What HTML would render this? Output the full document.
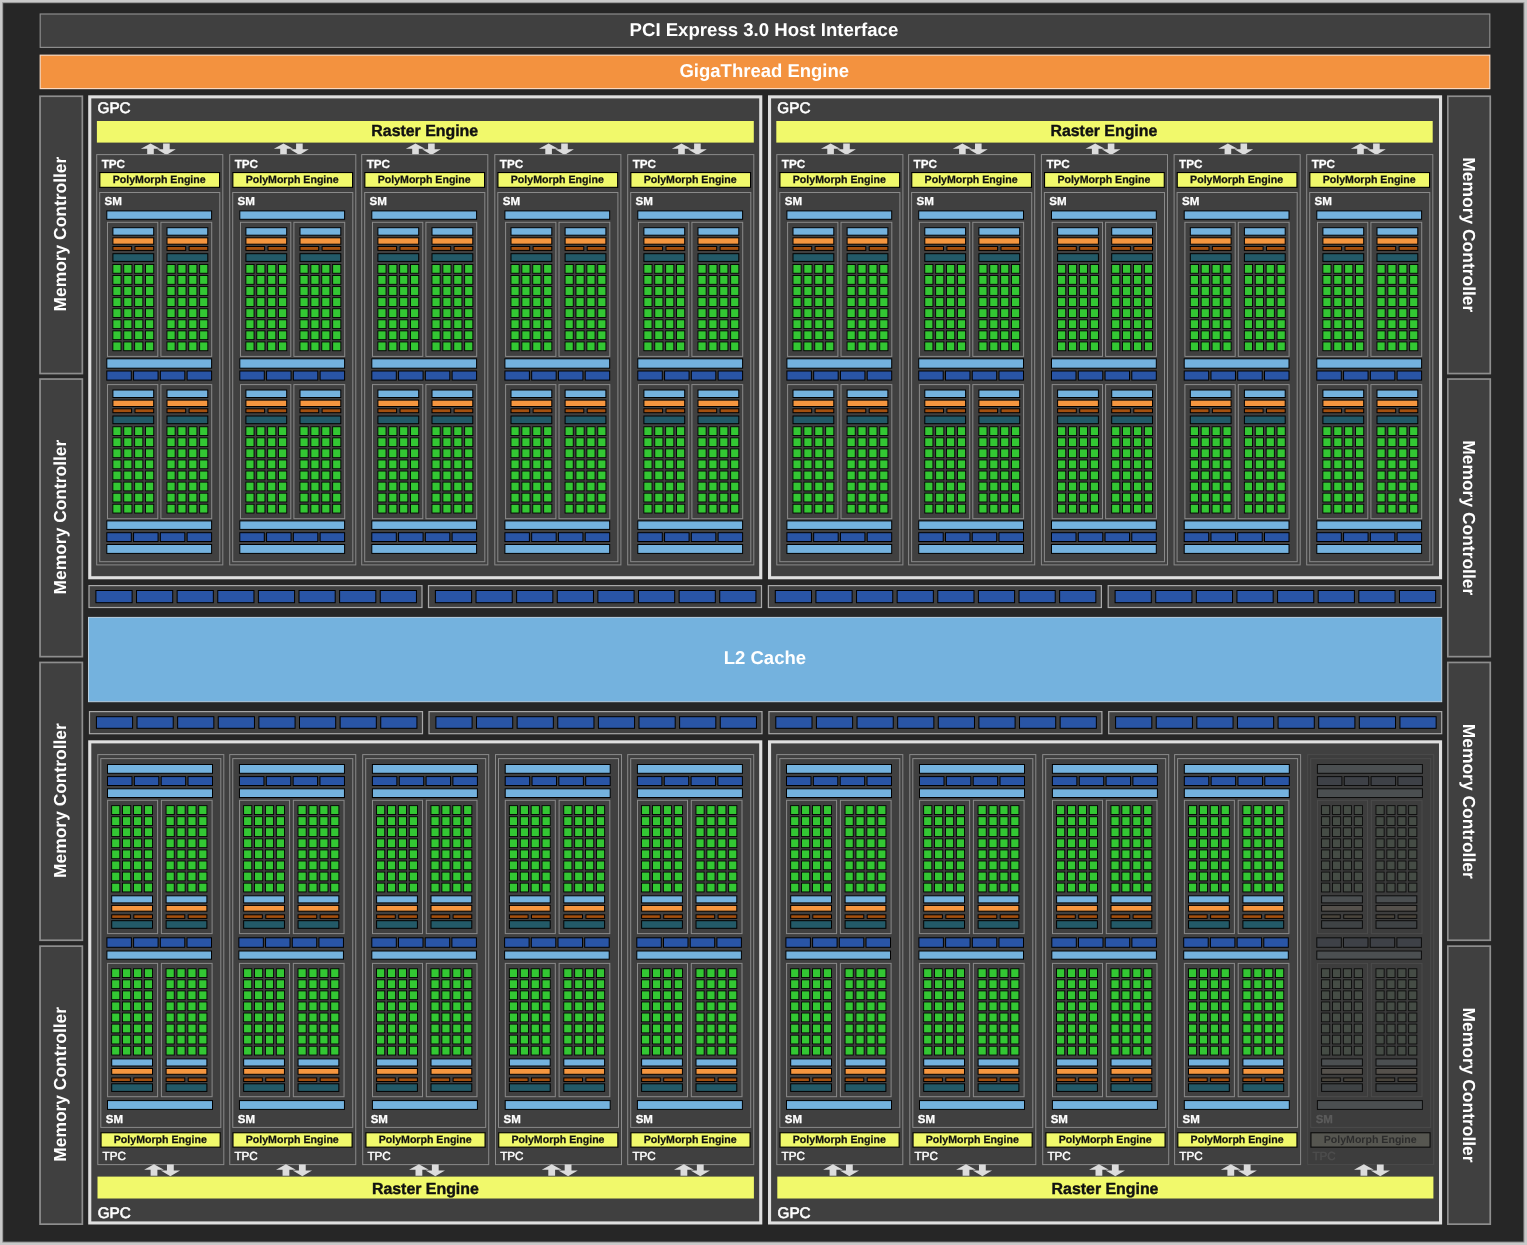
<!DOCTYPE html>
<html lang="en"><head><meta charset="utf-8"><title>GPU Block Diagram</title>
<style>
html,body{margin:0;padding:0;background:#262626;}
body{width:1527px;height:1245px;overflow:hidden;font-family:"Liberation Sans",Arial,sans-serif;}
svg{display:block;will-change:transform;text-rendering:geometricPrecision;}
</style></head><body>
<svg width="1527" height="1245" viewBox="0 0 1527 1245" font-family="'Liberation Sans', Arial, sans-serif" font-weight="bold">
<rect x="0" y="0" width="1527" height="1245" fill="#c9c9c9"/>
<rect x="2.2" y="2.2" width="1522.2" height="1240.4" fill="#8f8f8f"/>
<rect x="3.2" y="3.2" width="1520.2" height="1238.4" fill="#262626"/>
<rect x="40.2" y="14" width="1449.6" height="33.4" fill="#404040" stroke="#8c8c8c" stroke-width="1.2"/>
<text x="763.9" y="35.7" font-size="18.6" fill="#fff" text-anchor="middle">PCI Express 3.0 Host Interface</text>
<rect x="40.2" y="55.2" width="1449.6" height="33.4" fill="#f3923f" stroke="#fbd9c0" stroke-width="1.2"/>
<text x="764.3" y="76.8" font-size="18.5" fill="#fff" text-anchor="middle">GigaThread Engine</text>
<rect x="40.05" y="96.25" width="42.3" height="277.3" fill="#404040" stroke="#8e8e8e" stroke-width="1.7"/>
<text transform="translate(65.9,234.1) rotate(-90)" font-size="17.42" fill="#fff" text-anchor="middle">Memory Controller</text>
<rect x="1447.85" y="96.25" width="42.4" height="277.3" fill="#404040" stroke="#8e8e8e" stroke-width="1.7"/>
<text transform="translate(1463.3,234.8) rotate(90)" font-size="17.45" fill="#fff" text-anchor="middle">Memory Controller</text>
<rect x="40.05" y="379.05" width="42.3" height="277.6" fill="#404040" stroke="#8e8e8e" stroke-width="1.7"/>
<text transform="translate(65.9,517.05) rotate(-90)" font-size="17.42" fill="#fff" text-anchor="middle">Memory Controller</text>
<rect x="1447.85" y="379.05" width="42.4" height="277.6" fill="#404040" stroke="#8e8e8e" stroke-width="1.7"/>
<text transform="translate(1463.3,517.75) rotate(90)" font-size="17.45" fill="#fff" text-anchor="middle">Memory Controller</text>
<rect x="40.05" y="662.45" width="42.3" height="277.8" fill="#404040" stroke="#8e8e8e" stroke-width="1.7"/>
<text transform="translate(65.9,800.55) rotate(-90)" font-size="17.42" fill="#fff" text-anchor="middle">Memory Controller</text>
<rect x="1447.85" y="662.45" width="42.4" height="277.8" fill="#404040" stroke="#8e8e8e" stroke-width="1.7"/>
<text transform="translate(1463.3,801.25) rotate(90)" font-size="17.45" fill="#fff" text-anchor="middle">Memory Controller</text>
<rect x="40.05" y="946.15" width="42.3" height="278" fill="#404040" stroke="#8e8e8e" stroke-width="1.7"/>
<text transform="translate(65.9,1084.35) rotate(-90)" font-size="17.42" fill="#fff" text-anchor="middle">Memory Controller</text>
<rect x="1447.85" y="946.15" width="42.4" height="278" fill="#404040" stroke="#8e8e8e" stroke-width="1.7"/>
<text transform="translate(1463.3,1085.05) rotate(90)" font-size="17.45" fill="#fff" text-anchor="middle">Memory Controller</text>
<rect x="89.75" y="96.85" width="671" height="480.9" fill="#404040" stroke="#dfdfdf" stroke-width="3.1"/>
<text x="97.5" y="112.6" font-size="15.3" fill="#fff" font-weight="normal" stroke="#fff" stroke-width="0.6">GPC</text>
<rect x="96.9" y="121" width="656.9" height="21.6" fill="#f1f96b"/>
<text x="424.75" y="135.8" font-size="15.9" fill="#111" text-anchor="middle" stroke="#111" stroke-width="0.4">Raster Engine</text>
<polygon fill="#dcdcdc" points="150.5,143.4 160.1,148.66 153.8,148.66 153.8,154.6 147.2,154.6 147.2,148.66 140.9,148.66"/>
<polygon fill="#dcdcdc" points="163.1,143.6 169.7,143.6 169.7,149.34 175.8,149.34 166.4,155 157.1,149.34 163.1,149.34"/>
<rect x="96.7" y="154.6" width="126.1" height="410.3" fill="#404040" stroke="#8a8a8a" stroke-width="1"/>
<text x="101.7" y="167.7" font-size="11.7" fill="#fff" stroke="#fff" stroke-width="0.25">TPC</text>
<rect x="99.85" y="172.55" width="119.7" height="14.8" fill="#f1f96b" stroke="#000" stroke-width="1.1"/>
<text x="159.2" y="182.7" font-size="10.6" fill="#111" text-anchor="middle" stroke="#111" stroke-width="0.25">PolyMorph Engine</text>
<rect x="99.7" y="192.5" width="120.1" height="369.2" fill="#404040" stroke="#8a8a8a" stroke-width="1"/>
<text x="104.6" y="205.1" font-size="11.6" fill="#fff" stroke="#fff" stroke-width="0.25">SM</text>
<rect x="106.8" y="210.9" width="104.8" height="8.4" fill="#74b2de" stroke="#000" stroke-width="1"/>
<rect x="107.5" y="222.3" width="50.3" height="134.1" fill="#404040" stroke="#8a8a8a" stroke-width="1"/>
<rect x="160.9" y="222.3" width="50.8" height="134.1" fill="#404040" stroke="#8a8a8a" stroke-width="1"/>
<g transform="translate(112.4,221.8)">
<rect x="0.5" y="5.9" width="40.8" height="7.5" fill="#74b2de" stroke="#000" stroke-width="1"/>
<rect x="0.5" y="16" width="40.8" height="6.4" fill="#f5963f" stroke="#000" stroke-width="1"/>
<rect x="0.5" y="24.7" width="18.7" height="3.9" fill="#a5500f" stroke="#000" stroke-width="1"/>
<rect x="22.6" y="24.7" width="18.7" height="3.9" fill="#a5500f" stroke="#000" stroke-width="1"/>
<rect x="0.5" y="31.9" width="40.8" height="7.7" fill="#235a68" stroke="#000" stroke-width="1"/>
<g fill="#33c733" stroke="#000" stroke-width="0.9">
<rect x="0.45" y="42.65" width="8.2" height="8.8"/>
<rect x="11.35" y="42.65" width="8.2" height="8.8"/>
<rect x="22.25" y="42.65" width="8.2" height="8.8"/>
<rect x="33.15" y="42.65" width="8.2" height="8.8"/>
<rect x="0.45" y="53.72" width="8.2" height="8.8"/>
<rect x="11.35" y="53.72" width="8.2" height="8.8"/>
<rect x="22.25" y="53.72" width="8.2" height="8.8"/>
<rect x="33.15" y="53.72" width="8.2" height="8.8"/>
<rect x="0.45" y="64.79" width="8.2" height="8.8"/>
<rect x="11.35" y="64.79" width="8.2" height="8.8"/>
<rect x="22.25" y="64.79" width="8.2" height="8.8"/>
<rect x="33.15" y="64.79" width="8.2" height="8.8"/>
<rect x="0.45" y="75.86" width="8.2" height="8.8"/>
<rect x="11.35" y="75.86" width="8.2" height="8.8"/>
<rect x="22.25" y="75.86" width="8.2" height="8.8"/>
<rect x="33.15" y="75.86" width="8.2" height="8.8"/>
<rect x="0.45" y="86.93" width="8.2" height="8.8"/>
<rect x="11.35" y="86.93" width="8.2" height="8.8"/>
<rect x="22.25" y="86.93" width="8.2" height="8.8"/>
<rect x="33.15" y="86.93" width="8.2" height="8.8"/>
<rect x="0.45" y="98" width="8.2" height="8.8"/>
<rect x="11.35" y="98" width="8.2" height="8.8"/>
<rect x="22.25" y="98" width="8.2" height="8.8"/>
<rect x="33.15" y="98" width="8.2" height="8.8"/>
<rect x="0.45" y="109.07" width="8.2" height="8.8"/>
<rect x="11.35" y="109.07" width="8.2" height="8.8"/>
<rect x="22.25" y="109.07" width="8.2" height="8.8"/>
<rect x="33.15" y="109.07" width="8.2" height="8.8"/>
<rect x="0.45" y="120.14" width="8.2" height="8.8"/>
<rect x="11.35" y="120.14" width="8.2" height="8.8"/>
<rect x="22.25" y="120.14" width="8.2" height="8.8"/>
<rect x="33.15" y="120.14" width="8.2" height="8.8"/>
</g>
</g>
<g transform="translate(166.5,221.8)">
<rect x="0.5" y="5.9" width="40.8" height="7.5" fill="#74b2de" stroke="#000" stroke-width="1"/>
<rect x="0.5" y="16" width="40.8" height="6.4" fill="#f5963f" stroke="#000" stroke-width="1"/>
<rect x="0.5" y="24.7" width="18.7" height="3.9" fill="#a5500f" stroke="#000" stroke-width="1"/>
<rect x="22.6" y="24.7" width="18.7" height="3.9" fill="#a5500f" stroke="#000" stroke-width="1"/>
<rect x="0.5" y="31.9" width="40.8" height="7.7" fill="#235a68" stroke="#000" stroke-width="1"/>
<g fill="#33c733" stroke="#000" stroke-width="0.9">
<rect x="0.45" y="42.65" width="8.2" height="8.8"/>
<rect x="11.35" y="42.65" width="8.2" height="8.8"/>
<rect x="22.25" y="42.65" width="8.2" height="8.8"/>
<rect x="33.15" y="42.65" width="8.2" height="8.8"/>
<rect x="0.45" y="53.72" width="8.2" height="8.8"/>
<rect x="11.35" y="53.72" width="8.2" height="8.8"/>
<rect x="22.25" y="53.72" width="8.2" height="8.8"/>
<rect x="33.15" y="53.72" width="8.2" height="8.8"/>
<rect x="0.45" y="64.79" width="8.2" height="8.8"/>
<rect x="11.35" y="64.79" width="8.2" height="8.8"/>
<rect x="22.25" y="64.79" width="8.2" height="8.8"/>
<rect x="33.15" y="64.79" width="8.2" height="8.8"/>
<rect x="0.45" y="75.86" width="8.2" height="8.8"/>
<rect x="11.35" y="75.86" width="8.2" height="8.8"/>
<rect x="22.25" y="75.86" width="8.2" height="8.8"/>
<rect x="33.15" y="75.86" width="8.2" height="8.8"/>
<rect x="0.45" y="86.93" width="8.2" height="8.8"/>
<rect x="11.35" y="86.93" width="8.2" height="8.8"/>
<rect x="22.25" y="86.93" width="8.2" height="8.8"/>
<rect x="33.15" y="86.93" width="8.2" height="8.8"/>
<rect x="0.45" y="98" width="8.2" height="8.8"/>
<rect x="11.35" y="98" width="8.2" height="8.8"/>
<rect x="22.25" y="98" width="8.2" height="8.8"/>
<rect x="33.15" y="98" width="8.2" height="8.8"/>
<rect x="0.45" y="109.07" width="8.2" height="8.8"/>
<rect x="11.35" y="109.07" width="8.2" height="8.8"/>
<rect x="22.25" y="109.07" width="8.2" height="8.8"/>
<rect x="33.15" y="109.07" width="8.2" height="8.8"/>
<rect x="0.45" y="120.14" width="8.2" height="8.8"/>
<rect x="11.35" y="120.14" width="8.2" height="8.8"/>
<rect x="22.25" y="120.14" width="8.2" height="8.8"/>
<rect x="33.15" y="120.14" width="8.2" height="8.8"/>
</g>
</g>
<rect x="107.5" y="384.6" width="50.3" height="134.1" fill="#404040" stroke="#8a8a8a" stroke-width="1"/>
<rect x="160.9" y="384.6" width="50.8" height="134.1" fill="#404040" stroke="#8a8a8a" stroke-width="1"/>
<g transform="translate(112.4,384.1)">
<rect x="0.5" y="5.9" width="40.8" height="7.5" fill="#74b2de" stroke="#000" stroke-width="1"/>
<rect x="0.5" y="16" width="40.8" height="6.4" fill="#f5963f" stroke="#000" stroke-width="1"/>
<rect x="0.5" y="24.7" width="18.7" height="3.9" fill="#a5500f" stroke="#000" stroke-width="1"/>
<rect x="22.6" y="24.7" width="18.7" height="3.9" fill="#a5500f" stroke="#000" stroke-width="1"/>
<rect x="0.5" y="31.9" width="40.8" height="7.7" fill="#235a68" stroke="#000" stroke-width="1"/>
<g fill="#33c733" stroke="#000" stroke-width="0.9">
<rect x="0.45" y="42.65" width="8.2" height="8.8"/>
<rect x="11.35" y="42.65" width="8.2" height="8.8"/>
<rect x="22.25" y="42.65" width="8.2" height="8.8"/>
<rect x="33.15" y="42.65" width="8.2" height="8.8"/>
<rect x="0.45" y="53.72" width="8.2" height="8.8"/>
<rect x="11.35" y="53.72" width="8.2" height="8.8"/>
<rect x="22.25" y="53.72" width="8.2" height="8.8"/>
<rect x="33.15" y="53.72" width="8.2" height="8.8"/>
<rect x="0.45" y="64.79" width="8.2" height="8.8"/>
<rect x="11.35" y="64.79" width="8.2" height="8.8"/>
<rect x="22.25" y="64.79" width="8.2" height="8.8"/>
<rect x="33.15" y="64.79" width="8.2" height="8.8"/>
<rect x="0.45" y="75.86" width="8.2" height="8.8"/>
<rect x="11.35" y="75.86" width="8.2" height="8.8"/>
<rect x="22.25" y="75.86" width="8.2" height="8.8"/>
<rect x="33.15" y="75.86" width="8.2" height="8.8"/>
<rect x="0.45" y="86.93" width="8.2" height="8.8"/>
<rect x="11.35" y="86.93" width="8.2" height="8.8"/>
<rect x="22.25" y="86.93" width="8.2" height="8.8"/>
<rect x="33.15" y="86.93" width="8.2" height="8.8"/>
<rect x="0.45" y="98" width="8.2" height="8.8"/>
<rect x="11.35" y="98" width="8.2" height="8.8"/>
<rect x="22.25" y="98" width="8.2" height="8.8"/>
<rect x="33.15" y="98" width="8.2" height="8.8"/>
<rect x="0.45" y="109.07" width="8.2" height="8.8"/>
<rect x="11.35" y="109.07" width="8.2" height="8.8"/>
<rect x="22.25" y="109.07" width="8.2" height="8.8"/>
<rect x="33.15" y="109.07" width="8.2" height="8.8"/>
<rect x="0.45" y="120.14" width="8.2" height="8.8"/>
<rect x="11.35" y="120.14" width="8.2" height="8.8"/>
<rect x="22.25" y="120.14" width="8.2" height="8.8"/>
<rect x="33.15" y="120.14" width="8.2" height="8.8"/>
</g>
</g>
<g transform="translate(166.5,384.1)">
<rect x="0.5" y="5.9" width="40.8" height="7.5" fill="#74b2de" stroke="#000" stroke-width="1"/>
<rect x="0.5" y="16" width="40.8" height="6.4" fill="#f5963f" stroke="#000" stroke-width="1"/>
<rect x="0.5" y="24.7" width="18.7" height="3.9" fill="#a5500f" stroke="#000" stroke-width="1"/>
<rect x="22.6" y="24.7" width="18.7" height="3.9" fill="#a5500f" stroke="#000" stroke-width="1"/>
<rect x="0.5" y="31.9" width="40.8" height="7.7" fill="#235a68" stroke="#000" stroke-width="1"/>
<g fill="#33c733" stroke="#000" stroke-width="0.9">
<rect x="0.45" y="42.65" width="8.2" height="8.8"/>
<rect x="11.35" y="42.65" width="8.2" height="8.8"/>
<rect x="22.25" y="42.65" width="8.2" height="8.8"/>
<rect x="33.15" y="42.65" width="8.2" height="8.8"/>
<rect x="0.45" y="53.72" width="8.2" height="8.8"/>
<rect x="11.35" y="53.72" width="8.2" height="8.8"/>
<rect x="22.25" y="53.72" width="8.2" height="8.8"/>
<rect x="33.15" y="53.72" width="8.2" height="8.8"/>
<rect x="0.45" y="64.79" width="8.2" height="8.8"/>
<rect x="11.35" y="64.79" width="8.2" height="8.8"/>
<rect x="22.25" y="64.79" width="8.2" height="8.8"/>
<rect x="33.15" y="64.79" width="8.2" height="8.8"/>
<rect x="0.45" y="75.86" width="8.2" height="8.8"/>
<rect x="11.35" y="75.86" width="8.2" height="8.8"/>
<rect x="22.25" y="75.86" width="8.2" height="8.8"/>
<rect x="33.15" y="75.86" width="8.2" height="8.8"/>
<rect x="0.45" y="86.93" width="8.2" height="8.8"/>
<rect x="11.35" y="86.93" width="8.2" height="8.8"/>
<rect x="22.25" y="86.93" width="8.2" height="8.8"/>
<rect x="33.15" y="86.93" width="8.2" height="8.8"/>
<rect x="0.45" y="98" width="8.2" height="8.8"/>
<rect x="11.35" y="98" width="8.2" height="8.8"/>
<rect x="22.25" y="98" width="8.2" height="8.8"/>
<rect x="33.15" y="98" width="8.2" height="8.8"/>
<rect x="0.45" y="109.07" width="8.2" height="8.8"/>
<rect x="11.35" y="109.07" width="8.2" height="8.8"/>
<rect x="22.25" y="109.07" width="8.2" height="8.8"/>
<rect x="33.15" y="109.07" width="8.2" height="8.8"/>
<rect x="0.45" y="120.14" width="8.2" height="8.8"/>
<rect x="11.35" y="120.14" width="8.2" height="8.8"/>
<rect x="22.25" y="120.14" width="8.2" height="8.8"/>
<rect x="33.15" y="120.14" width="8.2" height="8.8"/>
</g>
</g>
<rect x="106.8" y="358.8" width="104.8" height="9.4" fill="#74b2de" stroke="#000" stroke-width="1"/>
<rect x="106.8" y="371" width="24.5" height="9.1" fill="#2955a6" stroke="#000" stroke-width="1"/>
<rect x="133.57" y="371" width="24.5" height="9.1" fill="#2955a6" stroke="#000" stroke-width="1"/>
<rect x="160.33" y="371" width="24.5" height="9.1" fill="#2955a6" stroke="#000" stroke-width="1"/>
<rect x="187.1" y="371" width="24.5" height="9.1" fill="#2955a6" stroke="#000" stroke-width="1"/>
<rect x="106.8" y="520.9" width="104.8" height="8.5" fill="#74b2de" stroke="#000" stroke-width="1"/>
<rect x="106.8" y="532.7" width="24.5" height="8.8" fill="#2955a6" stroke="#000" stroke-width="1"/>
<rect x="133.57" y="532.7" width="24.5" height="8.8" fill="#2955a6" stroke="#000" stroke-width="1"/>
<rect x="160.33" y="532.7" width="24.5" height="8.8" fill="#2955a6" stroke="#000" stroke-width="1"/>
<rect x="187.1" y="532.7" width="24.5" height="8.8" fill="#2955a6" stroke="#000" stroke-width="1"/>
<rect x="106.8" y="544.5" width="104.8" height="8.9" fill="#74b2de" stroke="#000" stroke-width="1"/>
<polygon fill="#dcdcdc" points="283.5,143.4 293.1,148.66 286.8,148.66 286.8,154.6 280.2,154.6 280.2,148.66 273.9,148.66"/>
<polygon fill="#dcdcdc" points="296.1,143.6 302.7,143.6 302.7,149.34 308.8,149.34 299.4,155 290.1,149.34 296.1,149.34"/>
<rect x="229.7" y="154.6" width="126.1" height="410.3" fill="#404040" stroke="#8a8a8a" stroke-width="1"/>
<text x="234.7" y="167.7" font-size="11.7" fill="#fff" stroke="#fff" stroke-width="0.25">TPC</text>
<rect x="232.85" y="172.55" width="119.7" height="14.8" fill="#f1f96b" stroke="#000" stroke-width="1.1"/>
<text x="292.2" y="182.7" font-size="10.6" fill="#111" text-anchor="middle" stroke="#111" stroke-width="0.25">PolyMorph Engine</text>
<rect x="232.7" y="192.5" width="120.1" height="369.2" fill="#404040" stroke="#8a8a8a" stroke-width="1"/>
<text x="237.6" y="205.1" font-size="11.6" fill="#fff" stroke="#fff" stroke-width="0.25">SM</text>
<rect x="239.8" y="210.9" width="104.8" height="8.4" fill="#74b2de" stroke="#000" stroke-width="1"/>
<rect x="240.5" y="222.3" width="50.3" height="134.1" fill="#404040" stroke="#8a8a8a" stroke-width="1"/>
<rect x="293.9" y="222.3" width="50.8" height="134.1" fill="#404040" stroke="#8a8a8a" stroke-width="1"/>
<g transform="translate(245.4,221.8)">
<rect x="0.5" y="5.9" width="40.8" height="7.5" fill="#74b2de" stroke="#000" stroke-width="1"/>
<rect x="0.5" y="16" width="40.8" height="6.4" fill="#f5963f" stroke="#000" stroke-width="1"/>
<rect x="0.5" y="24.7" width="18.7" height="3.9" fill="#a5500f" stroke="#000" stroke-width="1"/>
<rect x="22.6" y="24.7" width="18.7" height="3.9" fill="#a5500f" stroke="#000" stroke-width="1"/>
<rect x="0.5" y="31.9" width="40.8" height="7.7" fill="#235a68" stroke="#000" stroke-width="1"/>
<g fill="#33c733" stroke="#000" stroke-width="0.9">
<rect x="0.45" y="42.65" width="8.2" height="8.8"/>
<rect x="11.35" y="42.65" width="8.2" height="8.8"/>
<rect x="22.25" y="42.65" width="8.2" height="8.8"/>
<rect x="33.15" y="42.65" width="8.2" height="8.8"/>
<rect x="0.45" y="53.72" width="8.2" height="8.8"/>
<rect x="11.35" y="53.72" width="8.2" height="8.8"/>
<rect x="22.25" y="53.72" width="8.2" height="8.8"/>
<rect x="33.15" y="53.72" width="8.2" height="8.8"/>
<rect x="0.45" y="64.79" width="8.2" height="8.8"/>
<rect x="11.35" y="64.79" width="8.2" height="8.8"/>
<rect x="22.25" y="64.79" width="8.2" height="8.8"/>
<rect x="33.15" y="64.79" width="8.2" height="8.8"/>
<rect x="0.45" y="75.86" width="8.2" height="8.8"/>
<rect x="11.35" y="75.86" width="8.2" height="8.8"/>
<rect x="22.25" y="75.86" width="8.2" height="8.8"/>
<rect x="33.15" y="75.86" width="8.2" height="8.8"/>
<rect x="0.45" y="86.93" width="8.2" height="8.8"/>
<rect x="11.35" y="86.93" width="8.2" height="8.8"/>
<rect x="22.25" y="86.93" width="8.2" height="8.8"/>
<rect x="33.15" y="86.93" width="8.2" height="8.8"/>
<rect x="0.45" y="98" width="8.2" height="8.8"/>
<rect x="11.35" y="98" width="8.2" height="8.8"/>
<rect x="22.25" y="98" width="8.2" height="8.8"/>
<rect x="33.15" y="98" width="8.2" height="8.8"/>
<rect x="0.45" y="109.07" width="8.2" height="8.8"/>
<rect x="11.35" y="109.07" width="8.2" height="8.8"/>
<rect x="22.25" y="109.07" width="8.2" height="8.8"/>
<rect x="33.15" y="109.07" width="8.2" height="8.8"/>
<rect x="0.45" y="120.14" width="8.2" height="8.8"/>
<rect x="11.35" y="120.14" width="8.2" height="8.8"/>
<rect x="22.25" y="120.14" width="8.2" height="8.8"/>
<rect x="33.15" y="120.14" width="8.2" height="8.8"/>
</g>
</g>
<g transform="translate(299.5,221.8)">
<rect x="0.5" y="5.9" width="40.8" height="7.5" fill="#74b2de" stroke="#000" stroke-width="1"/>
<rect x="0.5" y="16" width="40.8" height="6.4" fill="#f5963f" stroke="#000" stroke-width="1"/>
<rect x="0.5" y="24.7" width="18.7" height="3.9" fill="#a5500f" stroke="#000" stroke-width="1"/>
<rect x="22.6" y="24.7" width="18.7" height="3.9" fill="#a5500f" stroke="#000" stroke-width="1"/>
<rect x="0.5" y="31.9" width="40.8" height="7.7" fill="#235a68" stroke="#000" stroke-width="1"/>
<g fill="#33c733" stroke="#000" stroke-width="0.9">
<rect x="0.45" y="42.65" width="8.2" height="8.8"/>
<rect x="11.35" y="42.65" width="8.2" height="8.8"/>
<rect x="22.25" y="42.65" width="8.2" height="8.8"/>
<rect x="33.15" y="42.65" width="8.2" height="8.8"/>
<rect x="0.45" y="53.72" width="8.2" height="8.8"/>
<rect x="11.35" y="53.72" width="8.2" height="8.8"/>
<rect x="22.25" y="53.72" width="8.2" height="8.8"/>
<rect x="33.15" y="53.72" width="8.2" height="8.8"/>
<rect x="0.45" y="64.79" width="8.2" height="8.8"/>
<rect x="11.35" y="64.79" width="8.2" height="8.8"/>
<rect x="22.25" y="64.79" width="8.2" height="8.8"/>
<rect x="33.15" y="64.79" width="8.2" height="8.8"/>
<rect x="0.45" y="75.86" width="8.2" height="8.8"/>
<rect x="11.35" y="75.86" width="8.2" height="8.8"/>
<rect x="22.25" y="75.86" width="8.2" height="8.8"/>
<rect x="33.15" y="75.86" width="8.2" height="8.8"/>
<rect x="0.45" y="86.93" width="8.2" height="8.8"/>
<rect x="11.35" y="86.93" width="8.2" height="8.8"/>
<rect x="22.25" y="86.93" width="8.2" height="8.8"/>
<rect x="33.15" y="86.93" width="8.2" height="8.8"/>
<rect x="0.45" y="98" width="8.2" height="8.8"/>
<rect x="11.35" y="98" width="8.2" height="8.8"/>
<rect x="22.25" y="98" width="8.2" height="8.8"/>
<rect x="33.15" y="98" width="8.2" height="8.8"/>
<rect x="0.45" y="109.07" width="8.2" height="8.8"/>
<rect x="11.35" y="109.07" width="8.2" height="8.8"/>
<rect x="22.25" y="109.07" width="8.2" height="8.8"/>
<rect x="33.15" y="109.07" width="8.2" height="8.8"/>
<rect x="0.45" y="120.14" width="8.2" height="8.8"/>
<rect x="11.35" y="120.14" width="8.2" height="8.8"/>
<rect x="22.25" y="120.14" width="8.2" height="8.8"/>
<rect x="33.15" y="120.14" width="8.2" height="8.8"/>
</g>
</g>
<rect x="240.5" y="384.6" width="50.3" height="134.1" fill="#404040" stroke="#8a8a8a" stroke-width="1"/>
<rect x="293.9" y="384.6" width="50.8" height="134.1" fill="#404040" stroke="#8a8a8a" stroke-width="1"/>
<g transform="translate(245.4,384.1)">
<rect x="0.5" y="5.9" width="40.8" height="7.5" fill="#74b2de" stroke="#000" stroke-width="1"/>
<rect x="0.5" y="16" width="40.8" height="6.4" fill="#f5963f" stroke="#000" stroke-width="1"/>
<rect x="0.5" y="24.7" width="18.7" height="3.9" fill="#a5500f" stroke="#000" stroke-width="1"/>
<rect x="22.6" y="24.7" width="18.7" height="3.9" fill="#a5500f" stroke="#000" stroke-width="1"/>
<rect x="0.5" y="31.9" width="40.8" height="7.7" fill="#235a68" stroke="#000" stroke-width="1"/>
<g fill="#33c733" stroke="#000" stroke-width="0.9">
<rect x="0.45" y="42.65" width="8.2" height="8.8"/>
<rect x="11.35" y="42.65" width="8.2" height="8.8"/>
<rect x="22.25" y="42.65" width="8.2" height="8.8"/>
<rect x="33.15" y="42.65" width="8.2" height="8.8"/>
<rect x="0.45" y="53.72" width="8.2" height="8.8"/>
<rect x="11.35" y="53.72" width="8.2" height="8.8"/>
<rect x="22.25" y="53.72" width="8.2" height="8.8"/>
<rect x="33.15" y="53.72" width="8.2" height="8.8"/>
<rect x="0.45" y="64.79" width="8.2" height="8.8"/>
<rect x="11.35" y="64.79" width="8.2" height="8.8"/>
<rect x="22.25" y="64.79" width="8.2" height="8.8"/>
<rect x="33.15" y="64.79" width="8.2" height="8.8"/>
<rect x="0.45" y="75.86" width="8.2" height="8.8"/>
<rect x="11.35" y="75.86" width="8.2" height="8.8"/>
<rect x="22.25" y="75.86" width="8.2" height="8.8"/>
<rect x="33.15" y="75.86" width="8.2" height="8.8"/>
<rect x="0.45" y="86.93" width="8.2" height="8.8"/>
<rect x="11.35" y="86.93" width="8.2" height="8.8"/>
<rect x="22.25" y="86.93" width="8.2" height="8.8"/>
<rect x="33.15" y="86.93" width="8.2" height="8.8"/>
<rect x="0.45" y="98" width="8.2" height="8.8"/>
<rect x="11.35" y="98" width="8.2" height="8.8"/>
<rect x="22.25" y="98" width="8.2" height="8.8"/>
<rect x="33.15" y="98" width="8.2" height="8.8"/>
<rect x="0.45" y="109.07" width="8.2" height="8.8"/>
<rect x="11.35" y="109.07" width="8.2" height="8.8"/>
<rect x="22.25" y="109.07" width="8.2" height="8.8"/>
<rect x="33.15" y="109.07" width="8.2" height="8.8"/>
<rect x="0.45" y="120.14" width="8.2" height="8.8"/>
<rect x="11.35" y="120.14" width="8.2" height="8.8"/>
<rect x="22.25" y="120.14" width="8.2" height="8.8"/>
<rect x="33.15" y="120.14" width="8.2" height="8.8"/>
</g>
</g>
<g transform="translate(299.5,384.1)">
<rect x="0.5" y="5.9" width="40.8" height="7.5" fill="#74b2de" stroke="#000" stroke-width="1"/>
<rect x="0.5" y="16" width="40.8" height="6.4" fill="#f5963f" stroke="#000" stroke-width="1"/>
<rect x="0.5" y="24.7" width="18.7" height="3.9" fill="#a5500f" stroke="#000" stroke-width="1"/>
<rect x="22.6" y="24.7" width="18.7" height="3.9" fill="#a5500f" stroke="#000" stroke-width="1"/>
<rect x="0.5" y="31.9" width="40.8" height="7.7" fill="#235a68" stroke="#000" stroke-width="1"/>
<g fill="#33c733" stroke="#000" stroke-width="0.9">
<rect x="0.45" y="42.65" width="8.2" height="8.8"/>
<rect x="11.35" y="42.65" width="8.2" height="8.8"/>
<rect x="22.25" y="42.65" width="8.2" height="8.8"/>
<rect x="33.15" y="42.65" width="8.2" height="8.8"/>
<rect x="0.45" y="53.72" width="8.2" height="8.8"/>
<rect x="11.35" y="53.72" width="8.2" height="8.8"/>
<rect x="22.25" y="53.72" width="8.2" height="8.8"/>
<rect x="33.15" y="53.72" width="8.2" height="8.8"/>
<rect x="0.45" y="64.79" width="8.2" height="8.8"/>
<rect x="11.35" y="64.79" width="8.2" height="8.8"/>
<rect x="22.25" y="64.79" width="8.2" height="8.8"/>
<rect x="33.15" y="64.79" width="8.2" height="8.8"/>
<rect x="0.45" y="75.86" width="8.2" height="8.8"/>
<rect x="11.35" y="75.86" width="8.2" height="8.8"/>
<rect x="22.25" y="75.86" width="8.2" height="8.8"/>
<rect x="33.15" y="75.86" width="8.2" height="8.8"/>
<rect x="0.45" y="86.93" width="8.2" height="8.8"/>
<rect x="11.35" y="86.93" width="8.2" height="8.8"/>
<rect x="22.25" y="86.93" width="8.2" height="8.8"/>
<rect x="33.15" y="86.93" width="8.2" height="8.8"/>
<rect x="0.45" y="98" width="8.2" height="8.8"/>
<rect x="11.35" y="98" width="8.2" height="8.8"/>
<rect x="22.25" y="98" width="8.2" height="8.8"/>
<rect x="33.15" y="98" width="8.2" height="8.8"/>
<rect x="0.45" y="109.07" width="8.2" height="8.8"/>
<rect x="11.35" y="109.07" width="8.2" height="8.8"/>
<rect x="22.25" y="109.07" width="8.2" height="8.8"/>
<rect x="33.15" y="109.07" width="8.2" height="8.8"/>
<rect x="0.45" y="120.14" width="8.2" height="8.8"/>
<rect x="11.35" y="120.14" width="8.2" height="8.8"/>
<rect x="22.25" y="120.14" width="8.2" height="8.8"/>
<rect x="33.15" y="120.14" width="8.2" height="8.8"/>
</g>
</g>
<rect x="239.8" y="358.8" width="104.8" height="9.4" fill="#74b2de" stroke="#000" stroke-width="1"/>
<rect x="239.8" y="371" width="24.5" height="9.1" fill="#2955a6" stroke="#000" stroke-width="1"/>
<rect x="266.57" y="371" width="24.5" height="9.1" fill="#2955a6" stroke="#000" stroke-width="1"/>
<rect x="293.33" y="371" width="24.5" height="9.1" fill="#2955a6" stroke="#000" stroke-width="1"/>
<rect x="320.1" y="371" width="24.5" height="9.1" fill="#2955a6" stroke="#000" stroke-width="1"/>
<rect x="239.8" y="520.9" width="104.8" height="8.5" fill="#74b2de" stroke="#000" stroke-width="1"/>
<rect x="239.8" y="532.7" width="24.5" height="8.8" fill="#2955a6" stroke="#000" stroke-width="1"/>
<rect x="266.57" y="532.7" width="24.5" height="8.8" fill="#2955a6" stroke="#000" stroke-width="1"/>
<rect x="293.33" y="532.7" width="24.5" height="8.8" fill="#2955a6" stroke="#000" stroke-width="1"/>
<rect x="320.1" y="532.7" width="24.5" height="8.8" fill="#2955a6" stroke="#000" stroke-width="1"/>
<rect x="239.8" y="544.5" width="104.8" height="8.9" fill="#74b2de" stroke="#000" stroke-width="1"/>
<polygon fill="#dcdcdc" points="415.5,143.4 425.1,148.66 418.8,148.66 418.8,154.6 412.2,154.6 412.2,148.66 405.9,148.66"/>
<polygon fill="#dcdcdc" points="428.1,143.6 434.7,143.6 434.7,149.34 440.8,149.34 431.4,155 422.1,149.34 428.1,149.34"/>
<rect x="361.7" y="154.6" width="126.1" height="410.3" fill="#404040" stroke="#8a8a8a" stroke-width="1"/>
<text x="366.7" y="167.7" font-size="11.7" fill="#fff" stroke="#fff" stroke-width="0.25">TPC</text>
<rect x="364.85" y="172.55" width="119.7" height="14.8" fill="#f1f96b" stroke="#000" stroke-width="1.1"/>
<text x="424.2" y="182.7" font-size="10.6" fill="#111" text-anchor="middle" stroke="#111" stroke-width="0.25">PolyMorph Engine</text>
<rect x="364.7" y="192.5" width="120.1" height="369.2" fill="#404040" stroke="#8a8a8a" stroke-width="1"/>
<text x="369.6" y="205.1" font-size="11.6" fill="#fff" stroke="#fff" stroke-width="0.25">SM</text>
<rect x="371.8" y="210.9" width="104.8" height="8.4" fill="#74b2de" stroke="#000" stroke-width="1"/>
<rect x="372.5" y="222.3" width="50.3" height="134.1" fill="#404040" stroke="#8a8a8a" stroke-width="1"/>
<rect x="425.9" y="222.3" width="50.8" height="134.1" fill="#404040" stroke="#8a8a8a" stroke-width="1"/>
<g transform="translate(377.4,221.8)">
<rect x="0.5" y="5.9" width="40.8" height="7.5" fill="#74b2de" stroke="#000" stroke-width="1"/>
<rect x="0.5" y="16" width="40.8" height="6.4" fill="#f5963f" stroke="#000" stroke-width="1"/>
<rect x="0.5" y="24.7" width="18.7" height="3.9" fill="#a5500f" stroke="#000" stroke-width="1"/>
<rect x="22.6" y="24.7" width="18.7" height="3.9" fill="#a5500f" stroke="#000" stroke-width="1"/>
<rect x="0.5" y="31.9" width="40.8" height="7.7" fill="#235a68" stroke="#000" stroke-width="1"/>
<g fill="#33c733" stroke="#000" stroke-width="0.9">
<rect x="0.45" y="42.65" width="8.2" height="8.8"/>
<rect x="11.35" y="42.65" width="8.2" height="8.8"/>
<rect x="22.25" y="42.65" width="8.2" height="8.8"/>
<rect x="33.15" y="42.65" width="8.2" height="8.8"/>
<rect x="0.45" y="53.72" width="8.2" height="8.8"/>
<rect x="11.35" y="53.72" width="8.2" height="8.8"/>
<rect x="22.25" y="53.72" width="8.2" height="8.8"/>
<rect x="33.15" y="53.72" width="8.2" height="8.8"/>
<rect x="0.45" y="64.79" width="8.2" height="8.8"/>
<rect x="11.35" y="64.79" width="8.2" height="8.8"/>
<rect x="22.25" y="64.79" width="8.2" height="8.8"/>
<rect x="33.15" y="64.79" width="8.2" height="8.8"/>
<rect x="0.45" y="75.86" width="8.2" height="8.8"/>
<rect x="11.35" y="75.86" width="8.2" height="8.8"/>
<rect x="22.25" y="75.86" width="8.2" height="8.8"/>
<rect x="33.15" y="75.86" width="8.2" height="8.8"/>
<rect x="0.45" y="86.93" width="8.2" height="8.8"/>
<rect x="11.35" y="86.93" width="8.2" height="8.8"/>
<rect x="22.25" y="86.93" width="8.2" height="8.8"/>
<rect x="33.15" y="86.93" width="8.2" height="8.8"/>
<rect x="0.45" y="98" width="8.2" height="8.8"/>
<rect x="11.35" y="98" width="8.2" height="8.8"/>
<rect x="22.25" y="98" width="8.2" height="8.8"/>
<rect x="33.15" y="98" width="8.2" height="8.8"/>
<rect x="0.45" y="109.07" width="8.2" height="8.8"/>
<rect x="11.35" y="109.07" width="8.2" height="8.8"/>
<rect x="22.25" y="109.07" width="8.2" height="8.8"/>
<rect x="33.15" y="109.07" width="8.2" height="8.8"/>
<rect x="0.45" y="120.14" width="8.2" height="8.8"/>
<rect x="11.35" y="120.14" width="8.2" height="8.8"/>
<rect x="22.25" y="120.14" width="8.2" height="8.8"/>
<rect x="33.15" y="120.14" width="8.2" height="8.8"/>
</g>
</g>
<g transform="translate(431.5,221.8)">
<rect x="0.5" y="5.9" width="40.8" height="7.5" fill="#74b2de" stroke="#000" stroke-width="1"/>
<rect x="0.5" y="16" width="40.8" height="6.4" fill="#f5963f" stroke="#000" stroke-width="1"/>
<rect x="0.5" y="24.7" width="18.7" height="3.9" fill="#a5500f" stroke="#000" stroke-width="1"/>
<rect x="22.6" y="24.7" width="18.7" height="3.9" fill="#a5500f" stroke="#000" stroke-width="1"/>
<rect x="0.5" y="31.9" width="40.8" height="7.7" fill="#235a68" stroke="#000" stroke-width="1"/>
<g fill="#33c733" stroke="#000" stroke-width="0.9">
<rect x="0.45" y="42.65" width="8.2" height="8.8"/>
<rect x="11.35" y="42.65" width="8.2" height="8.8"/>
<rect x="22.25" y="42.65" width="8.2" height="8.8"/>
<rect x="33.15" y="42.65" width="8.2" height="8.8"/>
<rect x="0.45" y="53.72" width="8.2" height="8.8"/>
<rect x="11.35" y="53.72" width="8.2" height="8.8"/>
<rect x="22.25" y="53.72" width="8.2" height="8.8"/>
<rect x="33.15" y="53.72" width="8.2" height="8.8"/>
<rect x="0.45" y="64.79" width="8.2" height="8.8"/>
<rect x="11.35" y="64.79" width="8.2" height="8.8"/>
<rect x="22.25" y="64.79" width="8.2" height="8.8"/>
<rect x="33.15" y="64.79" width="8.2" height="8.8"/>
<rect x="0.45" y="75.86" width="8.2" height="8.8"/>
<rect x="11.35" y="75.86" width="8.2" height="8.8"/>
<rect x="22.25" y="75.86" width="8.2" height="8.8"/>
<rect x="33.15" y="75.86" width="8.2" height="8.8"/>
<rect x="0.45" y="86.93" width="8.2" height="8.8"/>
<rect x="11.35" y="86.93" width="8.2" height="8.8"/>
<rect x="22.25" y="86.93" width="8.2" height="8.8"/>
<rect x="33.15" y="86.93" width="8.2" height="8.8"/>
<rect x="0.45" y="98" width="8.2" height="8.8"/>
<rect x="11.35" y="98" width="8.2" height="8.8"/>
<rect x="22.25" y="98" width="8.2" height="8.8"/>
<rect x="33.15" y="98" width="8.2" height="8.8"/>
<rect x="0.45" y="109.07" width="8.2" height="8.8"/>
<rect x="11.35" y="109.07" width="8.2" height="8.8"/>
<rect x="22.25" y="109.07" width="8.2" height="8.8"/>
<rect x="33.15" y="109.07" width="8.2" height="8.8"/>
<rect x="0.45" y="120.14" width="8.2" height="8.8"/>
<rect x="11.35" y="120.14" width="8.2" height="8.8"/>
<rect x="22.25" y="120.14" width="8.2" height="8.8"/>
<rect x="33.15" y="120.14" width="8.2" height="8.8"/>
</g>
</g>
<rect x="372.5" y="384.6" width="50.3" height="134.1" fill="#404040" stroke="#8a8a8a" stroke-width="1"/>
<rect x="425.9" y="384.6" width="50.8" height="134.1" fill="#404040" stroke="#8a8a8a" stroke-width="1"/>
<g transform="translate(377.4,384.1)">
<rect x="0.5" y="5.9" width="40.8" height="7.5" fill="#74b2de" stroke="#000" stroke-width="1"/>
<rect x="0.5" y="16" width="40.8" height="6.4" fill="#f5963f" stroke="#000" stroke-width="1"/>
<rect x="0.5" y="24.7" width="18.7" height="3.9" fill="#a5500f" stroke="#000" stroke-width="1"/>
<rect x="22.6" y="24.7" width="18.7" height="3.9" fill="#a5500f" stroke="#000" stroke-width="1"/>
<rect x="0.5" y="31.9" width="40.8" height="7.7" fill="#235a68" stroke="#000" stroke-width="1"/>
<g fill="#33c733" stroke="#000" stroke-width="0.9">
<rect x="0.45" y="42.65" width="8.2" height="8.8"/>
<rect x="11.35" y="42.65" width="8.2" height="8.8"/>
<rect x="22.25" y="42.65" width="8.2" height="8.8"/>
<rect x="33.15" y="42.65" width="8.2" height="8.8"/>
<rect x="0.45" y="53.72" width="8.2" height="8.8"/>
<rect x="11.35" y="53.72" width="8.2" height="8.8"/>
<rect x="22.25" y="53.72" width="8.2" height="8.8"/>
<rect x="33.15" y="53.72" width="8.2" height="8.8"/>
<rect x="0.45" y="64.79" width="8.2" height="8.8"/>
<rect x="11.35" y="64.79" width="8.2" height="8.8"/>
<rect x="22.25" y="64.79" width="8.2" height="8.8"/>
<rect x="33.15" y="64.79" width="8.2" height="8.8"/>
<rect x="0.45" y="75.86" width="8.2" height="8.8"/>
<rect x="11.35" y="75.86" width="8.2" height="8.8"/>
<rect x="22.25" y="75.86" width="8.2" height="8.8"/>
<rect x="33.15" y="75.86" width="8.2" height="8.8"/>
<rect x="0.45" y="86.93" width="8.2" height="8.8"/>
<rect x="11.35" y="86.93" width="8.2" height="8.8"/>
<rect x="22.25" y="86.93" width="8.2" height="8.8"/>
<rect x="33.15" y="86.93" width="8.2" height="8.8"/>
<rect x="0.45" y="98" width="8.2" height="8.8"/>
<rect x="11.35" y="98" width="8.2" height="8.8"/>
<rect x="22.25" y="98" width="8.2" height="8.8"/>
<rect x="33.15" y="98" width="8.2" height="8.8"/>
<rect x="0.45" y="109.07" width="8.2" height="8.8"/>
<rect x="11.35" y="109.07" width="8.2" height="8.8"/>
<rect x="22.25" y="109.07" width="8.2" height="8.8"/>
<rect x="33.15" y="109.07" width="8.2" height="8.8"/>
<rect x="0.45" y="120.14" width="8.2" height="8.8"/>
<rect x="11.35" y="120.14" width="8.2" height="8.8"/>
<rect x="22.25" y="120.14" width="8.2" height="8.8"/>
<rect x="33.15" y="120.14" width="8.2" height="8.8"/>
</g>
</g>
<g transform="translate(431.5,384.1)">
<rect x="0.5" y="5.9" width="40.8" height="7.5" fill="#74b2de" stroke="#000" stroke-width="1"/>
<rect x="0.5" y="16" width="40.8" height="6.4" fill="#f5963f" stroke="#000" stroke-width="1"/>
<rect x="0.5" y="24.7" width="18.7" height="3.9" fill="#a5500f" stroke="#000" stroke-width="1"/>
<rect x="22.6" y="24.7" width="18.7" height="3.9" fill="#a5500f" stroke="#000" stroke-width="1"/>
<rect x="0.5" y="31.9" width="40.8" height="7.7" fill="#235a68" stroke="#000" stroke-width="1"/>
<g fill="#33c733" stroke="#000" stroke-width="0.9">
<rect x="0.45" y="42.65" width="8.2" height="8.8"/>
<rect x="11.35" y="42.65" width="8.2" height="8.8"/>
<rect x="22.25" y="42.65" width="8.2" height="8.8"/>
<rect x="33.15" y="42.65" width="8.2" height="8.8"/>
<rect x="0.45" y="53.72" width="8.2" height="8.8"/>
<rect x="11.35" y="53.72" width="8.2" height="8.8"/>
<rect x="22.25" y="53.72" width="8.2" height="8.8"/>
<rect x="33.15" y="53.72" width="8.2" height="8.8"/>
<rect x="0.45" y="64.79" width="8.2" height="8.8"/>
<rect x="11.35" y="64.79" width="8.2" height="8.8"/>
<rect x="22.25" y="64.79" width="8.2" height="8.8"/>
<rect x="33.15" y="64.79" width="8.2" height="8.8"/>
<rect x="0.45" y="75.86" width="8.2" height="8.8"/>
<rect x="11.35" y="75.86" width="8.2" height="8.8"/>
<rect x="22.25" y="75.86" width="8.2" height="8.8"/>
<rect x="33.15" y="75.86" width="8.2" height="8.8"/>
<rect x="0.45" y="86.93" width="8.2" height="8.8"/>
<rect x="11.35" y="86.93" width="8.2" height="8.8"/>
<rect x="22.25" y="86.93" width="8.2" height="8.8"/>
<rect x="33.15" y="86.93" width="8.2" height="8.8"/>
<rect x="0.45" y="98" width="8.2" height="8.8"/>
<rect x="11.35" y="98" width="8.2" height="8.8"/>
<rect x="22.25" y="98" width="8.2" height="8.8"/>
<rect x="33.15" y="98" width="8.2" height="8.8"/>
<rect x="0.45" y="109.07" width="8.2" height="8.8"/>
<rect x="11.35" y="109.07" width="8.2" height="8.8"/>
<rect x="22.25" y="109.07" width="8.2" height="8.8"/>
<rect x="33.15" y="109.07" width="8.2" height="8.8"/>
<rect x="0.45" y="120.14" width="8.2" height="8.8"/>
<rect x="11.35" y="120.14" width="8.2" height="8.8"/>
<rect x="22.25" y="120.14" width="8.2" height="8.8"/>
<rect x="33.15" y="120.14" width="8.2" height="8.8"/>
</g>
</g>
<rect x="371.8" y="358.8" width="104.8" height="9.4" fill="#74b2de" stroke="#000" stroke-width="1"/>
<rect x="371.8" y="371" width="24.5" height="9.1" fill="#2955a6" stroke="#000" stroke-width="1"/>
<rect x="398.57" y="371" width="24.5" height="9.1" fill="#2955a6" stroke="#000" stroke-width="1"/>
<rect x="425.33" y="371" width="24.5" height="9.1" fill="#2955a6" stroke="#000" stroke-width="1"/>
<rect x="452.1" y="371" width="24.5" height="9.1" fill="#2955a6" stroke="#000" stroke-width="1"/>
<rect x="371.8" y="520.9" width="104.8" height="8.5" fill="#74b2de" stroke="#000" stroke-width="1"/>
<rect x="371.8" y="532.7" width="24.5" height="8.8" fill="#2955a6" stroke="#000" stroke-width="1"/>
<rect x="398.57" y="532.7" width="24.5" height="8.8" fill="#2955a6" stroke="#000" stroke-width="1"/>
<rect x="425.33" y="532.7" width="24.5" height="8.8" fill="#2955a6" stroke="#000" stroke-width="1"/>
<rect x="452.1" y="532.7" width="24.5" height="8.8" fill="#2955a6" stroke="#000" stroke-width="1"/>
<rect x="371.8" y="544.5" width="104.8" height="8.9" fill="#74b2de" stroke="#000" stroke-width="1"/>
<polygon fill="#dcdcdc" points="548.6,143.4 558.2,148.66 551.9,148.66 551.9,154.6 545.3,154.6 545.3,148.66 539,148.66"/>
<polygon fill="#dcdcdc" points="561.2,143.6 567.8,143.6 567.8,149.34 573.9,149.34 564.5,155 555.2,149.34 561.2,149.34"/>
<rect x="494.8" y="154.6" width="126.1" height="410.3" fill="#404040" stroke="#8a8a8a" stroke-width="1"/>
<text x="499.8" y="167.7" font-size="11.7" fill="#fff" stroke="#fff" stroke-width="0.25">TPC</text>
<rect x="497.95" y="172.55" width="119.7" height="14.8" fill="#f1f96b" stroke="#000" stroke-width="1.1"/>
<text x="557.3" y="182.7" font-size="10.6" fill="#111" text-anchor="middle" stroke="#111" stroke-width="0.25">PolyMorph Engine</text>
<rect x="497.8" y="192.5" width="120.1" height="369.2" fill="#404040" stroke="#8a8a8a" stroke-width="1"/>
<text x="502.7" y="205.1" font-size="11.6" fill="#fff" stroke="#fff" stroke-width="0.25">SM</text>
<rect x="504.9" y="210.9" width="104.8" height="8.4" fill="#74b2de" stroke="#000" stroke-width="1"/>
<rect x="505.6" y="222.3" width="50.3" height="134.1" fill="#404040" stroke="#8a8a8a" stroke-width="1"/>
<rect x="559" y="222.3" width="50.8" height="134.1" fill="#404040" stroke="#8a8a8a" stroke-width="1"/>
<g transform="translate(510.5,221.8)">
<rect x="0.5" y="5.9" width="40.8" height="7.5" fill="#74b2de" stroke="#000" stroke-width="1"/>
<rect x="0.5" y="16" width="40.8" height="6.4" fill="#f5963f" stroke="#000" stroke-width="1"/>
<rect x="0.5" y="24.7" width="18.7" height="3.9" fill="#a5500f" stroke="#000" stroke-width="1"/>
<rect x="22.6" y="24.7" width="18.7" height="3.9" fill="#a5500f" stroke="#000" stroke-width="1"/>
<rect x="0.5" y="31.9" width="40.8" height="7.7" fill="#235a68" stroke="#000" stroke-width="1"/>
<g fill="#33c733" stroke="#000" stroke-width="0.9">
<rect x="0.45" y="42.65" width="8.2" height="8.8"/>
<rect x="11.35" y="42.65" width="8.2" height="8.8"/>
<rect x="22.25" y="42.65" width="8.2" height="8.8"/>
<rect x="33.15" y="42.65" width="8.2" height="8.8"/>
<rect x="0.45" y="53.72" width="8.2" height="8.8"/>
<rect x="11.35" y="53.72" width="8.2" height="8.8"/>
<rect x="22.25" y="53.72" width="8.2" height="8.8"/>
<rect x="33.15" y="53.72" width="8.2" height="8.8"/>
<rect x="0.45" y="64.79" width="8.2" height="8.8"/>
<rect x="11.35" y="64.79" width="8.2" height="8.8"/>
<rect x="22.25" y="64.79" width="8.2" height="8.8"/>
<rect x="33.15" y="64.79" width="8.2" height="8.8"/>
<rect x="0.45" y="75.86" width="8.2" height="8.8"/>
<rect x="11.35" y="75.86" width="8.2" height="8.8"/>
<rect x="22.25" y="75.86" width="8.2" height="8.8"/>
<rect x="33.15" y="75.86" width="8.2" height="8.8"/>
<rect x="0.45" y="86.93" width="8.2" height="8.8"/>
<rect x="11.35" y="86.93" width="8.2" height="8.8"/>
<rect x="22.25" y="86.93" width="8.2" height="8.8"/>
<rect x="33.15" y="86.93" width="8.2" height="8.8"/>
<rect x="0.45" y="98" width="8.2" height="8.8"/>
<rect x="11.35" y="98" width="8.2" height="8.8"/>
<rect x="22.25" y="98" width="8.2" height="8.8"/>
<rect x="33.15" y="98" width="8.2" height="8.8"/>
<rect x="0.45" y="109.07" width="8.2" height="8.8"/>
<rect x="11.35" y="109.07" width="8.2" height="8.8"/>
<rect x="22.25" y="109.07" width="8.2" height="8.8"/>
<rect x="33.15" y="109.07" width="8.2" height="8.8"/>
<rect x="0.45" y="120.14" width="8.2" height="8.8"/>
<rect x="11.35" y="120.14" width="8.2" height="8.8"/>
<rect x="22.25" y="120.14" width="8.2" height="8.8"/>
<rect x="33.15" y="120.14" width="8.2" height="8.8"/>
</g>
</g>
<g transform="translate(564.6,221.8)">
<rect x="0.5" y="5.9" width="40.8" height="7.5" fill="#74b2de" stroke="#000" stroke-width="1"/>
<rect x="0.5" y="16" width="40.8" height="6.4" fill="#f5963f" stroke="#000" stroke-width="1"/>
<rect x="0.5" y="24.7" width="18.7" height="3.9" fill="#a5500f" stroke="#000" stroke-width="1"/>
<rect x="22.6" y="24.7" width="18.7" height="3.9" fill="#a5500f" stroke="#000" stroke-width="1"/>
<rect x="0.5" y="31.9" width="40.8" height="7.7" fill="#235a68" stroke="#000" stroke-width="1"/>
<g fill="#33c733" stroke="#000" stroke-width="0.9">
<rect x="0.45" y="42.65" width="8.2" height="8.8"/>
<rect x="11.35" y="42.65" width="8.2" height="8.8"/>
<rect x="22.25" y="42.65" width="8.2" height="8.8"/>
<rect x="33.15" y="42.65" width="8.2" height="8.8"/>
<rect x="0.45" y="53.72" width="8.2" height="8.8"/>
<rect x="11.35" y="53.72" width="8.2" height="8.8"/>
<rect x="22.25" y="53.72" width="8.2" height="8.8"/>
<rect x="33.15" y="53.72" width="8.2" height="8.8"/>
<rect x="0.45" y="64.79" width="8.2" height="8.8"/>
<rect x="11.35" y="64.79" width="8.2" height="8.8"/>
<rect x="22.25" y="64.79" width="8.2" height="8.8"/>
<rect x="33.15" y="64.79" width="8.2" height="8.8"/>
<rect x="0.45" y="75.86" width="8.2" height="8.8"/>
<rect x="11.35" y="75.86" width="8.2" height="8.8"/>
<rect x="22.25" y="75.86" width="8.2" height="8.8"/>
<rect x="33.15" y="75.86" width="8.2" height="8.8"/>
<rect x="0.45" y="86.93" width="8.2" height="8.8"/>
<rect x="11.35" y="86.93" width="8.2" height="8.8"/>
<rect x="22.25" y="86.93" width="8.2" height="8.8"/>
<rect x="33.15" y="86.93" width="8.2" height="8.8"/>
<rect x="0.45" y="98" width="8.2" height="8.8"/>
<rect x="11.35" y="98" width="8.2" height="8.8"/>
<rect x="22.25" y="98" width="8.2" height="8.8"/>
<rect x="33.15" y="98" width="8.2" height="8.8"/>
<rect x="0.45" y="109.07" width="8.2" height="8.8"/>
<rect x="11.35" y="109.07" width="8.2" height="8.8"/>
<rect x="22.25" y="109.07" width="8.2" height="8.8"/>
<rect x="33.15" y="109.07" width="8.2" height="8.8"/>
<rect x="0.45" y="120.14" width="8.2" height="8.8"/>
<rect x="11.35" y="120.14" width="8.2" height="8.8"/>
<rect x="22.25" y="120.14" width="8.2" height="8.8"/>
<rect x="33.15" y="120.14" width="8.2" height="8.8"/>
</g>
</g>
<rect x="505.6" y="384.6" width="50.3" height="134.1" fill="#404040" stroke="#8a8a8a" stroke-width="1"/>
<rect x="559" y="384.6" width="50.8" height="134.1" fill="#404040" stroke="#8a8a8a" stroke-width="1"/>
<g transform="translate(510.5,384.1)">
<rect x="0.5" y="5.9" width="40.8" height="7.5" fill="#74b2de" stroke="#000" stroke-width="1"/>
<rect x="0.5" y="16" width="40.8" height="6.4" fill="#f5963f" stroke="#000" stroke-width="1"/>
<rect x="0.5" y="24.7" width="18.7" height="3.9" fill="#a5500f" stroke="#000" stroke-width="1"/>
<rect x="22.6" y="24.7" width="18.7" height="3.9" fill="#a5500f" stroke="#000" stroke-width="1"/>
<rect x="0.5" y="31.9" width="40.8" height="7.7" fill="#235a68" stroke="#000" stroke-width="1"/>
<g fill="#33c733" stroke="#000" stroke-width="0.9">
<rect x="0.45" y="42.65" width="8.2" height="8.8"/>
<rect x="11.35" y="42.65" width="8.2" height="8.8"/>
<rect x="22.25" y="42.65" width="8.2" height="8.8"/>
<rect x="33.15" y="42.65" width="8.2" height="8.8"/>
<rect x="0.45" y="53.72" width="8.2" height="8.8"/>
<rect x="11.35" y="53.72" width="8.2" height="8.8"/>
<rect x="22.25" y="53.72" width="8.2" height="8.8"/>
<rect x="33.15" y="53.72" width="8.2" height="8.8"/>
<rect x="0.45" y="64.79" width="8.2" height="8.8"/>
<rect x="11.35" y="64.79" width="8.2" height="8.8"/>
<rect x="22.25" y="64.79" width="8.2" height="8.8"/>
<rect x="33.15" y="64.79" width="8.2" height="8.8"/>
<rect x="0.45" y="75.86" width="8.2" height="8.8"/>
<rect x="11.35" y="75.86" width="8.2" height="8.8"/>
<rect x="22.25" y="75.86" width="8.2" height="8.8"/>
<rect x="33.15" y="75.86" width="8.2" height="8.8"/>
<rect x="0.45" y="86.93" width="8.2" height="8.8"/>
<rect x="11.35" y="86.93" width="8.2" height="8.8"/>
<rect x="22.25" y="86.93" width="8.2" height="8.8"/>
<rect x="33.15" y="86.93" width="8.2" height="8.8"/>
<rect x="0.45" y="98" width="8.2" height="8.8"/>
<rect x="11.35" y="98" width="8.2" height="8.8"/>
<rect x="22.25" y="98" width="8.2" height="8.8"/>
<rect x="33.15" y="98" width="8.2" height="8.8"/>
<rect x="0.45" y="109.07" width="8.2" height="8.8"/>
<rect x="11.35" y="109.07" width="8.2" height="8.8"/>
<rect x="22.25" y="109.07" width="8.2" height="8.8"/>
<rect x="33.15" y="109.07" width="8.2" height="8.8"/>
<rect x="0.45" y="120.14" width="8.2" height="8.8"/>
<rect x="11.35" y="120.14" width="8.2" height="8.8"/>
<rect x="22.25" y="120.14" width="8.2" height="8.8"/>
<rect x="33.15" y="120.14" width="8.2" height="8.8"/>
</g>
</g>
<g transform="translate(564.6,384.1)">
<rect x="0.5" y="5.9" width="40.8" height="7.5" fill="#74b2de" stroke="#000" stroke-width="1"/>
<rect x="0.5" y="16" width="40.8" height="6.4" fill="#f5963f" stroke="#000" stroke-width="1"/>
<rect x="0.5" y="24.7" width="18.7" height="3.9" fill="#a5500f" stroke="#000" stroke-width="1"/>
<rect x="22.6" y="24.7" width="18.7" height="3.9" fill="#a5500f" stroke="#000" stroke-width="1"/>
<rect x="0.5" y="31.9" width="40.8" height="7.7" fill="#235a68" stroke="#000" stroke-width="1"/>
<g fill="#33c733" stroke="#000" stroke-width="0.9">
<rect x="0.45" y="42.65" width="8.2" height="8.8"/>
<rect x="11.35" y="42.65" width="8.2" height="8.8"/>
<rect x="22.25" y="42.65" width="8.2" height="8.8"/>
<rect x="33.15" y="42.65" width="8.2" height="8.8"/>
<rect x="0.45" y="53.72" width="8.2" height="8.8"/>
<rect x="11.35" y="53.72" width="8.2" height="8.8"/>
<rect x="22.25" y="53.72" width="8.2" height="8.8"/>
<rect x="33.15" y="53.72" width="8.2" height="8.8"/>
<rect x="0.45" y="64.79" width="8.2" height="8.8"/>
<rect x="11.35" y="64.79" width="8.2" height="8.8"/>
<rect x="22.25" y="64.79" width="8.2" height="8.8"/>
<rect x="33.15" y="64.79" width="8.2" height="8.8"/>
<rect x="0.45" y="75.86" width="8.2" height="8.8"/>
<rect x="11.35" y="75.86" width="8.2" height="8.8"/>
<rect x="22.25" y="75.86" width="8.2" height="8.8"/>
<rect x="33.15" y="75.86" width="8.2" height="8.8"/>
<rect x="0.45" y="86.93" width="8.2" height="8.8"/>
<rect x="11.35" y="86.93" width="8.2" height="8.8"/>
<rect x="22.25" y="86.93" width="8.2" height="8.8"/>
<rect x="33.15" y="86.93" width="8.2" height="8.8"/>
<rect x="0.45" y="98" width="8.2" height="8.8"/>
<rect x="11.35" y="98" width="8.2" height="8.8"/>
<rect x="22.25" y="98" width="8.2" height="8.8"/>
<rect x="33.15" y="98" width="8.2" height="8.8"/>
<rect x="0.45" y="109.07" width="8.2" height="8.8"/>
<rect x="11.35" y="109.07" width="8.2" height="8.8"/>
<rect x="22.25" y="109.07" width="8.2" height="8.8"/>
<rect x="33.15" y="109.07" width="8.2" height="8.8"/>
<rect x="0.45" y="120.14" width="8.2" height="8.8"/>
<rect x="11.35" y="120.14" width="8.2" height="8.8"/>
<rect x="22.25" y="120.14" width="8.2" height="8.8"/>
<rect x="33.15" y="120.14" width="8.2" height="8.8"/>
</g>
</g>
<rect x="504.9" y="358.8" width="104.8" height="9.4" fill="#74b2de" stroke="#000" stroke-width="1"/>
<rect x="504.9" y="371" width="24.5" height="9.1" fill="#2955a6" stroke="#000" stroke-width="1"/>
<rect x="531.67" y="371" width="24.5" height="9.1" fill="#2955a6" stroke="#000" stroke-width="1"/>
<rect x="558.43" y="371" width="24.5" height="9.1" fill="#2955a6" stroke="#000" stroke-width="1"/>
<rect x="585.2" y="371" width="24.5" height="9.1" fill="#2955a6" stroke="#000" stroke-width="1"/>
<rect x="504.9" y="520.9" width="104.8" height="8.5" fill="#74b2de" stroke="#000" stroke-width="1"/>
<rect x="504.9" y="532.7" width="24.5" height="8.8" fill="#2955a6" stroke="#000" stroke-width="1"/>
<rect x="531.67" y="532.7" width="24.5" height="8.8" fill="#2955a6" stroke="#000" stroke-width="1"/>
<rect x="558.43" y="532.7" width="24.5" height="8.8" fill="#2955a6" stroke="#000" stroke-width="1"/>
<rect x="585.2" y="532.7" width="24.5" height="8.8" fill="#2955a6" stroke="#000" stroke-width="1"/>
<rect x="504.9" y="544.5" width="104.8" height="8.9" fill="#74b2de" stroke="#000" stroke-width="1"/>
<polygon fill="#dcdcdc" points="681.5,143.4 691.1,148.66 684.8,148.66 684.8,154.6 678.2,154.6 678.2,148.66 671.9,148.66"/>
<polygon fill="#dcdcdc" points="694.1,143.6 700.7,143.6 700.7,149.34 706.8,149.34 697.4,155 688.1,149.34 694.1,149.34"/>
<rect x="627.7" y="154.6" width="126.1" height="410.3" fill="#404040" stroke="#8a8a8a" stroke-width="1"/>
<text x="632.7" y="167.7" font-size="11.7" fill="#fff" stroke="#fff" stroke-width="0.25">TPC</text>
<rect x="630.85" y="172.55" width="119.7" height="14.8" fill="#f1f96b" stroke="#000" stroke-width="1.1"/>
<text x="690.2" y="182.7" font-size="10.6" fill="#111" text-anchor="middle" stroke="#111" stroke-width="0.25">PolyMorph Engine</text>
<rect x="630.7" y="192.5" width="120.1" height="369.2" fill="#404040" stroke="#8a8a8a" stroke-width="1"/>
<text x="635.6" y="205.1" font-size="11.6" fill="#fff" stroke="#fff" stroke-width="0.25">SM</text>
<rect x="637.8" y="210.9" width="104.8" height="8.4" fill="#74b2de" stroke="#000" stroke-width="1"/>
<rect x="638.5" y="222.3" width="50.3" height="134.1" fill="#404040" stroke="#8a8a8a" stroke-width="1"/>
<rect x="691.9" y="222.3" width="50.8" height="134.1" fill="#404040" stroke="#8a8a8a" stroke-width="1"/>
<g transform="translate(643.4,221.8)">
<rect x="0.5" y="5.9" width="40.8" height="7.5" fill="#74b2de" stroke="#000" stroke-width="1"/>
<rect x="0.5" y="16" width="40.8" height="6.4" fill="#f5963f" stroke="#000" stroke-width="1"/>
<rect x="0.5" y="24.7" width="18.7" height="3.9" fill="#a5500f" stroke="#000" stroke-width="1"/>
<rect x="22.6" y="24.7" width="18.7" height="3.9" fill="#a5500f" stroke="#000" stroke-width="1"/>
<rect x="0.5" y="31.9" width="40.8" height="7.7" fill="#235a68" stroke="#000" stroke-width="1"/>
<g fill="#33c733" stroke="#000" stroke-width="0.9">
<rect x="0.45" y="42.65" width="8.2" height="8.8"/>
<rect x="11.35" y="42.65" width="8.2" height="8.8"/>
<rect x="22.25" y="42.65" width="8.2" height="8.8"/>
<rect x="33.15" y="42.65" width="8.2" height="8.8"/>
<rect x="0.45" y="53.72" width="8.2" height="8.8"/>
<rect x="11.35" y="53.72" width="8.2" height="8.8"/>
<rect x="22.25" y="53.72" width="8.2" height="8.8"/>
<rect x="33.15" y="53.72" width="8.2" height="8.8"/>
<rect x="0.45" y="64.79" width="8.2" height="8.8"/>
<rect x="11.35" y="64.79" width="8.2" height="8.8"/>
<rect x="22.25" y="64.79" width="8.2" height="8.8"/>
<rect x="33.15" y="64.79" width="8.2" height="8.8"/>
<rect x="0.45" y="75.86" width="8.2" height="8.8"/>
<rect x="11.35" y="75.86" width="8.2" height="8.8"/>
<rect x="22.25" y="75.86" width="8.2" height="8.8"/>
<rect x="33.15" y="75.86" width="8.2" height="8.8"/>
<rect x="0.45" y="86.93" width="8.2" height="8.8"/>
<rect x="11.35" y="86.93" width="8.2" height="8.8"/>
<rect x="22.25" y="86.93" width="8.2" height="8.8"/>
<rect x="33.15" y="86.93" width="8.2" height="8.8"/>
<rect x="0.45" y="98" width="8.2" height="8.8"/>
<rect x="11.35" y="98" width="8.2" height="8.8"/>
<rect x="22.25" y="98" width="8.2" height="8.8"/>
<rect x="33.15" y="98" width="8.2" height="8.8"/>
<rect x="0.45" y="109.07" width="8.2" height="8.8"/>
<rect x="11.35" y="109.07" width="8.2" height="8.8"/>
<rect x="22.25" y="109.07" width="8.2" height="8.8"/>
<rect x="33.15" y="109.07" width="8.2" height="8.8"/>
<rect x="0.45" y="120.14" width="8.2" height="8.8"/>
<rect x="11.35" y="120.14" width="8.2" height="8.8"/>
<rect x="22.25" y="120.14" width="8.2" height="8.8"/>
<rect x="33.15" y="120.14" width="8.2" height="8.8"/>
</g>
</g>
<g transform="translate(697.5,221.8)">
<rect x="0.5" y="5.9" width="40.8" height="7.5" fill="#74b2de" stroke="#000" stroke-width="1"/>
<rect x="0.5" y="16" width="40.8" height="6.4" fill="#f5963f" stroke="#000" stroke-width="1"/>
<rect x="0.5" y="24.7" width="18.7" height="3.9" fill="#a5500f" stroke="#000" stroke-width="1"/>
<rect x="22.6" y="24.7" width="18.7" height="3.9" fill="#a5500f" stroke="#000" stroke-width="1"/>
<rect x="0.5" y="31.9" width="40.8" height="7.7" fill="#235a68" stroke="#000" stroke-width="1"/>
<g fill="#33c733" stroke="#000" stroke-width="0.9">
<rect x="0.45" y="42.65" width="8.2" height="8.8"/>
<rect x="11.35" y="42.65" width="8.2" height="8.8"/>
<rect x="22.25" y="42.65" width="8.2" height="8.8"/>
<rect x="33.15" y="42.65" width="8.2" height="8.8"/>
<rect x="0.45" y="53.72" width="8.2" height="8.8"/>
<rect x="11.35" y="53.72" width="8.2" height="8.8"/>
<rect x="22.25" y="53.72" width="8.2" height="8.8"/>
<rect x="33.15" y="53.72" width="8.2" height="8.8"/>
<rect x="0.45" y="64.79" width="8.2" height="8.8"/>
<rect x="11.35" y="64.79" width="8.2" height="8.8"/>
<rect x="22.25" y="64.79" width="8.2" height="8.8"/>
<rect x="33.15" y="64.79" width="8.2" height="8.8"/>
<rect x="0.45" y="75.86" width="8.2" height="8.8"/>
<rect x="11.35" y="75.86" width="8.2" height="8.8"/>
<rect x="22.25" y="75.86" width="8.2" height="8.8"/>
<rect x="33.15" y="75.86" width="8.2" height="8.8"/>
<rect x="0.45" y="86.93" width="8.2" height="8.8"/>
<rect x="11.35" y="86.93" width="8.2" height="8.8"/>
<rect x="22.25" y="86.93" width="8.2" height="8.8"/>
<rect x="33.15" y="86.93" width="8.2" height="8.8"/>
<rect x="0.45" y="98" width="8.2" height="8.8"/>
<rect x="11.35" y="98" width="8.2" height="8.8"/>
<rect x="22.25" y="98" width="8.2" height="8.8"/>
<rect x="33.15" y="98" width="8.2" height="8.8"/>
<rect x="0.45" y="109.07" width="8.2" height="8.8"/>
<rect x="11.35" y="109.07" width="8.2" height="8.8"/>
<rect x="22.25" y="109.07" width="8.2" height="8.8"/>
<rect x="33.15" y="109.07" width="8.2" height="8.8"/>
<rect x="0.45" y="120.14" width="8.2" height="8.8"/>
<rect x="11.35" y="120.14" width="8.2" height="8.8"/>
<rect x="22.25" y="120.14" width="8.2" height="8.8"/>
<rect x="33.15" y="120.14" width="8.2" height="8.8"/>
</g>
</g>
<rect x="638.5" y="384.6" width="50.3" height="134.1" fill="#404040" stroke="#8a8a8a" stroke-width="1"/>
<rect x="691.9" y="384.6" width="50.8" height="134.1" fill="#404040" stroke="#8a8a8a" stroke-width="1"/>
<g transform="translate(643.4,384.1)">
<rect x="0.5" y="5.9" width="40.8" height="7.5" fill="#74b2de" stroke="#000" stroke-width="1"/>
<rect x="0.5" y="16" width="40.8" height="6.4" fill="#f5963f" stroke="#000" stroke-width="1"/>
<rect x="0.5" y="24.7" width="18.7" height="3.9" fill="#a5500f" stroke="#000" stroke-width="1"/>
<rect x="22.6" y="24.7" width="18.7" height="3.9" fill="#a5500f" stroke="#000" stroke-width="1"/>
<rect x="0.5" y="31.9" width="40.8" height="7.7" fill="#235a68" stroke="#000" stroke-width="1"/>
<g fill="#33c733" stroke="#000" stroke-width="0.9">
<rect x="0.45" y="42.65" width="8.2" height="8.8"/>
<rect x="11.35" y="42.65" width="8.2" height="8.8"/>
<rect x="22.25" y="42.65" width="8.2" height="8.8"/>
<rect x="33.15" y="42.65" width="8.2" height="8.8"/>
<rect x="0.45" y="53.72" width="8.2" height="8.8"/>
<rect x="11.35" y="53.72" width="8.2" height="8.8"/>
<rect x="22.25" y="53.72" width="8.2" height="8.8"/>
<rect x="33.15" y="53.72" width="8.2" height="8.8"/>
<rect x="0.45" y="64.79" width="8.2" height="8.8"/>
<rect x="11.35" y="64.79" width="8.2" height="8.8"/>
<rect x="22.25" y="64.79" width="8.2" height="8.8"/>
<rect x="33.15" y="64.79" width="8.2" height="8.8"/>
<rect x="0.45" y="75.86" width="8.2" height="8.8"/>
<rect x="11.35" y="75.86" width="8.2" height="8.8"/>
<rect x="22.25" y="75.86" width="8.2" height="8.8"/>
<rect x="33.15" y="75.86" width="8.2" height="8.8"/>
<rect x="0.45" y="86.93" width="8.2" height="8.8"/>
<rect x="11.35" y="86.93" width="8.2" height="8.8"/>
<rect x="22.25" y="86.93" width="8.2" height="8.8"/>
<rect x="33.15" y="86.93" width="8.2" height="8.8"/>
<rect x="0.45" y="98" width="8.2" height="8.8"/>
<rect x="11.35" y="98" width="8.2" height="8.8"/>
<rect x="22.25" y="98" width="8.2" height="8.8"/>
<rect x="33.15" y="98" width="8.2" height="8.8"/>
<rect x="0.45" y="109.07" width="8.2" height="8.8"/>
<rect x="11.35" y="109.07" width="8.2" height="8.8"/>
<rect x="22.25" y="109.07" width="8.2" height="8.8"/>
<rect x="33.15" y="109.07" width="8.2" height="8.8"/>
<rect x="0.45" y="120.14" width="8.2" height="8.8"/>
<rect x="11.35" y="120.14" width="8.2" height="8.8"/>
<rect x="22.25" y="120.14" width="8.2" height="8.8"/>
<rect x="33.15" y="120.14" width="8.2" height="8.8"/>
</g>
</g>
<g transform="translate(697.5,384.1)">
<rect x="0.5" y="5.9" width="40.8" height="7.5" fill="#74b2de" stroke="#000" stroke-width="1"/>
<rect x="0.5" y="16" width="40.8" height="6.4" fill="#f5963f" stroke="#000" stroke-width="1"/>
<rect x="0.5" y="24.7" width="18.7" height="3.9" fill="#a5500f" stroke="#000" stroke-width="1"/>
<rect x="22.6" y="24.7" width="18.7" height="3.9" fill="#a5500f" stroke="#000" stroke-width="1"/>
<rect x="0.5" y="31.9" width="40.8" height="7.7" fill="#235a68" stroke="#000" stroke-width="1"/>
<g fill="#33c733" stroke="#000" stroke-width="0.9">
<rect x="0.45" y="42.65" width="8.2" height="8.8"/>
<rect x="11.35" y="42.65" width="8.2" height="8.8"/>
<rect x="22.25" y="42.65" width="8.2" height="8.8"/>
<rect x="33.15" y="42.65" width="8.2" height="8.8"/>
<rect x="0.45" y="53.72" width="8.2" height="8.8"/>
<rect x="11.35" y="53.72" width="8.2" height="8.8"/>
<rect x="22.25" y="53.72" width="8.2" height="8.8"/>
<rect x="33.15" y="53.72" width="8.2" height="8.8"/>
<rect x="0.45" y="64.79" width="8.2" height="8.8"/>
<rect x="11.35" y="64.79" width="8.2" height="8.8"/>
<rect x="22.25" y="64.79" width="8.2" height="8.8"/>
<rect x="33.15" y="64.79" width="8.2" height="8.8"/>
<rect x="0.45" y="75.86" width="8.2" height="8.8"/>
<rect x="11.35" y="75.86" width="8.2" height="8.8"/>
<rect x="22.25" y="75.86" width="8.2" height="8.8"/>
<rect x="33.15" y="75.86" width="8.2" height="8.8"/>
<rect x="0.45" y="86.93" width="8.2" height="8.8"/>
<rect x="11.35" y="86.93" width="8.2" height="8.8"/>
<rect x="22.25" y="86.93" width="8.2" height="8.8"/>
<rect x="33.15" y="86.93" width="8.2" height="8.8"/>
<rect x="0.45" y="98" width="8.2" height="8.8"/>
<rect x="11.35" y="98" width="8.2" height="8.8"/>
<rect x="22.25" y="98" width="8.2" height="8.8"/>
<rect x="33.15" y="98" width="8.2" height="8.8"/>
<rect x="0.45" y="109.07" width="8.2" height="8.8"/>
<rect x="11.35" y="109.07" width="8.2" height="8.8"/>
<rect x="22.25" y="109.07" width="8.2" height="8.8"/>
<rect x="33.15" y="109.07" width="8.2" height="8.8"/>
<rect x="0.45" y="120.14" width="8.2" height="8.8"/>
<rect x="11.35" y="120.14" width="8.2" height="8.8"/>
<rect x="22.25" y="120.14" width="8.2" height="8.8"/>
<rect x="33.15" y="120.14" width="8.2" height="8.8"/>
</g>
</g>
<rect x="637.8" y="358.8" width="104.8" height="9.4" fill="#74b2de" stroke="#000" stroke-width="1"/>
<rect x="637.8" y="371" width="24.5" height="9.1" fill="#2955a6" stroke="#000" stroke-width="1"/>
<rect x="664.57" y="371" width="24.5" height="9.1" fill="#2955a6" stroke="#000" stroke-width="1"/>
<rect x="691.33" y="371" width="24.5" height="9.1" fill="#2955a6" stroke="#000" stroke-width="1"/>
<rect x="718.1" y="371" width="24.5" height="9.1" fill="#2955a6" stroke="#000" stroke-width="1"/>
<rect x="637.8" y="520.9" width="104.8" height="8.5" fill="#74b2de" stroke="#000" stroke-width="1"/>
<rect x="637.8" y="532.7" width="24.5" height="8.8" fill="#2955a6" stroke="#000" stroke-width="1"/>
<rect x="664.57" y="532.7" width="24.5" height="8.8" fill="#2955a6" stroke="#000" stroke-width="1"/>
<rect x="691.33" y="532.7" width="24.5" height="8.8" fill="#2955a6" stroke="#000" stroke-width="1"/>
<rect x="718.1" y="532.7" width="24.5" height="8.8" fill="#2955a6" stroke="#000" stroke-width="1"/>
<rect x="637.8" y="544.5" width="104.8" height="8.9" fill="#74b2de" stroke="#000" stroke-width="1"/>
<rect x="769.55" y="96.85" width="671" height="480.9" fill="#404040" stroke="#dfdfdf" stroke-width="3.1"/>
<text x="777.3" y="112.6" font-size="15.3" fill="#fff" font-weight="normal" stroke="#fff" stroke-width="0.6">GPC</text>
<rect x="776.3" y="121" width="656.4" height="21.6" fill="#f1f96b"/>
<text x="1103.9" y="135.8" font-size="15.9" fill="#111" text-anchor="middle" stroke="#111" stroke-width="0.4">Raster Engine</text>
<polygon fill="#dcdcdc" points="830.6,143.4 840.2,148.66 833.9,148.66 833.9,154.6 827.3,154.6 827.3,148.66 821,148.66"/>
<polygon fill="#dcdcdc" points="843.2,143.6 849.8,143.6 849.8,149.34 855.9,149.34 846.5,155 837.2,149.34 843.2,149.34"/>
<rect x="776.8" y="154.6" width="126.1" height="410.3" fill="#404040" stroke="#8a8a8a" stroke-width="1"/>
<text x="781.8" y="167.7" font-size="11.7" fill="#fff" stroke="#fff" stroke-width="0.25">TPC</text>
<rect x="779.95" y="172.55" width="119.7" height="14.8" fill="#f1f96b" stroke="#000" stroke-width="1.1"/>
<text x="839.3" y="182.7" font-size="10.6" fill="#111" text-anchor="middle" stroke="#111" stroke-width="0.25">PolyMorph Engine</text>
<rect x="779.8" y="192.5" width="120.1" height="369.2" fill="#404040" stroke="#8a8a8a" stroke-width="1"/>
<text x="784.7" y="205.1" font-size="11.6" fill="#fff" stroke="#fff" stroke-width="0.25">SM</text>
<rect x="786.9" y="210.9" width="104.8" height="8.4" fill="#74b2de" stroke="#000" stroke-width="1"/>
<rect x="787.6" y="222.3" width="50.3" height="134.1" fill="#404040" stroke="#8a8a8a" stroke-width="1"/>
<rect x="841" y="222.3" width="50.8" height="134.1" fill="#404040" stroke="#8a8a8a" stroke-width="1"/>
<g transform="translate(792.5,221.8)">
<rect x="0.5" y="5.9" width="40.8" height="7.5" fill="#74b2de" stroke="#000" stroke-width="1"/>
<rect x="0.5" y="16" width="40.8" height="6.4" fill="#f5963f" stroke="#000" stroke-width="1"/>
<rect x="0.5" y="24.7" width="18.7" height="3.9" fill="#a5500f" stroke="#000" stroke-width="1"/>
<rect x="22.6" y="24.7" width="18.7" height="3.9" fill="#a5500f" stroke="#000" stroke-width="1"/>
<rect x="0.5" y="31.9" width="40.8" height="7.7" fill="#235a68" stroke="#000" stroke-width="1"/>
<g fill="#33c733" stroke="#000" stroke-width="0.9">
<rect x="0.45" y="42.65" width="8.2" height="8.8"/>
<rect x="11.35" y="42.65" width="8.2" height="8.8"/>
<rect x="22.25" y="42.65" width="8.2" height="8.8"/>
<rect x="33.15" y="42.65" width="8.2" height="8.8"/>
<rect x="0.45" y="53.72" width="8.2" height="8.8"/>
<rect x="11.35" y="53.72" width="8.2" height="8.8"/>
<rect x="22.25" y="53.72" width="8.2" height="8.8"/>
<rect x="33.15" y="53.72" width="8.2" height="8.8"/>
<rect x="0.45" y="64.79" width="8.2" height="8.8"/>
<rect x="11.35" y="64.79" width="8.2" height="8.8"/>
<rect x="22.25" y="64.79" width="8.2" height="8.8"/>
<rect x="33.15" y="64.79" width="8.2" height="8.8"/>
<rect x="0.45" y="75.86" width="8.2" height="8.8"/>
<rect x="11.35" y="75.86" width="8.2" height="8.8"/>
<rect x="22.25" y="75.86" width="8.2" height="8.8"/>
<rect x="33.15" y="75.86" width="8.2" height="8.8"/>
<rect x="0.45" y="86.93" width="8.2" height="8.8"/>
<rect x="11.35" y="86.93" width="8.2" height="8.8"/>
<rect x="22.25" y="86.93" width="8.2" height="8.8"/>
<rect x="33.15" y="86.93" width="8.2" height="8.8"/>
<rect x="0.45" y="98" width="8.2" height="8.8"/>
<rect x="11.35" y="98" width="8.2" height="8.8"/>
<rect x="22.25" y="98" width="8.2" height="8.8"/>
<rect x="33.15" y="98" width="8.2" height="8.8"/>
<rect x="0.45" y="109.07" width="8.2" height="8.8"/>
<rect x="11.35" y="109.07" width="8.2" height="8.8"/>
<rect x="22.25" y="109.07" width="8.2" height="8.8"/>
<rect x="33.15" y="109.07" width="8.2" height="8.8"/>
<rect x="0.45" y="120.14" width="8.2" height="8.8"/>
<rect x="11.35" y="120.14" width="8.2" height="8.8"/>
<rect x="22.25" y="120.14" width="8.2" height="8.8"/>
<rect x="33.15" y="120.14" width="8.2" height="8.8"/>
</g>
</g>
<g transform="translate(846.6,221.8)">
<rect x="0.5" y="5.9" width="40.8" height="7.5" fill="#74b2de" stroke="#000" stroke-width="1"/>
<rect x="0.5" y="16" width="40.8" height="6.4" fill="#f5963f" stroke="#000" stroke-width="1"/>
<rect x="0.5" y="24.7" width="18.7" height="3.9" fill="#a5500f" stroke="#000" stroke-width="1"/>
<rect x="22.6" y="24.7" width="18.7" height="3.9" fill="#a5500f" stroke="#000" stroke-width="1"/>
<rect x="0.5" y="31.9" width="40.8" height="7.7" fill="#235a68" stroke="#000" stroke-width="1"/>
<g fill="#33c733" stroke="#000" stroke-width="0.9">
<rect x="0.45" y="42.65" width="8.2" height="8.8"/>
<rect x="11.35" y="42.65" width="8.2" height="8.8"/>
<rect x="22.25" y="42.65" width="8.2" height="8.8"/>
<rect x="33.15" y="42.65" width="8.2" height="8.8"/>
<rect x="0.45" y="53.72" width="8.2" height="8.8"/>
<rect x="11.35" y="53.72" width="8.2" height="8.8"/>
<rect x="22.25" y="53.72" width="8.2" height="8.8"/>
<rect x="33.15" y="53.72" width="8.2" height="8.8"/>
<rect x="0.45" y="64.79" width="8.2" height="8.8"/>
<rect x="11.35" y="64.79" width="8.2" height="8.8"/>
<rect x="22.25" y="64.79" width="8.2" height="8.8"/>
<rect x="33.15" y="64.79" width="8.2" height="8.8"/>
<rect x="0.45" y="75.86" width="8.2" height="8.8"/>
<rect x="11.35" y="75.86" width="8.2" height="8.8"/>
<rect x="22.25" y="75.86" width="8.2" height="8.8"/>
<rect x="33.15" y="75.86" width="8.2" height="8.8"/>
<rect x="0.45" y="86.93" width="8.2" height="8.8"/>
<rect x="11.35" y="86.93" width="8.2" height="8.8"/>
<rect x="22.25" y="86.93" width="8.2" height="8.8"/>
<rect x="33.15" y="86.93" width="8.2" height="8.8"/>
<rect x="0.45" y="98" width="8.2" height="8.8"/>
<rect x="11.35" y="98" width="8.2" height="8.8"/>
<rect x="22.25" y="98" width="8.2" height="8.8"/>
<rect x="33.15" y="98" width="8.2" height="8.8"/>
<rect x="0.45" y="109.07" width="8.2" height="8.8"/>
<rect x="11.35" y="109.07" width="8.2" height="8.8"/>
<rect x="22.25" y="109.07" width="8.2" height="8.8"/>
<rect x="33.15" y="109.07" width="8.2" height="8.8"/>
<rect x="0.45" y="120.14" width="8.2" height="8.8"/>
<rect x="11.35" y="120.14" width="8.2" height="8.8"/>
<rect x="22.25" y="120.14" width="8.2" height="8.8"/>
<rect x="33.15" y="120.14" width="8.2" height="8.8"/>
</g>
</g>
<rect x="787.6" y="384.6" width="50.3" height="134.1" fill="#404040" stroke="#8a8a8a" stroke-width="1"/>
<rect x="841" y="384.6" width="50.8" height="134.1" fill="#404040" stroke="#8a8a8a" stroke-width="1"/>
<g transform="translate(792.5,384.1)">
<rect x="0.5" y="5.9" width="40.8" height="7.5" fill="#74b2de" stroke="#000" stroke-width="1"/>
<rect x="0.5" y="16" width="40.8" height="6.4" fill="#f5963f" stroke="#000" stroke-width="1"/>
<rect x="0.5" y="24.7" width="18.7" height="3.9" fill="#a5500f" stroke="#000" stroke-width="1"/>
<rect x="22.6" y="24.7" width="18.7" height="3.9" fill="#a5500f" stroke="#000" stroke-width="1"/>
<rect x="0.5" y="31.9" width="40.8" height="7.7" fill="#235a68" stroke="#000" stroke-width="1"/>
<g fill="#33c733" stroke="#000" stroke-width="0.9">
<rect x="0.45" y="42.65" width="8.2" height="8.8"/>
<rect x="11.35" y="42.65" width="8.2" height="8.8"/>
<rect x="22.25" y="42.65" width="8.2" height="8.8"/>
<rect x="33.15" y="42.65" width="8.2" height="8.8"/>
<rect x="0.45" y="53.72" width="8.2" height="8.8"/>
<rect x="11.35" y="53.72" width="8.2" height="8.8"/>
<rect x="22.25" y="53.72" width="8.2" height="8.8"/>
<rect x="33.15" y="53.72" width="8.2" height="8.8"/>
<rect x="0.45" y="64.79" width="8.2" height="8.8"/>
<rect x="11.35" y="64.79" width="8.2" height="8.8"/>
<rect x="22.25" y="64.79" width="8.2" height="8.8"/>
<rect x="33.15" y="64.79" width="8.2" height="8.8"/>
<rect x="0.45" y="75.86" width="8.2" height="8.8"/>
<rect x="11.35" y="75.86" width="8.2" height="8.8"/>
<rect x="22.25" y="75.86" width="8.2" height="8.8"/>
<rect x="33.15" y="75.86" width="8.2" height="8.8"/>
<rect x="0.45" y="86.93" width="8.2" height="8.8"/>
<rect x="11.35" y="86.93" width="8.2" height="8.8"/>
<rect x="22.25" y="86.93" width="8.2" height="8.8"/>
<rect x="33.15" y="86.93" width="8.2" height="8.8"/>
<rect x="0.45" y="98" width="8.2" height="8.8"/>
<rect x="11.35" y="98" width="8.2" height="8.8"/>
<rect x="22.25" y="98" width="8.2" height="8.8"/>
<rect x="33.15" y="98" width="8.2" height="8.8"/>
<rect x="0.45" y="109.07" width="8.2" height="8.8"/>
<rect x="11.35" y="109.07" width="8.2" height="8.8"/>
<rect x="22.25" y="109.07" width="8.2" height="8.8"/>
<rect x="33.15" y="109.07" width="8.2" height="8.8"/>
<rect x="0.45" y="120.14" width="8.2" height="8.8"/>
<rect x="11.35" y="120.14" width="8.2" height="8.8"/>
<rect x="22.25" y="120.14" width="8.2" height="8.8"/>
<rect x="33.15" y="120.14" width="8.2" height="8.8"/>
</g>
</g>
<g transform="translate(846.6,384.1)">
<rect x="0.5" y="5.9" width="40.8" height="7.5" fill="#74b2de" stroke="#000" stroke-width="1"/>
<rect x="0.5" y="16" width="40.8" height="6.4" fill="#f5963f" stroke="#000" stroke-width="1"/>
<rect x="0.5" y="24.7" width="18.7" height="3.9" fill="#a5500f" stroke="#000" stroke-width="1"/>
<rect x="22.6" y="24.7" width="18.7" height="3.9" fill="#a5500f" stroke="#000" stroke-width="1"/>
<rect x="0.5" y="31.9" width="40.8" height="7.7" fill="#235a68" stroke="#000" stroke-width="1"/>
<g fill="#33c733" stroke="#000" stroke-width="0.9">
<rect x="0.45" y="42.65" width="8.2" height="8.8"/>
<rect x="11.35" y="42.65" width="8.2" height="8.8"/>
<rect x="22.25" y="42.65" width="8.2" height="8.8"/>
<rect x="33.15" y="42.65" width="8.2" height="8.8"/>
<rect x="0.45" y="53.72" width="8.2" height="8.8"/>
<rect x="11.35" y="53.72" width="8.2" height="8.8"/>
<rect x="22.25" y="53.72" width="8.2" height="8.8"/>
<rect x="33.15" y="53.72" width="8.2" height="8.8"/>
<rect x="0.45" y="64.79" width="8.2" height="8.8"/>
<rect x="11.35" y="64.79" width="8.2" height="8.8"/>
<rect x="22.25" y="64.79" width="8.2" height="8.8"/>
<rect x="33.15" y="64.79" width="8.2" height="8.8"/>
<rect x="0.45" y="75.86" width="8.2" height="8.8"/>
<rect x="11.35" y="75.86" width="8.2" height="8.8"/>
<rect x="22.25" y="75.86" width="8.2" height="8.8"/>
<rect x="33.15" y="75.86" width="8.2" height="8.8"/>
<rect x="0.45" y="86.93" width="8.2" height="8.8"/>
<rect x="11.35" y="86.93" width="8.2" height="8.8"/>
<rect x="22.25" y="86.93" width="8.2" height="8.8"/>
<rect x="33.15" y="86.93" width="8.2" height="8.8"/>
<rect x="0.45" y="98" width="8.2" height="8.8"/>
<rect x="11.35" y="98" width="8.2" height="8.8"/>
<rect x="22.25" y="98" width="8.2" height="8.8"/>
<rect x="33.15" y="98" width="8.2" height="8.8"/>
<rect x="0.45" y="109.07" width="8.2" height="8.8"/>
<rect x="11.35" y="109.07" width="8.2" height="8.8"/>
<rect x="22.25" y="109.07" width="8.2" height="8.8"/>
<rect x="33.15" y="109.07" width="8.2" height="8.8"/>
<rect x="0.45" y="120.14" width="8.2" height="8.8"/>
<rect x="11.35" y="120.14" width="8.2" height="8.8"/>
<rect x="22.25" y="120.14" width="8.2" height="8.8"/>
<rect x="33.15" y="120.14" width="8.2" height="8.8"/>
</g>
</g>
<rect x="786.9" y="358.8" width="104.8" height="9.4" fill="#74b2de" stroke="#000" stroke-width="1"/>
<rect x="786.9" y="371" width="24.5" height="9.1" fill="#2955a6" stroke="#000" stroke-width="1"/>
<rect x="813.67" y="371" width="24.5" height="9.1" fill="#2955a6" stroke="#000" stroke-width="1"/>
<rect x="840.43" y="371" width="24.5" height="9.1" fill="#2955a6" stroke="#000" stroke-width="1"/>
<rect x="867.2" y="371" width="24.5" height="9.1" fill="#2955a6" stroke="#000" stroke-width="1"/>
<rect x="786.9" y="520.9" width="104.8" height="8.5" fill="#74b2de" stroke="#000" stroke-width="1"/>
<rect x="786.9" y="532.7" width="24.5" height="8.8" fill="#2955a6" stroke="#000" stroke-width="1"/>
<rect x="813.67" y="532.7" width="24.5" height="8.8" fill="#2955a6" stroke="#000" stroke-width="1"/>
<rect x="840.43" y="532.7" width="24.5" height="8.8" fill="#2955a6" stroke="#000" stroke-width="1"/>
<rect x="867.2" y="532.7" width="24.5" height="8.8" fill="#2955a6" stroke="#000" stroke-width="1"/>
<rect x="786.9" y="544.5" width="104.8" height="8.9" fill="#74b2de" stroke="#000" stroke-width="1"/>
<polygon fill="#dcdcdc" points="962.4,143.4 972,148.66 965.7,148.66 965.7,154.6 959.1,154.6 959.1,148.66 952.8,148.66"/>
<polygon fill="#dcdcdc" points="975,143.6 981.6,143.6 981.6,149.34 987.7,149.34 978.3,155 969,149.34 975,149.34"/>
<rect x="908.6" y="154.6" width="126.1" height="410.3" fill="#404040" stroke="#8a8a8a" stroke-width="1"/>
<text x="913.6" y="167.7" font-size="11.7" fill="#fff" stroke="#fff" stroke-width="0.25">TPC</text>
<rect x="911.75" y="172.55" width="119.7" height="14.8" fill="#f1f96b" stroke="#000" stroke-width="1.1"/>
<text x="971.1" y="182.7" font-size="10.6" fill="#111" text-anchor="middle" stroke="#111" stroke-width="0.25">PolyMorph Engine</text>
<rect x="911.6" y="192.5" width="120.1" height="369.2" fill="#404040" stroke="#8a8a8a" stroke-width="1"/>
<text x="916.5" y="205.1" font-size="11.6" fill="#fff" stroke="#fff" stroke-width="0.25">SM</text>
<rect x="918.7" y="210.9" width="104.8" height="8.4" fill="#74b2de" stroke="#000" stroke-width="1"/>
<rect x="919.4" y="222.3" width="50.3" height="134.1" fill="#404040" stroke="#8a8a8a" stroke-width="1"/>
<rect x="972.8" y="222.3" width="50.8" height="134.1" fill="#404040" stroke="#8a8a8a" stroke-width="1"/>
<g transform="translate(924.3,221.8)">
<rect x="0.5" y="5.9" width="40.8" height="7.5" fill="#74b2de" stroke="#000" stroke-width="1"/>
<rect x="0.5" y="16" width="40.8" height="6.4" fill="#f5963f" stroke="#000" stroke-width="1"/>
<rect x="0.5" y="24.7" width="18.7" height="3.9" fill="#a5500f" stroke="#000" stroke-width="1"/>
<rect x="22.6" y="24.7" width="18.7" height="3.9" fill="#a5500f" stroke="#000" stroke-width="1"/>
<rect x="0.5" y="31.9" width="40.8" height="7.7" fill="#235a68" stroke="#000" stroke-width="1"/>
<g fill="#33c733" stroke="#000" stroke-width="0.9">
<rect x="0.45" y="42.65" width="8.2" height="8.8"/>
<rect x="11.35" y="42.65" width="8.2" height="8.8"/>
<rect x="22.25" y="42.65" width="8.2" height="8.8"/>
<rect x="33.15" y="42.65" width="8.2" height="8.8"/>
<rect x="0.45" y="53.72" width="8.2" height="8.8"/>
<rect x="11.35" y="53.72" width="8.2" height="8.8"/>
<rect x="22.25" y="53.72" width="8.2" height="8.8"/>
<rect x="33.15" y="53.72" width="8.2" height="8.8"/>
<rect x="0.45" y="64.79" width="8.2" height="8.8"/>
<rect x="11.35" y="64.79" width="8.2" height="8.8"/>
<rect x="22.25" y="64.79" width="8.2" height="8.8"/>
<rect x="33.15" y="64.79" width="8.2" height="8.8"/>
<rect x="0.45" y="75.86" width="8.2" height="8.8"/>
<rect x="11.35" y="75.86" width="8.2" height="8.8"/>
<rect x="22.25" y="75.86" width="8.2" height="8.8"/>
<rect x="33.15" y="75.86" width="8.2" height="8.8"/>
<rect x="0.45" y="86.93" width="8.2" height="8.8"/>
<rect x="11.35" y="86.93" width="8.2" height="8.8"/>
<rect x="22.25" y="86.93" width="8.2" height="8.8"/>
<rect x="33.15" y="86.93" width="8.2" height="8.8"/>
<rect x="0.45" y="98" width="8.2" height="8.8"/>
<rect x="11.35" y="98" width="8.2" height="8.8"/>
<rect x="22.25" y="98" width="8.2" height="8.8"/>
<rect x="33.15" y="98" width="8.2" height="8.8"/>
<rect x="0.45" y="109.07" width="8.2" height="8.8"/>
<rect x="11.35" y="109.07" width="8.2" height="8.8"/>
<rect x="22.25" y="109.07" width="8.2" height="8.8"/>
<rect x="33.15" y="109.07" width="8.2" height="8.8"/>
<rect x="0.45" y="120.14" width="8.2" height="8.8"/>
<rect x="11.35" y="120.14" width="8.2" height="8.8"/>
<rect x="22.25" y="120.14" width="8.2" height="8.8"/>
<rect x="33.15" y="120.14" width="8.2" height="8.8"/>
</g>
</g>
<g transform="translate(978.4,221.8)">
<rect x="0.5" y="5.9" width="40.8" height="7.5" fill="#74b2de" stroke="#000" stroke-width="1"/>
<rect x="0.5" y="16" width="40.8" height="6.4" fill="#f5963f" stroke="#000" stroke-width="1"/>
<rect x="0.5" y="24.7" width="18.7" height="3.9" fill="#a5500f" stroke="#000" stroke-width="1"/>
<rect x="22.6" y="24.7" width="18.7" height="3.9" fill="#a5500f" stroke="#000" stroke-width="1"/>
<rect x="0.5" y="31.9" width="40.8" height="7.7" fill="#235a68" stroke="#000" stroke-width="1"/>
<g fill="#33c733" stroke="#000" stroke-width="0.9">
<rect x="0.45" y="42.65" width="8.2" height="8.8"/>
<rect x="11.35" y="42.65" width="8.2" height="8.8"/>
<rect x="22.25" y="42.65" width="8.2" height="8.8"/>
<rect x="33.15" y="42.65" width="8.2" height="8.8"/>
<rect x="0.45" y="53.72" width="8.2" height="8.8"/>
<rect x="11.35" y="53.72" width="8.2" height="8.8"/>
<rect x="22.25" y="53.72" width="8.2" height="8.8"/>
<rect x="33.15" y="53.72" width="8.2" height="8.8"/>
<rect x="0.45" y="64.79" width="8.2" height="8.8"/>
<rect x="11.35" y="64.79" width="8.2" height="8.8"/>
<rect x="22.25" y="64.79" width="8.2" height="8.8"/>
<rect x="33.15" y="64.79" width="8.2" height="8.8"/>
<rect x="0.45" y="75.86" width="8.2" height="8.8"/>
<rect x="11.35" y="75.86" width="8.2" height="8.8"/>
<rect x="22.25" y="75.86" width="8.2" height="8.8"/>
<rect x="33.15" y="75.86" width="8.2" height="8.8"/>
<rect x="0.45" y="86.93" width="8.2" height="8.8"/>
<rect x="11.35" y="86.93" width="8.2" height="8.8"/>
<rect x="22.25" y="86.93" width="8.2" height="8.8"/>
<rect x="33.15" y="86.93" width="8.2" height="8.8"/>
<rect x="0.45" y="98" width="8.2" height="8.8"/>
<rect x="11.35" y="98" width="8.2" height="8.8"/>
<rect x="22.25" y="98" width="8.2" height="8.8"/>
<rect x="33.15" y="98" width="8.2" height="8.8"/>
<rect x="0.45" y="109.07" width="8.2" height="8.8"/>
<rect x="11.35" y="109.07" width="8.2" height="8.8"/>
<rect x="22.25" y="109.07" width="8.2" height="8.8"/>
<rect x="33.15" y="109.07" width="8.2" height="8.8"/>
<rect x="0.45" y="120.14" width="8.2" height="8.8"/>
<rect x="11.35" y="120.14" width="8.2" height="8.8"/>
<rect x="22.25" y="120.14" width="8.2" height="8.8"/>
<rect x="33.15" y="120.14" width="8.2" height="8.8"/>
</g>
</g>
<rect x="919.4" y="384.6" width="50.3" height="134.1" fill="#404040" stroke="#8a8a8a" stroke-width="1"/>
<rect x="972.8" y="384.6" width="50.8" height="134.1" fill="#404040" stroke="#8a8a8a" stroke-width="1"/>
<g transform="translate(924.3,384.1)">
<rect x="0.5" y="5.9" width="40.8" height="7.5" fill="#74b2de" stroke="#000" stroke-width="1"/>
<rect x="0.5" y="16" width="40.8" height="6.4" fill="#f5963f" stroke="#000" stroke-width="1"/>
<rect x="0.5" y="24.7" width="18.7" height="3.9" fill="#a5500f" stroke="#000" stroke-width="1"/>
<rect x="22.6" y="24.7" width="18.7" height="3.9" fill="#a5500f" stroke="#000" stroke-width="1"/>
<rect x="0.5" y="31.9" width="40.8" height="7.7" fill="#235a68" stroke="#000" stroke-width="1"/>
<g fill="#33c733" stroke="#000" stroke-width="0.9">
<rect x="0.45" y="42.65" width="8.2" height="8.8"/>
<rect x="11.35" y="42.65" width="8.2" height="8.8"/>
<rect x="22.25" y="42.65" width="8.2" height="8.8"/>
<rect x="33.15" y="42.65" width="8.2" height="8.8"/>
<rect x="0.45" y="53.72" width="8.2" height="8.8"/>
<rect x="11.35" y="53.72" width="8.2" height="8.8"/>
<rect x="22.25" y="53.72" width="8.2" height="8.8"/>
<rect x="33.15" y="53.72" width="8.2" height="8.8"/>
<rect x="0.45" y="64.79" width="8.2" height="8.8"/>
<rect x="11.35" y="64.79" width="8.2" height="8.8"/>
<rect x="22.25" y="64.79" width="8.2" height="8.8"/>
<rect x="33.15" y="64.79" width="8.2" height="8.8"/>
<rect x="0.45" y="75.86" width="8.2" height="8.8"/>
<rect x="11.35" y="75.86" width="8.2" height="8.8"/>
<rect x="22.25" y="75.86" width="8.2" height="8.8"/>
<rect x="33.15" y="75.86" width="8.2" height="8.8"/>
<rect x="0.45" y="86.93" width="8.2" height="8.8"/>
<rect x="11.35" y="86.93" width="8.2" height="8.8"/>
<rect x="22.25" y="86.93" width="8.2" height="8.8"/>
<rect x="33.15" y="86.93" width="8.2" height="8.8"/>
<rect x="0.45" y="98" width="8.2" height="8.8"/>
<rect x="11.35" y="98" width="8.2" height="8.8"/>
<rect x="22.25" y="98" width="8.2" height="8.8"/>
<rect x="33.15" y="98" width="8.2" height="8.8"/>
<rect x="0.45" y="109.07" width="8.2" height="8.8"/>
<rect x="11.35" y="109.07" width="8.2" height="8.8"/>
<rect x="22.25" y="109.07" width="8.2" height="8.8"/>
<rect x="33.15" y="109.07" width="8.2" height="8.8"/>
<rect x="0.45" y="120.14" width="8.2" height="8.8"/>
<rect x="11.35" y="120.14" width="8.2" height="8.8"/>
<rect x="22.25" y="120.14" width="8.2" height="8.8"/>
<rect x="33.15" y="120.14" width="8.2" height="8.8"/>
</g>
</g>
<g transform="translate(978.4,384.1)">
<rect x="0.5" y="5.9" width="40.8" height="7.5" fill="#74b2de" stroke="#000" stroke-width="1"/>
<rect x="0.5" y="16" width="40.8" height="6.4" fill="#f5963f" stroke="#000" stroke-width="1"/>
<rect x="0.5" y="24.7" width="18.7" height="3.9" fill="#a5500f" stroke="#000" stroke-width="1"/>
<rect x="22.6" y="24.7" width="18.7" height="3.9" fill="#a5500f" stroke="#000" stroke-width="1"/>
<rect x="0.5" y="31.9" width="40.8" height="7.7" fill="#235a68" stroke="#000" stroke-width="1"/>
<g fill="#33c733" stroke="#000" stroke-width="0.9">
<rect x="0.45" y="42.65" width="8.2" height="8.8"/>
<rect x="11.35" y="42.65" width="8.2" height="8.8"/>
<rect x="22.25" y="42.65" width="8.2" height="8.8"/>
<rect x="33.15" y="42.65" width="8.2" height="8.8"/>
<rect x="0.45" y="53.72" width="8.2" height="8.8"/>
<rect x="11.35" y="53.72" width="8.2" height="8.8"/>
<rect x="22.25" y="53.72" width="8.2" height="8.8"/>
<rect x="33.15" y="53.72" width="8.2" height="8.8"/>
<rect x="0.45" y="64.79" width="8.2" height="8.8"/>
<rect x="11.35" y="64.79" width="8.2" height="8.8"/>
<rect x="22.25" y="64.79" width="8.2" height="8.8"/>
<rect x="33.15" y="64.79" width="8.2" height="8.8"/>
<rect x="0.45" y="75.86" width="8.2" height="8.8"/>
<rect x="11.35" y="75.86" width="8.2" height="8.8"/>
<rect x="22.25" y="75.86" width="8.2" height="8.8"/>
<rect x="33.15" y="75.86" width="8.2" height="8.8"/>
<rect x="0.45" y="86.93" width="8.2" height="8.8"/>
<rect x="11.35" y="86.93" width="8.2" height="8.8"/>
<rect x="22.25" y="86.93" width="8.2" height="8.8"/>
<rect x="33.15" y="86.93" width="8.2" height="8.8"/>
<rect x="0.45" y="98" width="8.2" height="8.8"/>
<rect x="11.35" y="98" width="8.2" height="8.8"/>
<rect x="22.25" y="98" width="8.2" height="8.8"/>
<rect x="33.15" y="98" width="8.2" height="8.8"/>
<rect x="0.45" y="109.07" width="8.2" height="8.8"/>
<rect x="11.35" y="109.07" width="8.2" height="8.8"/>
<rect x="22.25" y="109.07" width="8.2" height="8.8"/>
<rect x="33.15" y="109.07" width="8.2" height="8.8"/>
<rect x="0.45" y="120.14" width="8.2" height="8.8"/>
<rect x="11.35" y="120.14" width="8.2" height="8.8"/>
<rect x="22.25" y="120.14" width="8.2" height="8.8"/>
<rect x="33.15" y="120.14" width="8.2" height="8.8"/>
</g>
</g>
<rect x="918.7" y="358.8" width="104.8" height="9.4" fill="#74b2de" stroke="#000" stroke-width="1"/>
<rect x="918.7" y="371" width="24.5" height="9.1" fill="#2955a6" stroke="#000" stroke-width="1"/>
<rect x="945.47" y="371" width="24.5" height="9.1" fill="#2955a6" stroke="#000" stroke-width="1"/>
<rect x="972.23" y="371" width="24.5" height="9.1" fill="#2955a6" stroke="#000" stroke-width="1"/>
<rect x="999" y="371" width="24.5" height="9.1" fill="#2955a6" stroke="#000" stroke-width="1"/>
<rect x="918.7" y="520.9" width="104.8" height="8.5" fill="#74b2de" stroke="#000" stroke-width="1"/>
<rect x="918.7" y="532.7" width="24.5" height="8.8" fill="#2955a6" stroke="#000" stroke-width="1"/>
<rect x="945.47" y="532.7" width="24.5" height="8.8" fill="#2955a6" stroke="#000" stroke-width="1"/>
<rect x="972.23" y="532.7" width="24.5" height="8.8" fill="#2955a6" stroke="#000" stroke-width="1"/>
<rect x="999" y="532.7" width="24.5" height="8.8" fill="#2955a6" stroke="#000" stroke-width="1"/>
<rect x="918.7" y="544.5" width="104.8" height="8.9" fill="#74b2de" stroke="#000" stroke-width="1"/>
<polygon fill="#dcdcdc" points="1095.2,143.4 1104.8,148.66 1098.5,148.66 1098.5,154.6 1091.9,154.6 1091.9,148.66 1085.6,148.66"/>
<polygon fill="#dcdcdc" points="1107.8,143.6 1114.4,143.6 1114.4,149.34 1120.5,149.34 1111.1,155 1101.8,149.34 1107.8,149.34"/>
<rect x="1041.4" y="154.6" width="126.1" height="410.3" fill="#404040" stroke="#8a8a8a" stroke-width="1"/>
<text x="1046.4" y="167.7" font-size="11.7" fill="#fff" stroke="#fff" stroke-width="0.25">TPC</text>
<rect x="1044.55" y="172.55" width="119.7" height="14.8" fill="#f1f96b" stroke="#000" stroke-width="1.1"/>
<text x="1103.9" y="182.7" font-size="10.6" fill="#111" text-anchor="middle" stroke="#111" stroke-width="0.25">PolyMorph Engine</text>
<rect x="1044.4" y="192.5" width="120.1" height="369.2" fill="#404040" stroke="#8a8a8a" stroke-width="1"/>
<text x="1049.3" y="205.1" font-size="11.6" fill="#fff" stroke="#fff" stroke-width="0.25">SM</text>
<rect x="1051.5" y="210.9" width="104.8" height="8.4" fill="#74b2de" stroke="#000" stroke-width="1"/>
<rect x="1052.2" y="222.3" width="50.3" height="134.1" fill="#404040" stroke="#8a8a8a" stroke-width="1"/>
<rect x="1105.6" y="222.3" width="50.8" height="134.1" fill="#404040" stroke="#8a8a8a" stroke-width="1"/>
<g transform="translate(1057.1,221.8)">
<rect x="0.5" y="5.9" width="40.8" height="7.5" fill="#74b2de" stroke="#000" stroke-width="1"/>
<rect x="0.5" y="16" width="40.8" height="6.4" fill="#f5963f" stroke="#000" stroke-width="1"/>
<rect x="0.5" y="24.7" width="18.7" height="3.9" fill="#a5500f" stroke="#000" stroke-width="1"/>
<rect x="22.6" y="24.7" width="18.7" height="3.9" fill="#a5500f" stroke="#000" stroke-width="1"/>
<rect x="0.5" y="31.9" width="40.8" height="7.7" fill="#235a68" stroke="#000" stroke-width="1"/>
<g fill="#33c733" stroke="#000" stroke-width="0.9">
<rect x="0.45" y="42.65" width="8.2" height="8.8"/>
<rect x="11.35" y="42.65" width="8.2" height="8.8"/>
<rect x="22.25" y="42.65" width="8.2" height="8.8"/>
<rect x="33.15" y="42.65" width="8.2" height="8.8"/>
<rect x="0.45" y="53.72" width="8.2" height="8.8"/>
<rect x="11.35" y="53.72" width="8.2" height="8.8"/>
<rect x="22.25" y="53.72" width="8.2" height="8.8"/>
<rect x="33.15" y="53.72" width="8.2" height="8.8"/>
<rect x="0.45" y="64.79" width="8.2" height="8.8"/>
<rect x="11.35" y="64.79" width="8.2" height="8.8"/>
<rect x="22.25" y="64.79" width="8.2" height="8.8"/>
<rect x="33.15" y="64.79" width="8.2" height="8.8"/>
<rect x="0.45" y="75.86" width="8.2" height="8.8"/>
<rect x="11.35" y="75.86" width="8.2" height="8.8"/>
<rect x="22.25" y="75.86" width="8.2" height="8.8"/>
<rect x="33.15" y="75.86" width="8.2" height="8.8"/>
<rect x="0.45" y="86.93" width="8.2" height="8.8"/>
<rect x="11.35" y="86.93" width="8.2" height="8.8"/>
<rect x="22.25" y="86.93" width="8.2" height="8.8"/>
<rect x="33.15" y="86.93" width="8.2" height="8.8"/>
<rect x="0.45" y="98" width="8.2" height="8.8"/>
<rect x="11.35" y="98" width="8.2" height="8.8"/>
<rect x="22.25" y="98" width="8.2" height="8.8"/>
<rect x="33.15" y="98" width="8.2" height="8.8"/>
<rect x="0.45" y="109.07" width="8.2" height="8.8"/>
<rect x="11.35" y="109.07" width="8.2" height="8.8"/>
<rect x="22.25" y="109.07" width="8.2" height="8.8"/>
<rect x="33.15" y="109.07" width="8.2" height="8.8"/>
<rect x="0.45" y="120.14" width="8.2" height="8.8"/>
<rect x="11.35" y="120.14" width="8.2" height="8.8"/>
<rect x="22.25" y="120.14" width="8.2" height="8.8"/>
<rect x="33.15" y="120.14" width="8.2" height="8.8"/>
</g>
</g>
<g transform="translate(1111.2,221.8)">
<rect x="0.5" y="5.9" width="40.8" height="7.5" fill="#74b2de" stroke="#000" stroke-width="1"/>
<rect x="0.5" y="16" width="40.8" height="6.4" fill="#f5963f" stroke="#000" stroke-width="1"/>
<rect x="0.5" y="24.7" width="18.7" height="3.9" fill="#a5500f" stroke="#000" stroke-width="1"/>
<rect x="22.6" y="24.7" width="18.7" height="3.9" fill="#a5500f" stroke="#000" stroke-width="1"/>
<rect x="0.5" y="31.9" width="40.8" height="7.7" fill="#235a68" stroke="#000" stroke-width="1"/>
<g fill="#33c733" stroke="#000" stroke-width="0.9">
<rect x="0.45" y="42.65" width="8.2" height="8.8"/>
<rect x="11.35" y="42.65" width="8.2" height="8.8"/>
<rect x="22.25" y="42.65" width="8.2" height="8.8"/>
<rect x="33.15" y="42.65" width="8.2" height="8.8"/>
<rect x="0.45" y="53.72" width="8.2" height="8.8"/>
<rect x="11.35" y="53.72" width="8.2" height="8.8"/>
<rect x="22.25" y="53.72" width="8.2" height="8.8"/>
<rect x="33.15" y="53.72" width="8.2" height="8.8"/>
<rect x="0.45" y="64.79" width="8.2" height="8.8"/>
<rect x="11.35" y="64.79" width="8.2" height="8.8"/>
<rect x="22.25" y="64.79" width="8.2" height="8.8"/>
<rect x="33.15" y="64.79" width="8.2" height="8.8"/>
<rect x="0.45" y="75.86" width="8.2" height="8.8"/>
<rect x="11.35" y="75.86" width="8.2" height="8.8"/>
<rect x="22.25" y="75.86" width="8.2" height="8.8"/>
<rect x="33.15" y="75.86" width="8.2" height="8.8"/>
<rect x="0.45" y="86.93" width="8.2" height="8.8"/>
<rect x="11.35" y="86.93" width="8.2" height="8.8"/>
<rect x="22.25" y="86.93" width="8.2" height="8.8"/>
<rect x="33.15" y="86.93" width="8.2" height="8.8"/>
<rect x="0.45" y="98" width="8.2" height="8.8"/>
<rect x="11.35" y="98" width="8.2" height="8.8"/>
<rect x="22.25" y="98" width="8.2" height="8.8"/>
<rect x="33.15" y="98" width="8.2" height="8.8"/>
<rect x="0.45" y="109.07" width="8.2" height="8.8"/>
<rect x="11.35" y="109.07" width="8.2" height="8.8"/>
<rect x="22.25" y="109.07" width="8.2" height="8.8"/>
<rect x="33.15" y="109.07" width="8.2" height="8.8"/>
<rect x="0.45" y="120.14" width="8.2" height="8.8"/>
<rect x="11.35" y="120.14" width="8.2" height="8.8"/>
<rect x="22.25" y="120.14" width="8.2" height="8.8"/>
<rect x="33.15" y="120.14" width="8.2" height="8.8"/>
</g>
</g>
<rect x="1052.2" y="384.6" width="50.3" height="134.1" fill="#404040" stroke="#8a8a8a" stroke-width="1"/>
<rect x="1105.6" y="384.6" width="50.8" height="134.1" fill="#404040" stroke="#8a8a8a" stroke-width="1"/>
<g transform="translate(1057.1,384.1)">
<rect x="0.5" y="5.9" width="40.8" height="7.5" fill="#74b2de" stroke="#000" stroke-width="1"/>
<rect x="0.5" y="16" width="40.8" height="6.4" fill="#f5963f" stroke="#000" stroke-width="1"/>
<rect x="0.5" y="24.7" width="18.7" height="3.9" fill="#a5500f" stroke="#000" stroke-width="1"/>
<rect x="22.6" y="24.7" width="18.7" height="3.9" fill="#a5500f" stroke="#000" stroke-width="1"/>
<rect x="0.5" y="31.9" width="40.8" height="7.7" fill="#235a68" stroke="#000" stroke-width="1"/>
<g fill="#33c733" stroke="#000" stroke-width="0.9">
<rect x="0.45" y="42.65" width="8.2" height="8.8"/>
<rect x="11.35" y="42.65" width="8.2" height="8.8"/>
<rect x="22.25" y="42.65" width="8.2" height="8.8"/>
<rect x="33.15" y="42.65" width="8.2" height="8.8"/>
<rect x="0.45" y="53.72" width="8.2" height="8.8"/>
<rect x="11.35" y="53.72" width="8.2" height="8.8"/>
<rect x="22.25" y="53.72" width="8.2" height="8.8"/>
<rect x="33.15" y="53.72" width="8.2" height="8.8"/>
<rect x="0.45" y="64.79" width="8.2" height="8.8"/>
<rect x="11.35" y="64.79" width="8.2" height="8.8"/>
<rect x="22.25" y="64.79" width="8.2" height="8.8"/>
<rect x="33.15" y="64.79" width="8.2" height="8.8"/>
<rect x="0.45" y="75.86" width="8.2" height="8.8"/>
<rect x="11.35" y="75.86" width="8.2" height="8.8"/>
<rect x="22.25" y="75.86" width="8.2" height="8.8"/>
<rect x="33.15" y="75.86" width="8.2" height="8.8"/>
<rect x="0.45" y="86.93" width="8.2" height="8.8"/>
<rect x="11.35" y="86.93" width="8.2" height="8.8"/>
<rect x="22.25" y="86.93" width="8.2" height="8.8"/>
<rect x="33.15" y="86.93" width="8.2" height="8.8"/>
<rect x="0.45" y="98" width="8.2" height="8.8"/>
<rect x="11.35" y="98" width="8.2" height="8.8"/>
<rect x="22.25" y="98" width="8.2" height="8.8"/>
<rect x="33.15" y="98" width="8.2" height="8.8"/>
<rect x="0.45" y="109.07" width="8.2" height="8.8"/>
<rect x="11.35" y="109.07" width="8.2" height="8.8"/>
<rect x="22.25" y="109.07" width="8.2" height="8.8"/>
<rect x="33.15" y="109.07" width="8.2" height="8.8"/>
<rect x="0.45" y="120.14" width="8.2" height="8.8"/>
<rect x="11.35" y="120.14" width="8.2" height="8.8"/>
<rect x="22.25" y="120.14" width="8.2" height="8.8"/>
<rect x="33.15" y="120.14" width="8.2" height="8.8"/>
</g>
</g>
<g transform="translate(1111.2,384.1)">
<rect x="0.5" y="5.9" width="40.8" height="7.5" fill="#74b2de" stroke="#000" stroke-width="1"/>
<rect x="0.5" y="16" width="40.8" height="6.4" fill="#f5963f" stroke="#000" stroke-width="1"/>
<rect x="0.5" y="24.7" width="18.7" height="3.9" fill="#a5500f" stroke="#000" stroke-width="1"/>
<rect x="22.6" y="24.7" width="18.7" height="3.9" fill="#a5500f" stroke="#000" stroke-width="1"/>
<rect x="0.5" y="31.9" width="40.8" height="7.7" fill="#235a68" stroke="#000" stroke-width="1"/>
<g fill="#33c733" stroke="#000" stroke-width="0.9">
<rect x="0.45" y="42.65" width="8.2" height="8.8"/>
<rect x="11.35" y="42.65" width="8.2" height="8.8"/>
<rect x="22.25" y="42.65" width="8.2" height="8.8"/>
<rect x="33.15" y="42.65" width="8.2" height="8.8"/>
<rect x="0.45" y="53.72" width="8.2" height="8.8"/>
<rect x="11.35" y="53.72" width="8.2" height="8.8"/>
<rect x="22.25" y="53.72" width="8.2" height="8.8"/>
<rect x="33.15" y="53.72" width="8.2" height="8.8"/>
<rect x="0.45" y="64.79" width="8.2" height="8.8"/>
<rect x="11.35" y="64.79" width="8.2" height="8.8"/>
<rect x="22.25" y="64.79" width="8.2" height="8.8"/>
<rect x="33.15" y="64.79" width="8.2" height="8.8"/>
<rect x="0.45" y="75.86" width="8.2" height="8.8"/>
<rect x="11.35" y="75.86" width="8.2" height="8.8"/>
<rect x="22.25" y="75.86" width="8.2" height="8.8"/>
<rect x="33.15" y="75.86" width="8.2" height="8.8"/>
<rect x="0.45" y="86.93" width="8.2" height="8.8"/>
<rect x="11.35" y="86.93" width="8.2" height="8.8"/>
<rect x="22.25" y="86.93" width="8.2" height="8.8"/>
<rect x="33.15" y="86.93" width="8.2" height="8.8"/>
<rect x="0.45" y="98" width="8.2" height="8.8"/>
<rect x="11.35" y="98" width="8.2" height="8.8"/>
<rect x="22.25" y="98" width="8.2" height="8.8"/>
<rect x="33.15" y="98" width="8.2" height="8.8"/>
<rect x="0.45" y="109.07" width="8.2" height="8.8"/>
<rect x="11.35" y="109.07" width="8.2" height="8.8"/>
<rect x="22.25" y="109.07" width="8.2" height="8.8"/>
<rect x="33.15" y="109.07" width="8.2" height="8.8"/>
<rect x="0.45" y="120.14" width="8.2" height="8.8"/>
<rect x="11.35" y="120.14" width="8.2" height="8.8"/>
<rect x="22.25" y="120.14" width="8.2" height="8.8"/>
<rect x="33.15" y="120.14" width="8.2" height="8.8"/>
</g>
</g>
<rect x="1051.5" y="358.8" width="104.8" height="9.4" fill="#74b2de" stroke="#000" stroke-width="1"/>
<rect x="1051.5" y="371" width="24.5" height="9.1" fill="#2955a6" stroke="#000" stroke-width="1"/>
<rect x="1078.27" y="371" width="24.5" height="9.1" fill="#2955a6" stroke="#000" stroke-width="1"/>
<rect x="1105.03" y="371" width="24.5" height="9.1" fill="#2955a6" stroke="#000" stroke-width="1"/>
<rect x="1131.8" y="371" width="24.5" height="9.1" fill="#2955a6" stroke="#000" stroke-width="1"/>
<rect x="1051.5" y="520.9" width="104.8" height="8.5" fill="#74b2de" stroke="#000" stroke-width="1"/>
<rect x="1051.5" y="532.7" width="24.5" height="8.8" fill="#2955a6" stroke="#000" stroke-width="1"/>
<rect x="1078.27" y="532.7" width="24.5" height="8.8" fill="#2955a6" stroke="#000" stroke-width="1"/>
<rect x="1105.03" y="532.7" width="24.5" height="8.8" fill="#2955a6" stroke="#000" stroke-width="1"/>
<rect x="1131.8" y="532.7" width="24.5" height="8.8" fill="#2955a6" stroke="#000" stroke-width="1"/>
<rect x="1051.5" y="544.5" width="104.8" height="8.9" fill="#74b2de" stroke="#000" stroke-width="1"/>
<polygon fill="#dcdcdc" points="1227.9,143.4 1237.5,148.66 1231.2,148.66 1231.2,154.6 1224.6,154.6 1224.6,148.66 1218.3,148.66"/>
<polygon fill="#dcdcdc" points="1240.5,143.6 1247.1,143.6 1247.1,149.34 1253.2,149.34 1243.8,155 1234.5,149.34 1240.5,149.34"/>
<rect x="1174.1" y="154.6" width="126.1" height="410.3" fill="#404040" stroke="#8a8a8a" stroke-width="1"/>
<text x="1179.1" y="167.7" font-size="11.7" fill="#fff" stroke="#fff" stroke-width="0.25">TPC</text>
<rect x="1177.25" y="172.55" width="119.7" height="14.8" fill="#f1f96b" stroke="#000" stroke-width="1.1"/>
<text x="1236.6" y="182.7" font-size="10.6" fill="#111" text-anchor="middle" stroke="#111" stroke-width="0.25">PolyMorph Engine</text>
<rect x="1177.1" y="192.5" width="120.1" height="369.2" fill="#404040" stroke="#8a8a8a" stroke-width="1"/>
<text x="1182" y="205.1" font-size="11.6" fill="#fff" stroke="#fff" stroke-width="0.25">SM</text>
<rect x="1184.2" y="210.9" width="104.8" height="8.4" fill="#74b2de" stroke="#000" stroke-width="1"/>
<rect x="1184.9" y="222.3" width="50.3" height="134.1" fill="#404040" stroke="#8a8a8a" stroke-width="1"/>
<rect x="1238.3" y="222.3" width="50.8" height="134.1" fill="#404040" stroke="#8a8a8a" stroke-width="1"/>
<g transform="translate(1189.8,221.8)">
<rect x="0.5" y="5.9" width="40.8" height="7.5" fill="#74b2de" stroke="#000" stroke-width="1"/>
<rect x="0.5" y="16" width="40.8" height="6.4" fill="#f5963f" stroke="#000" stroke-width="1"/>
<rect x="0.5" y="24.7" width="18.7" height="3.9" fill="#a5500f" stroke="#000" stroke-width="1"/>
<rect x="22.6" y="24.7" width="18.7" height="3.9" fill="#a5500f" stroke="#000" stroke-width="1"/>
<rect x="0.5" y="31.9" width="40.8" height="7.7" fill="#235a68" stroke="#000" stroke-width="1"/>
<g fill="#33c733" stroke="#000" stroke-width="0.9">
<rect x="0.45" y="42.65" width="8.2" height="8.8"/>
<rect x="11.35" y="42.65" width="8.2" height="8.8"/>
<rect x="22.25" y="42.65" width="8.2" height="8.8"/>
<rect x="33.15" y="42.65" width="8.2" height="8.8"/>
<rect x="0.45" y="53.72" width="8.2" height="8.8"/>
<rect x="11.35" y="53.72" width="8.2" height="8.8"/>
<rect x="22.25" y="53.72" width="8.2" height="8.8"/>
<rect x="33.15" y="53.72" width="8.2" height="8.8"/>
<rect x="0.45" y="64.79" width="8.2" height="8.8"/>
<rect x="11.35" y="64.79" width="8.2" height="8.8"/>
<rect x="22.25" y="64.79" width="8.2" height="8.8"/>
<rect x="33.15" y="64.79" width="8.2" height="8.8"/>
<rect x="0.45" y="75.86" width="8.2" height="8.8"/>
<rect x="11.35" y="75.86" width="8.2" height="8.8"/>
<rect x="22.25" y="75.86" width="8.2" height="8.8"/>
<rect x="33.15" y="75.86" width="8.2" height="8.8"/>
<rect x="0.45" y="86.93" width="8.2" height="8.8"/>
<rect x="11.35" y="86.93" width="8.2" height="8.8"/>
<rect x="22.25" y="86.93" width="8.2" height="8.8"/>
<rect x="33.15" y="86.93" width="8.2" height="8.8"/>
<rect x="0.45" y="98" width="8.2" height="8.8"/>
<rect x="11.35" y="98" width="8.2" height="8.8"/>
<rect x="22.25" y="98" width="8.2" height="8.8"/>
<rect x="33.15" y="98" width="8.2" height="8.8"/>
<rect x="0.45" y="109.07" width="8.2" height="8.8"/>
<rect x="11.35" y="109.07" width="8.2" height="8.8"/>
<rect x="22.25" y="109.07" width="8.2" height="8.8"/>
<rect x="33.15" y="109.07" width="8.2" height="8.8"/>
<rect x="0.45" y="120.14" width="8.2" height="8.8"/>
<rect x="11.35" y="120.14" width="8.2" height="8.8"/>
<rect x="22.25" y="120.14" width="8.2" height="8.8"/>
<rect x="33.15" y="120.14" width="8.2" height="8.8"/>
</g>
</g>
<g transform="translate(1243.9,221.8)">
<rect x="0.5" y="5.9" width="40.8" height="7.5" fill="#74b2de" stroke="#000" stroke-width="1"/>
<rect x="0.5" y="16" width="40.8" height="6.4" fill="#f5963f" stroke="#000" stroke-width="1"/>
<rect x="0.5" y="24.7" width="18.7" height="3.9" fill="#a5500f" stroke="#000" stroke-width="1"/>
<rect x="22.6" y="24.7" width="18.7" height="3.9" fill="#a5500f" stroke="#000" stroke-width="1"/>
<rect x="0.5" y="31.9" width="40.8" height="7.7" fill="#235a68" stroke="#000" stroke-width="1"/>
<g fill="#33c733" stroke="#000" stroke-width="0.9">
<rect x="0.45" y="42.65" width="8.2" height="8.8"/>
<rect x="11.35" y="42.65" width="8.2" height="8.8"/>
<rect x="22.25" y="42.65" width="8.2" height="8.8"/>
<rect x="33.15" y="42.65" width="8.2" height="8.8"/>
<rect x="0.45" y="53.72" width="8.2" height="8.8"/>
<rect x="11.35" y="53.72" width="8.2" height="8.8"/>
<rect x="22.25" y="53.72" width="8.2" height="8.8"/>
<rect x="33.15" y="53.72" width="8.2" height="8.8"/>
<rect x="0.45" y="64.79" width="8.2" height="8.8"/>
<rect x="11.35" y="64.79" width="8.2" height="8.8"/>
<rect x="22.25" y="64.79" width="8.2" height="8.8"/>
<rect x="33.15" y="64.79" width="8.2" height="8.8"/>
<rect x="0.45" y="75.86" width="8.2" height="8.8"/>
<rect x="11.35" y="75.86" width="8.2" height="8.8"/>
<rect x="22.25" y="75.86" width="8.2" height="8.8"/>
<rect x="33.15" y="75.86" width="8.2" height="8.8"/>
<rect x="0.45" y="86.93" width="8.2" height="8.8"/>
<rect x="11.35" y="86.93" width="8.2" height="8.8"/>
<rect x="22.25" y="86.93" width="8.2" height="8.8"/>
<rect x="33.15" y="86.93" width="8.2" height="8.8"/>
<rect x="0.45" y="98" width="8.2" height="8.8"/>
<rect x="11.35" y="98" width="8.2" height="8.8"/>
<rect x="22.25" y="98" width="8.2" height="8.8"/>
<rect x="33.15" y="98" width="8.2" height="8.8"/>
<rect x="0.45" y="109.07" width="8.2" height="8.8"/>
<rect x="11.35" y="109.07" width="8.2" height="8.8"/>
<rect x="22.25" y="109.07" width="8.2" height="8.8"/>
<rect x="33.15" y="109.07" width="8.2" height="8.8"/>
<rect x="0.45" y="120.14" width="8.2" height="8.8"/>
<rect x="11.35" y="120.14" width="8.2" height="8.8"/>
<rect x="22.25" y="120.14" width="8.2" height="8.8"/>
<rect x="33.15" y="120.14" width="8.2" height="8.8"/>
</g>
</g>
<rect x="1184.9" y="384.6" width="50.3" height="134.1" fill="#404040" stroke="#8a8a8a" stroke-width="1"/>
<rect x="1238.3" y="384.6" width="50.8" height="134.1" fill="#404040" stroke="#8a8a8a" stroke-width="1"/>
<g transform="translate(1189.8,384.1)">
<rect x="0.5" y="5.9" width="40.8" height="7.5" fill="#74b2de" stroke="#000" stroke-width="1"/>
<rect x="0.5" y="16" width="40.8" height="6.4" fill="#f5963f" stroke="#000" stroke-width="1"/>
<rect x="0.5" y="24.7" width="18.7" height="3.9" fill="#a5500f" stroke="#000" stroke-width="1"/>
<rect x="22.6" y="24.7" width="18.7" height="3.9" fill="#a5500f" stroke="#000" stroke-width="1"/>
<rect x="0.5" y="31.9" width="40.8" height="7.7" fill="#235a68" stroke="#000" stroke-width="1"/>
<g fill="#33c733" stroke="#000" stroke-width="0.9">
<rect x="0.45" y="42.65" width="8.2" height="8.8"/>
<rect x="11.35" y="42.65" width="8.2" height="8.8"/>
<rect x="22.25" y="42.65" width="8.2" height="8.8"/>
<rect x="33.15" y="42.65" width="8.2" height="8.8"/>
<rect x="0.45" y="53.72" width="8.2" height="8.8"/>
<rect x="11.35" y="53.72" width="8.2" height="8.8"/>
<rect x="22.25" y="53.72" width="8.2" height="8.8"/>
<rect x="33.15" y="53.72" width="8.2" height="8.8"/>
<rect x="0.45" y="64.79" width="8.2" height="8.8"/>
<rect x="11.35" y="64.79" width="8.2" height="8.8"/>
<rect x="22.25" y="64.79" width="8.2" height="8.8"/>
<rect x="33.15" y="64.79" width="8.2" height="8.8"/>
<rect x="0.45" y="75.86" width="8.2" height="8.8"/>
<rect x="11.35" y="75.86" width="8.2" height="8.8"/>
<rect x="22.25" y="75.86" width="8.2" height="8.8"/>
<rect x="33.15" y="75.86" width="8.2" height="8.8"/>
<rect x="0.45" y="86.93" width="8.2" height="8.8"/>
<rect x="11.35" y="86.93" width="8.2" height="8.8"/>
<rect x="22.25" y="86.93" width="8.2" height="8.8"/>
<rect x="33.15" y="86.93" width="8.2" height="8.8"/>
<rect x="0.45" y="98" width="8.2" height="8.8"/>
<rect x="11.35" y="98" width="8.2" height="8.8"/>
<rect x="22.25" y="98" width="8.2" height="8.8"/>
<rect x="33.15" y="98" width="8.2" height="8.8"/>
<rect x="0.45" y="109.07" width="8.2" height="8.8"/>
<rect x="11.35" y="109.07" width="8.2" height="8.8"/>
<rect x="22.25" y="109.07" width="8.2" height="8.8"/>
<rect x="33.15" y="109.07" width="8.2" height="8.8"/>
<rect x="0.45" y="120.14" width="8.2" height="8.8"/>
<rect x="11.35" y="120.14" width="8.2" height="8.8"/>
<rect x="22.25" y="120.14" width="8.2" height="8.8"/>
<rect x="33.15" y="120.14" width="8.2" height="8.8"/>
</g>
</g>
<g transform="translate(1243.9,384.1)">
<rect x="0.5" y="5.9" width="40.8" height="7.5" fill="#74b2de" stroke="#000" stroke-width="1"/>
<rect x="0.5" y="16" width="40.8" height="6.4" fill="#f5963f" stroke="#000" stroke-width="1"/>
<rect x="0.5" y="24.7" width="18.7" height="3.9" fill="#a5500f" stroke="#000" stroke-width="1"/>
<rect x="22.6" y="24.7" width="18.7" height="3.9" fill="#a5500f" stroke="#000" stroke-width="1"/>
<rect x="0.5" y="31.9" width="40.8" height="7.7" fill="#235a68" stroke="#000" stroke-width="1"/>
<g fill="#33c733" stroke="#000" stroke-width="0.9">
<rect x="0.45" y="42.65" width="8.2" height="8.8"/>
<rect x="11.35" y="42.65" width="8.2" height="8.8"/>
<rect x="22.25" y="42.65" width="8.2" height="8.8"/>
<rect x="33.15" y="42.65" width="8.2" height="8.8"/>
<rect x="0.45" y="53.72" width="8.2" height="8.8"/>
<rect x="11.35" y="53.72" width="8.2" height="8.8"/>
<rect x="22.25" y="53.72" width="8.2" height="8.8"/>
<rect x="33.15" y="53.72" width="8.2" height="8.8"/>
<rect x="0.45" y="64.79" width="8.2" height="8.8"/>
<rect x="11.35" y="64.79" width="8.2" height="8.8"/>
<rect x="22.25" y="64.79" width="8.2" height="8.8"/>
<rect x="33.15" y="64.79" width="8.2" height="8.8"/>
<rect x="0.45" y="75.86" width="8.2" height="8.8"/>
<rect x="11.35" y="75.86" width="8.2" height="8.8"/>
<rect x="22.25" y="75.86" width="8.2" height="8.8"/>
<rect x="33.15" y="75.86" width="8.2" height="8.8"/>
<rect x="0.45" y="86.93" width="8.2" height="8.8"/>
<rect x="11.35" y="86.93" width="8.2" height="8.8"/>
<rect x="22.25" y="86.93" width="8.2" height="8.8"/>
<rect x="33.15" y="86.93" width="8.2" height="8.8"/>
<rect x="0.45" y="98" width="8.2" height="8.8"/>
<rect x="11.35" y="98" width="8.2" height="8.8"/>
<rect x="22.25" y="98" width="8.2" height="8.8"/>
<rect x="33.15" y="98" width="8.2" height="8.8"/>
<rect x="0.45" y="109.07" width="8.2" height="8.8"/>
<rect x="11.35" y="109.07" width="8.2" height="8.8"/>
<rect x="22.25" y="109.07" width="8.2" height="8.8"/>
<rect x="33.15" y="109.07" width="8.2" height="8.8"/>
<rect x="0.45" y="120.14" width="8.2" height="8.8"/>
<rect x="11.35" y="120.14" width="8.2" height="8.8"/>
<rect x="22.25" y="120.14" width="8.2" height="8.8"/>
<rect x="33.15" y="120.14" width="8.2" height="8.8"/>
</g>
</g>
<rect x="1184.2" y="358.8" width="104.8" height="9.4" fill="#74b2de" stroke="#000" stroke-width="1"/>
<rect x="1184.2" y="371" width="24.5" height="9.1" fill="#2955a6" stroke="#000" stroke-width="1"/>
<rect x="1210.97" y="371" width="24.5" height="9.1" fill="#2955a6" stroke="#000" stroke-width="1"/>
<rect x="1237.73" y="371" width="24.5" height="9.1" fill="#2955a6" stroke="#000" stroke-width="1"/>
<rect x="1264.5" y="371" width="24.5" height="9.1" fill="#2955a6" stroke="#000" stroke-width="1"/>
<rect x="1184.2" y="520.9" width="104.8" height="8.5" fill="#74b2de" stroke="#000" stroke-width="1"/>
<rect x="1184.2" y="532.7" width="24.5" height="8.8" fill="#2955a6" stroke="#000" stroke-width="1"/>
<rect x="1210.97" y="532.7" width="24.5" height="8.8" fill="#2955a6" stroke="#000" stroke-width="1"/>
<rect x="1237.73" y="532.7" width="24.5" height="8.8" fill="#2955a6" stroke="#000" stroke-width="1"/>
<rect x="1264.5" y="532.7" width="24.5" height="8.8" fill="#2955a6" stroke="#000" stroke-width="1"/>
<rect x="1184.2" y="544.5" width="104.8" height="8.9" fill="#74b2de" stroke="#000" stroke-width="1"/>
<polygon fill="#dcdcdc" points="1360.5,143.4 1370.1,148.66 1363.8,148.66 1363.8,154.6 1357.2,154.6 1357.2,148.66 1350.9,148.66"/>
<polygon fill="#dcdcdc" points="1373.1,143.6 1379.7,143.6 1379.7,149.34 1385.8,149.34 1376.4,155 1367.1,149.34 1373.1,149.34"/>
<rect x="1306.7" y="154.6" width="126.1" height="410.3" fill="#404040" stroke="#8a8a8a" stroke-width="1"/>
<text x="1311.7" y="167.7" font-size="11.7" fill="#fff" stroke="#fff" stroke-width="0.25">TPC</text>
<rect x="1309.85" y="172.55" width="119.7" height="14.8" fill="#f1f96b" stroke="#000" stroke-width="1.1"/>
<text x="1369.2" y="182.7" font-size="10.6" fill="#111" text-anchor="middle" stroke="#111" stroke-width="0.25">PolyMorph Engine</text>
<rect x="1309.7" y="192.5" width="120.1" height="369.2" fill="#404040" stroke="#8a8a8a" stroke-width="1"/>
<text x="1314.6" y="205.1" font-size="11.6" fill="#fff" stroke="#fff" stroke-width="0.25">SM</text>
<rect x="1316.8" y="210.9" width="104.8" height="8.4" fill="#74b2de" stroke="#000" stroke-width="1"/>
<rect x="1317.5" y="222.3" width="50.3" height="134.1" fill="#404040" stroke="#8a8a8a" stroke-width="1"/>
<rect x="1370.9" y="222.3" width="50.8" height="134.1" fill="#404040" stroke="#8a8a8a" stroke-width="1"/>
<g transform="translate(1322.4,221.8)">
<rect x="0.5" y="5.9" width="40.8" height="7.5" fill="#74b2de" stroke="#000" stroke-width="1"/>
<rect x="0.5" y="16" width="40.8" height="6.4" fill="#f5963f" stroke="#000" stroke-width="1"/>
<rect x="0.5" y="24.7" width="18.7" height="3.9" fill="#a5500f" stroke="#000" stroke-width="1"/>
<rect x="22.6" y="24.7" width="18.7" height="3.9" fill="#a5500f" stroke="#000" stroke-width="1"/>
<rect x="0.5" y="31.9" width="40.8" height="7.7" fill="#235a68" stroke="#000" stroke-width="1"/>
<g fill="#33c733" stroke="#000" stroke-width="0.9">
<rect x="0.45" y="42.65" width="8.2" height="8.8"/>
<rect x="11.35" y="42.65" width="8.2" height="8.8"/>
<rect x="22.25" y="42.65" width="8.2" height="8.8"/>
<rect x="33.15" y="42.65" width="8.2" height="8.8"/>
<rect x="0.45" y="53.72" width="8.2" height="8.8"/>
<rect x="11.35" y="53.72" width="8.2" height="8.8"/>
<rect x="22.25" y="53.72" width="8.2" height="8.8"/>
<rect x="33.15" y="53.72" width="8.2" height="8.8"/>
<rect x="0.45" y="64.79" width="8.2" height="8.8"/>
<rect x="11.35" y="64.79" width="8.2" height="8.8"/>
<rect x="22.25" y="64.79" width="8.2" height="8.8"/>
<rect x="33.15" y="64.79" width="8.2" height="8.8"/>
<rect x="0.45" y="75.86" width="8.2" height="8.8"/>
<rect x="11.35" y="75.86" width="8.2" height="8.8"/>
<rect x="22.25" y="75.86" width="8.2" height="8.8"/>
<rect x="33.15" y="75.86" width="8.2" height="8.8"/>
<rect x="0.45" y="86.93" width="8.2" height="8.8"/>
<rect x="11.35" y="86.93" width="8.2" height="8.8"/>
<rect x="22.25" y="86.93" width="8.2" height="8.8"/>
<rect x="33.15" y="86.93" width="8.2" height="8.8"/>
<rect x="0.45" y="98" width="8.2" height="8.8"/>
<rect x="11.35" y="98" width="8.2" height="8.8"/>
<rect x="22.25" y="98" width="8.2" height="8.8"/>
<rect x="33.15" y="98" width="8.2" height="8.8"/>
<rect x="0.45" y="109.07" width="8.2" height="8.8"/>
<rect x="11.35" y="109.07" width="8.2" height="8.8"/>
<rect x="22.25" y="109.07" width="8.2" height="8.8"/>
<rect x="33.15" y="109.07" width="8.2" height="8.8"/>
<rect x="0.45" y="120.14" width="8.2" height="8.8"/>
<rect x="11.35" y="120.14" width="8.2" height="8.8"/>
<rect x="22.25" y="120.14" width="8.2" height="8.8"/>
<rect x="33.15" y="120.14" width="8.2" height="8.8"/>
</g>
</g>
<g transform="translate(1376.5,221.8)">
<rect x="0.5" y="5.9" width="40.8" height="7.5" fill="#74b2de" stroke="#000" stroke-width="1"/>
<rect x="0.5" y="16" width="40.8" height="6.4" fill="#f5963f" stroke="#000" stroke-width="1"/>
<rect x="0.5" y="24.7" width="18.7" height="3.9" fill="#a5500f" stroke="#000" stroke-width="1"/>
<rect x="22.6" y="24.7" width="18.7" height="3.9" fill="#a5500f" stroke="#000" stroke-width="1"/>
<rect x="0.5" y="31.9" width="40.8" height="7.7" fill="#235a68" stroke="#000" stroke-width="1"/>
<g fill="#33c733" stroke="#000" stroke-width="0.9">
<rect x="0.45" y="42.65" width="8.2" height="8.8"/>
<rect x="11.35" y="42.65" width="8.2" height="8.8"/>
<rect x="22.25" y="42.65" width="8.2" height="8.8"/>
<rect x="33.15" y="42.65" width="8.2" height="8.8"/>
<rect x="0.45" y="53.72" width="8.2" height="8.8"/>
<rect x="11.35" y="53.72" width="8.2" height="8.8"/>
<rect x="22.25" y="53.72" width="8.2" height="8.8"/>
<rect x="33.15" y="53.72" width="8.2" height="8.8"/>
<rect x="0.45" y="64.79" width="8.2" height="8.8"/>
<rect x="11.35" y="64.79" width="8.2" height="8.8"/>
<rect x="22.25" y="64.79" width="8.2" height="8.8"/>
<rect x="33.15" y="64.79" width="8.2" height="8.8"/>
<rect x="0.45" y="75.86" width="8.2" height="8.8"/>
<rect x="11.35" y="75.86" width="8.2" height="8.8"/>
<rect x="22.25" y="75.86" width="8.2" height="8.8"/>
<rect x="33.15" y="75.86" width="8.2" height="8.8"/>
<rect x="0.45" y="86.93" width="8.2" height="8.8"/>
<rect x="11.35" y="86.93" width="8.2" height="8.8"/>
<rect x="22.25" y="86.93" width="8.2" height="8.8"/>
<rect x="33.15" y="86.93" width="8.2" height="8.8"/>
<rect x="0.45" y="98" width="8.2" height="8.8"/>
<rect x="11.35" y="98" width="8.2" height="8.8"/>
<rect x="22.25" y="98" width="8.2" height="8.8"/>
<rect x="33.15" y="98" width="8.2" height="8.8"/>
<rect x="0.45" y="109.07" width="8.2" height="8.8"/>
<rect x="11.35" y="109.07" width="8.2" height="8.8"/>
<rect x="22.25" y="109.07" width="8.2" height="8.8"/>
<rect x="33.15" y="109.07" width="8.2" height="8.8"/>
<rect x="0.45" y="120.14" width="8.2" height="8.8"/>
<rect x="11.35" y="120.14" width="8.2" height="8.8"/>
<rect x="22.25" y="120.14" width="8.2" height="8.8"/>
<rect x="33.15" y="120.14" width="8.2" height="8.8"/>
</g>
</g>
<rect x="1317.5" y="384.6" width="50.3" height="134.1" fill="#404040" stroke="#8a8a8a" stroke-width="1"/>
<rect x="1370.9" y="384.6" width="50.8" height="134.1" fill="#404040" stroke="#8a8a8a" stroke-width="1"/>
<g transform="translate(1322.4,384.1)">
<rect x="0.5" y="5.9" width="40.8" height="7.5" fill="#74b2de" stroke="#000" stroke-width="1"/>
<rect x="0.5" y="16" width="40.8" height="6.4" fill="#f5963f" stroke="#000" stroke-width="1"/>
<rect x="0.5" y="24.7" width="18.7" height="3.9" fill="#a5500f" stroke="#000" stroke-width="1"/>
<rect x="22.6" y="24.7" width="18.7" height="3.9" fill="#a5500f" stroke="#000" stroke-width="1"/>
<rect x="0.5" y="31.9" width="40.8" height="7.7" fill="#235a68" stroke="#000" stroke-width="1"/>
<g fill="#33c733" stroke="#000" stroke-width="0.9">
<rect x="0.45" y="42.65" width="8.2" height="8.8"/>
<rect x="11.35" y="42.65" width="8.2" height="8.8"/>
<rect x="22.25" y="42.65" width="8.2" height="8.8"/>
<rect x="33.15" y="42.65" width="8.2" height="8.8"/>
<rect x="0.45" y="53.72" width="8.2" height="8.8"/>
<rect x="11.35" y="53.72" width="8.2" height="8.8"/>
<rect x="22.25" y="53.72" width="8.2" height="8.8"/>
<rect x="33.15" y="53.72" width="8.2" height="8.8"/>
<rect x="0.45" y="64.79" width="8.2" height="8.8"/>
<rect x="11.35" y="64.79" width="8.2" height="8.8"/>
<rect x="22.25" y="64.79" width="8.2" height="8.8"/>
<rect x="33.15" y="64.79" width="8.2" height="8.8"/>
<rect x="0.45" y="75.86" width="8.2" height="8.8"/>
<rect x="11.35" y="75.86" width="8.2" height="8.8"/>
<rect x="22.25" y="75.86" width="8.2" height="8.8"/>
<rect x="33.15" y="75.86" width="8.2" height="8.8"/>
<rect x="0.45" y="86.93" width="8.2" height="8.8"/>
<rect x="11.35" y="86.93" width="8.2" height="8.8"/>
<rect x="22.25" y="86.93" width="8.2" height="8.8"/>
<rect x="33.15" y="86.93" width="8.2" height="8.8"/>
<rect x="0.45" y="98" width="8.2" height="8.8"/>
<rect x="11.35" y="98" width="8.2" height="8.8"/>
<rect x="22.25" y="98" width="8.2" height="8.8"/>
<rect x="33.15" y="98" width="8.2" height="8.8"/>
<rect x="0.45" y="109.07" width="8.2" height="8.8"/>
<rect x="11.35" y="109.07" width="8.2" height="8.8"/>
<rect x="22.25" y="109.07" width="8.2" height="8.8"/>
<rect x="33.15" y="109.07" width="8.2" height="8.8"/>
<rect x="0.45" y="120.14" width="8.2" height="8.8"/>
<rect x="11.35" y="120.14" width="8.2" height="8.8"/>
<rect x="22.25" y="120.14" width="8.2" height="8.8"/>
<rect x="33.15" y="120.14" width="8.2" height="8.8"/>
</g>
</g>
<g transform="translate(1376.5,384.1)">
<rect x="0.5" y="5.9" width="40.8" height="7.5" fill="#74b2de" stroke="#000" stroke-width="1"/>
<rect x="0.5" y="16" width="40.8" height="6.4" fill="#f5963f" stroke="#000" stroke-width="1"/>
<rect x="0.5" y="24.7" width="18.7" height="3.9" fill="#a5500f" stroke="#000" stroke-width="1"/>
<rect x="22.6" y="24.7" width="18.7" height="3.9" fill="#a5500f" stroke="#000" stroke-width="1"/>
<rect x="0.5" y="31.9" width="40.8" height="7.7" fill="#235a68" stroke="#000" stroke-width="1"/>
<g fill="#33c733" stroke="#000" stroke-width="0.9">
<rect x="0.45" y="42.65" width="8.2" height="8.8"/>
<rect x="11.35" y="42.65" width="8.2" height="8.8"/>
<rect x="22.25" y="42.65" width="8.2" height="8.8"/>
<rect x="33.15" y="42.65" width="8.2" height="8.8"/>
<rect x="0.45" y="53.72" width="8.2" height="8.8"/>
<rect x="11.35" y="53.72" width="8.2" height="8.8"/>
<rect x="22.25" y="53.72" width="8.2" height="8.8"/>
<rect x="33.15" y="53.72" width="8.2" height="8.8"/>
<rect x="0.45" y="64.79" width="8.2" height="8.8"/>
<rect x="11.35" y="64.79" width="8.2" height="8.8"/>
<rect x="22.25" y="64.79" width="8.2" height="8.8"/>
<rect x="33.15" y="64.79" width="8.2" height="8.8"/>
<rect x="0.45" y="75.86" width="8.2" height="8.8"/>
<rect x="11.35" y="75.86" width="8.2" height="8.8"/>
<rect x="22.25" y="75.86" width="8.2" height="8.8"/>
<rect x="33.15" y="75.86" width="8.2" height="8.8"/>
<rect x="0.45" y="86.93" width="8.2" height="8.8"/>
<rect x="11.35" y="86.93" width="8.2" height="8.8"/>
<rect x="22.25" y="86.93" width="8.2" height="8.8"/>
<rect x="33.15" y="86.93" width="8.2" height="8.8"/>
<rect x="0.45" y="98" width="8.2" height="8.8"/>
<rect x="11.35" y="98" width="8.2" height="8.8"/>
<rect x="22.25" y="98" width="8.2" height="8.8"/>
<rect x="33.15" y="98" width="8.2" height="8.8"/>
<rect x="0.45" y="109.07" width="8.2" height="8.8"/>
<rect x="11.35" y="109.07" width="8.2" height="8.8"/>
<rect x="22.25" y="109.07" width="8.2" height="8.8"/>
<rect x="33.15" y="109.07" width="8.2" height="8.8"/>
<rect x="0.45" y="120.14" width="8.2" height="8.8"/>
<rect x="11.35" y="120.14" width="8.2" height="8.8"/>
<rect x="22.25" y="120.14" width="8.2" height="8.8"/>
<rect x="33.15" y="120.14" width="8.2" height="8.8"/>
</g>
</g>
<rect x="1316.8" y="358.8" width="104.8" height="9.4" fill="#74b2de" stroke="#000" stroke-width="1"/>
<rect x="1316.8" y="371" width="24.5" height="9.1" fill="#2955a6" stroke="#000" stroke-width="1"/>
<rect x="1343.57" y="371" width="24.5" height="9.1" fill="#2955a6" stroke="#000" stroke-width="1"/>
<rect x="1370.33" y="371" width="24.5" height="9.1" fill="#2955a6" stroke="#000" stroke-width="1"/>
<rect x="1397.1" y="371" width="24.5" height="9.1" fill="#2955a6" stroke="#000" stroke-width="1"/>
<rect x="1316.8" y="520.9" width="104.8" height="8.5" fill="#74b2de" stroke="#000" stroke-width="1"/>
<rect x="1316.8" y="532.7" width="24.5" height="8.8" fill="#2955a6" stroke="#000" stroke-width="1"/>
<rect x="1343.57" y="532.7" width="24.5" height="8.8" fill="#2955a6" stroke="#000" stroke-width="1"/>
<rect x="1370.33" y="532.7" width="24.5" height="8.8" fill="#2955a6" stroke="#000" stroke-width="1"/>
<rect x="1397.1" y="532.7" width="24.5" height="8.8" fill="#2955a6" stroke="#000" stroke-width="1"/>
<rect x="1316.8" y="544.5" width="104.8" height="8.9" fill="#74b2de" stroke="#000" stroke-width="1"/>
<rect x="89.75" y="741.85" width="671" height="481.1" fill="#404040" stroke="#dfdfdf" stroke-width="3.1"/>
<text x="97.7" y="1217.5" font-size="15.3" fill="#fff" font-weight="normal" stroke="#fff" stroke-width="0.6">GPC</text>
<rect x="97.5" y="1176.6" width="656.4" height="21.9" fill="#f1f96b"/>
<text x="425.4" y="1193.8" font-size="15.9" fill="#111" text-anchor="middle" stroke="#111" stroke-width="0.4">Raster Engine</text>
<rect x="97.8" y="754.6" width="126" height="410" fill="#404040" stroke="#8a8a8a" stroke-width="1"/>
<rect x="100.8" y="758.6" width="120" height="368.8" fill="#404040" stroke="#8a8a8a" stroke-width="1"/>
<rect x="107.5" y="764.5" width="105" height="8.8" fill="#74b2de" stroke="#000" stroke-width="1"/>
<rect x="107.5" y="776.6" width="24.5" height="8.9" fill="#2955a6" stroke="#000" stroke-width="1"/>
<rect x="134.33" y="776.6" width="24.5" height="8.9" fill="#2955a6" stroke="#000" stroke-width="1"/>
<rect x="161.17" y="776.6" width="24.5" height="8.9" fill="#2955a6" stroke="#000" stroke-width="1"/>
<rect x="188" y="776.6" width="24.5" height="8.9" fill="#2955a6" stroke="#000" stroke-width="1"/>
<rect x="107.5" y="788.8" width="105" height="8.7" fill="#74b2de" stroke="#000" stroke-width="1"/>
<rect x="107.6" y="800.3" width="50" height="133.3" fill="#404040" stroke="#8a8a8a" stroke-width="1"/>
<rect x="161.4" y="800.3" width="50.7" height="133.3" fill="#404040" stroke="#8a8a8a" stroke-width="1"/>
<g transform="translate(111.2,799.8)">
<g fill="#33c733" stroke="#000" stroke-width="0.9">
<rect x="0.45" y="5.85" width="8.2" height="8.8"/>
<rect x="11.35" y="5.85" width="8.2" height="8.8"/>
<rect x="22.25" y="5.85" width="8.2" height="8.8"/>
<rect x="33.15" y="5.85" width="8.2" height="8.8"/>
<rect x="0.45" y="16.92" width="8.2" height="8.8"/>
<rect x="11.35" y="16.92" width="8.2" height="8.8"/>
<rect x="22.25" y="16.92" width="8.2" height="8.8"/>
<rect x="33.15" y="16.92" width="8.2" height="8.8"/>
<rect x="0.45" y="27.99" width="8.2" height="8.8"/>
<rect x="11.35" y="27.99" width="8.2" height="8.8"/>
<rect x="22.25" y="27.99" width="8.2" height="8.8"/>
<rect x="33.15" y="27.99" width="8.2" height="8.8"/>
<rect x="0.45" y="39.06" width="8.2" height="8.8"/>
<rect x="11.35" y="39.06" width="8.2" height="8.8"/>
<rect x="22.25" y="39.06" width="8.2" height="8.8"/>
<rect x="33.15" y="39.06" width="8.2" height="8.8"/>
<rect x="0.45" y="50.13" width="8.2" height="8.8"/>
<rect x="11.35" y="50.13" width="8.2" height="8.8"/>
<rect x="22.25" y="50.13" width="8.2" height="8.8"/>
<rect x="33.15" y="50.13" width="8.2" height="8.8"/>
<rect x="0.45" y="61.2" width="8.2" height="8.8"/>
<rect x="11.35" y="61.2" width="8.2" height="8.8"/>
<rect x="22.25" y="61.2" width="8.2" height="8.8"/>
<rect x="33.15" y="61.2" width="8.2" height="8.8"/>
<rect x="0.45" y="72.27" width="8.2" height="8.8"/>
<rect x="11.35" y="72.27" width="8.2" height="8.8"/>
<rect x="22.25" y="72.27" width="8.2" height="8.8"/>
<rect x="33.15" y="72.27" width="8.2" height="8.8"/>
<rect x="0.45" y="83.34" width="8.2" height="8.8"/>
<rect x="11.35" y="83.34" width="8.2" height="8.8"/>
<rect x="22.25" y="83.34" width="8.2" height="8.8"/>
<rect x="33.15" y="83.34" width="8.2" height="8.8"/>
</g>
<rect x="0.5" y="96" width="40.8" height="7.1" fill="#74b2de" stroke="#000" stroke-width="1"/>
<rect x="0.5" y="105.6" width="40.8" height="5.8" fill="#f5963f" stroke="#000" stroke-width="1"/>
<rect x="0.5" y="115" width="18.7" height="3.6" fill="#a5500f" stroke="#000" stroke-width="1"/>
<rect x="22.6" y="115" width="18.7" height="3.6" fill="#a5500f" stroke="#000" stroke-width="1"/>
<rect x="0.5" y="120.9" width="40.8" height="7.6" fill="#235a68" stroke="#000" stroke-width="1"/>
</g>
<g transform="translate(165.6,799.8)">
<g fill="#33c733" stroke="#000" stroke-width="0.9">
<rect x="0.45" y="5.85" width="8.2" height="8.8"/>
<rect x="11.35" y="5.85" width="8.2" height="8.8"/>
<rect x="22.25" y="5.85" width="8.2" height="8.8"/>
<rect x="33.15" y="5.85" width="8.2" height="8.8"/>
<rect x="0.45" y="16.92" width="8.2" height="8.8"/>
<rect x="11.35" y="16.92" width="8.2" height="8.8"/>
<rect x="22.25" y="16.92" width="8.2" height="8.8"/>
<rect x="33.15" y="16.92" width="8.2" height="8.8"/>
<rect x="0.45" y="27.99" width="8.2" height="8.8"/>
<rect x="11.35" y="27.99" width="8.2" height="8.8"/>
<rect x="22.25" y="27.99" width="8.2" height="8.8"/>
<rect x="33.15" y="27.99" width="8.2" height="8.8"/>
<rect x="0.45" y="39.06" width="8.2" height="8.8"/>
<rect x="11.35" y="39.06" width="8.2" height="8.8"/>
<rect x="22.25" y="39.06" width="8.2" height="8.8"/>
<rect x="33.15" y="39.06" width="8.2" height="8.8"/>
<rect x="0.45" y="50.13" width="8.2" height="8.8"/>
<rect x="11.35" y="50.13" width="8.2" height="8.8"/>
<rect x="22.25" y="50.13" width="8.2" height="8.8"/>
<rect x="33.15" y="50.13" width="8.2" height="8.8"/>
<rect x="0.45" y="61.2" width="8.2" height="8.8"/>
<rect x="11.35" y="61.2" width="8.2" height="8.8"/>
<rect x="22.25" y="61.2" width="8.2" height="8.8"/>
<rect x="33.15" y="61.2" width="8.2" height="8.8"/>
<rect x="0.45" y="72.27" width="8.2" height="8.8"/>
<rect x="11.35" y="72.27" width="8.2" height="8.8"/>
<rect x="22.25" y="72.27" width="8.2" height="8.8"/>
<rect x="33.15" y="72.27" width="8.2" height="8.8"/>
<rect x="0.45" y="83.34" width="8.2" height="8.8"/>
<rect x="11.35" y="83.34" width="8.2" height="8.8"/>
<rect x="22.25" y="83.34" width="8.2" height="8.8"/>
<rect x="33.15" y="83.34" width="8.2" height="8.8"/>
</g>
<rect x="0.5" y="96" width="40.8" height="7.1" fill="#74b2de" stroke="#000" stroke-width="1"/>
<rect x="0.5" y="105.6" width="40.8" height="5.8" fill="#f5963f" stroke="#000" stroke-width="1"/>
<rect x="0.5" y="115" width="18.7" height="3.6" fill="#a5500f" stroke="#000" stroke-width="1"/>
<rect x="22.6" y="115" width="18.7" height="3.6" fill="#a5500f" stroke="#000" stroke-width="1"/>
<rect x="0.5" y="120.9" width="40.8" height="7.6" fill="#235a68" stroke="#000" stroke-width="1"/>
</g>
<rect x="107.6" y="963.4" width="50" height="133.3" fill="#404040" stroke="#8a8a8a" stroke-width="1"/>
<rect x="161.4" y="963.4" width="50.7" height="133.3" fill="#404040" stroke="#8a8a8a" stroke-width="1"/>
<g transform="translate(111.2,962.9)">
<g fill="#33c733" stroke="#000" stroke-width="0.9">
<rect x="0.45" y="5.85" width="8.2" height="8.8"/>
<rect x="11.35" y="5.85" width="8.2" height="8.8"/>
<rect x="22.25" y="5.85" width="8.2" height="8.8"/>
<rect x="33.15" y="5.85" width="8.2" height="8.8"/>
<rect x="0.45" y="16.92" width="8.2" height="8.8"/>
<rect x="11.35" y="16.92" width="8.2" height="8.8"/>
<rect x="22.25" y="16.92" width="8.2" height="8.8"/>
<rect x="33.15" y="16.92" width="8.2" height="8.8"/>
<rect x="0.45" y="27.99" width="8.2" height="8.8"/>
<rect x="11.35" y="27.99" width="8.2" height="8.8"/>
<rect x="22.25" y="27.99" width="8.2" height="8.8"/>
<rect x="33.15" y="27.99" width="8.2" height="8.8"/>
<rect x="0.45" y="39.06" width="8.2" height="8.8"/>
<rect x="11.35" y="39.06" width="8.2" height="8.8"/>
<rect x="22.25" y="39.06" width="8.2" height="8.8"/>
<rect x="33.15" y="39.06" width="8.2" height="8.8"/>
<rect x="0.45" y="50.13" width="8.2" height="8.8"/>
<rect x="11.35" y="50.13" width="8.2" height="8.8"/>
<rect x="22.25" y="50.13" width="8.2" height="8.8"/>
<rect x="33.15" y="50.13" width="8.2" height="8.8"/>
<rect x="0.45" y="61.2" width="8.2" height="8.8"/>
<rect x="11.35" y="61.2" width="8.2" height="8.8"/>
<rect x="22.25" y="61.2" width="8.2" height="8.8"/>
<rect x="33.15" y="61.2" width="8.2" height="8.8"/>
<rect x="0.45" y="72.27" width="8.2" height="8.8"/>
<rect x="11.35" y="72.27" width="8.2" height="8.8"/>
<rect x="22.25" y="72.27" width="8.2" height="8.8"/>
<rect x="33.15" y="72.27" width="8.2" height="8.8"/>
<rect x="0.45" y="83.34" width="8.2" height="8.8"/>
<rect x="11.35" y="83.34" width="8.2" height="8.8"/>
<rect x="22.25" y="83.34" width="8.2" height="8.8"/>
<rect x="33.15" y="83.34" width="8.2" height="8.8"/>
</g>
<rect x="0.5" y="96" width="40.8" height="7.1" fill="#74b2de" stroke="#000" stroke-width="1"/>
<rect x="0.5" y="105.6" width="40.8" height="5.8" fill="#f5963f" stroke="#000" stroke-width="1"/>
<rect x="0.5" y="115" width="18.7" height="3.6" fill="#a5500f" stroke="#000" stroke-width="1"/>
<rect x="22.6" y="115" width="18.7" height="3.6" fill="#a5500f" stroke="#000" stroke-width="1"/>
<rect x="0.5" y="120.9" width="40.8" height="7.6" fill="#235a68" stroke="#000" stroke-width="1"/>
</g>
<g transform="translate(165.6,962.9)">
<g fill="#33c733" stroke="#000" stroke-width="0.9">
<rect x="0.45" y="5.85" width="8.2" height="8.8"/>
<rect x="11.35" y="5.85" width="8.2" height="8.8"/>
<rect x="22.25" y="5.85" width="8.2" height="8.8"/>
<rect x="33.15" y="5.85" width="8.2" height="8.8"/>
<rect x="0.45" y="16.92" width="8.2" height="8.8"/>
<rect x="11.35" y="16.92" width="8.2" height="8.8"/>
<rect x="22.25" y="16.92" width="8.2" height="8.8"/>
<rect x="33.15" y="16.92" width="8.2" height="8.8"/>
<rect x="0.45" y="27.99" width="8.2" height="8.8"/>
<rect x="11.35" y="27.99" width="8.2" height="8.8"/>
<rect x="22.25" y="27.99" width="8.2" height="8.8"/>
<rect x="33.15" y="27.99" width="8.2" height="8.8"/>
<rect x="0.45" y="39.06" width="8.2" height="8.8"/>
<rect x="11.35" y="39.06" width="8.2" height="8.8"/>
<rect x="22.25" y="39.06" width="8.2" height="8.8"/>
<rect x="33.15" y="39.06" width="8.2" height="8.8"/>
<rect x="0.45" y="50.13" width="8.2" height="8.8"/>
<rect x="11.35" y="50.13" width="8.2" height="8.8"/>
<rect x="22.25" y="50.13" width="8.2" height="8.8"/>
<rect x="33.15" y="50.13" width="8.2" height="8.8"/>
<rect x="0.45" y="61.2" width="8.2" height="8.8"/>
<rect x="11.35" y="61.2" width="8.2" height="8.8"/>
<rect x="22.25" y="61.2" width="8.2" height="8.8"/>
<rect x="33.15" y="61.2" width="8.2" height="8.8"/>
<rect x="0.45" y="72.27" width="8.2" height="8.8"/>
<rect x="11.35" y="72.27" width="8.2" height="8.8"/>
<rect x="22.25" y="72.27" width="8.2" height="8.8"/>
<rect x="33.15" y="72.27" width="8.2" height="8.8"/>
<rect x="0.45" y="83.34" width="8.2" height="8.8"/>
<rect x="11.35" y="83.34" width="8.2" height="8.8"/>
<rect x="22.25" y="83.34" width="8.2" height="8.8"/>
<rect x="33.15" y="83.34" width="8.2" height="8.8"/>
</g>
<rect x="0.5" y="96" width="40.8" height="7.1" fill="#74b2de" stroke="#000" stroke-width="1"/>
<rect x="0.5" y="105.6" width="40.8" height="5.8" fill="#f5963f" stroke="#000" stroke-width="1"/>
<rect x="0.5" y="115" width="18.7" height="3.6" fill="#a5500f" stroke="#000" stroke-width="1"/>
<rect x="22.6" y="115" width="18.7" height="3.6" fill="#a5500f" stroke="#000" stroke-width="1"/>
<rect x="0.5" y="120.9" width="40.8" height="7.6" fill="#235a68" stroke="#000" stroke-width="1"/>
</g>
<rect x="106.9" y="937.8" width="24.5" height="9.5" fill="#2955a6" stroke="#000" stroke-width="1"/>
<rect x="133.6" y="937.8" width="24.5" height="9.5" fill="#2955a6" stroke="#000" stroke-width="1"/>
<rect x="160.3" y="937.8" width="24.5" height="9.5" fill="#2955a6" stroke="#000" stroke-width="1"/>
<rect x="187" y="937.8" width="24.5" height="9.5" fill="#2955a6" stroke="#000" stroke-width="1"/>
<rect x="106.9" y="951" width="104.6" height="8.2" fill="#74b2de" stroke="#000" stroke-width="1"/>
<rect x="107.5" y="1100.6" width="105" height="8.8" fill="#74b2de" stroke="#000" stroke-width="1"/>
<text x="105.8" y="1123.4" font-size="11.5" fill="#fff" stroke="#fff" stroke-width="0.25">SM</text>
<rect x="101.05" y="1132.75" width="119.1" height="14.4" fill="#f1f96b" stroke="#000" stroke-width="1.1"/>
<text x="160.3" y="1142.9" font-size="10.6" fill="#111" text-anchor="middle" stroke="#111" stroke-width="0.25">PolyMorph Engine</text>
<text x="102.5" y="1160" font-size="11.7" fill="#fff" font-weight="normal" stroke="#fff" stroke-width="0.45">TPC</text>
<polygon fill="#dcdcdc" points="154,1164.3 163.89,1169.7 157.4,1169.7 157.4,1175.8 150.6,1175.8 150.6,1169.7 144.11,1169.7"/>
<polygon fill="#dcdcdc" points="166.98,1164.5 173.78,1164.5 173.78,1170.39 180.06,1170.39 170.38,1176.2 160.8,1170.39 166.98,1170.39"/>
<rect x="229.75" y="754.6" width="126" height="410" fill="#404040" stroke="#8a8a8a" stroke-width="1"/>
<rect x="232.75" y="758.6" width="120" height="368.8" fill="#404040" stroke="#8a8a8a" stroke-width="1"/>
<rect x="239.45" y="764.5" width="105" height="8.8" fill="#74b2de" stroke="#000" stroke-width="1"/>
<rect x="239.45" y="776.6" width="24.5" height="8.9" fill="#2955a6" stroke="#000" stroke-width="1"/>
<rect x="266.28" y="776.6" width="24.5" height="8.9" fill="#2955a6" stroke="#000" stroke-width="1"/>
<rect x="293.12" y="776.6" width="24.5" height="8.9" fill="#2955a6" stroke="#000" stroke-width="1"/>
<rect x="319.95" y="776.6" width="24.5" height="8.9" fill="#2955a6" stroke="#000" stroke-width="1"/>
<rect x="239.45" y="788.8" width="105" height="8.7" fill="#74b2de" stroke="#000" stroke-width="1"/>
<rect x="239.55" y="800.3" width="50" height="133.3" fill="#404040" stroke="#8a8a8a" stroke-width="1"/>
<rect x="293.35" y="800.3" width="50.7" height="133.3" fill="#404040" stroke="#8a8a8a" stroke-width="1"/>
<g transform="translate(243.15,799.8)">
<g fill="#33c733" stroke="#000" stroke-width="0.9">
<rect x="0.45" y="5.85" width="8.2" height="8.8"/>
<rect x="11.35" y="5.85" width="8.2" height="8.8"/>
<rect x="22.25" y="5.85" width="8.2" height="8.8"/>
<rect x="33.15" y="5.85" width="8.2" height="8.8"/>
<rect x="0.45" y="16.92" width="8.2" height="8.8"/>
<rect x="11.35" y="16.92" width="8.2" height="8.8"/>
<rect x="22.25" y="16.92" width="8.2" height="8.8"/>
<rect x="33.15" y="16.92" width="8.2" height="8.8"/>
<rect x="0.45" y="27.99" width="8.2" height="8.8"/>
<rect x="11.35" y="27.99" width="8.2" height="8.8"/>
<rect x="22.25" y="27.99" width="8.2" height="8.8"/>
<rect x="33.15" y="27.99" width="8.2" height="8.8"/>
<rect x="0.45" y="39.06" width="8.2" height="8.8"/>
<rect x="11.35" y="39.06" width="8.2" height="8.8"/>
<rect x="22.25" y="39.06" width="8.2" height="8.8"/>
<rect x="33.15" y="39.06" width="8.2" height="8.8"/>
<rect x="0.45" y="50.13" width="8.2" height="8.8"/>
<rect x="11.35" y="50.13" width="8.2" height="8.8"/>
<rect x="22.25" y="50.13" width="8.2" height="8.8"/>
<rect x="33.15" y="50.13" width="8.2" height="8.8"/>
<rect x="0.45" y="61.2" width="8.2" height="8.8"/>
<rect x="11.35" y="61.2" width="8.2" height="8.8"/>
<rect x="22.25" y="61.2" width="8.2" height="8.8"/>
<rect x="33.15" y="61.2" width="8.2" height="8.8"/>
<rect x="0.45" y="72.27" width="8.2" height="8.8"/>
<rect x="11.35" y="72.27" width="8.2" height="8.8"/>
<rect x="22.25" y="72.27" width="8.2" height="8.8"/>
<rect x="33.15" y="72.27" width="8.2" height="8.8"/>
<rect x="0.45" y="83.34" width="8.2" height="8.8"/>
<rect x="11.35" y="83.34" width="8.2" height="8.8"/>
<rect x="22.25" y="83.34" width="8.2" height="8.8"/>
<rect x="33.15" y="83.34" width="8.2" height="8.8"/>
</g>
<rect x="0.5" y="96" width="40.8" height="7.1" fill="#74b2de" stroke="#000" stroke-width="1"/>
<rect x="0.5" y="105.6" width="40.8" height="5.8" fill="#f5963f" stroke="#000" stroke-width="1"/>
<rect x="0.5" y="115" width="18.7" height="3.6" fill="#a5500f" stroke="#000" stroke-width="1"/>
<rect x="22.6" y="115" width="18.7" height="3.6" fill="#a5500f" stroke="#000" stroke-width="1"/>
<rect x="0.5" y="120.9" width="40.8" height="7.6" fill="#235a68" stroke="#000" stroke-width="1"/>
</g>
<g transform="translate(297.55,799.8)">
<g fill="#33c733" stroke="#000" stroke-width="0.9">
<rect x="0.45" y="5.85" width="8.2" height="8.8"/>
<rect x="11.35" y="5.85" width="8.2" height="8.8"/>
<rect x="22.25" y="5.85" width="8.2" height="8.8"/>
<rect x="33.15" y="5.85" width="8.2" height="8.8"/>
<rect x="0.45" y="16.92" width="8.2" height="8.8"/>
<rect x="11.35" y="16.92" width="8.2" height="8.8"/>
<rect x="22.25" y="16.92" width="8.2" height="8.8"/>
<rect x="33.15" y="16.92" width="8.2" height="8.8"/>
<rect x="0.45" y="27.99" width="8.2" height="8.8"/>
<rect x="11.35" y="27.99" width="8.2" height="8.8"/>
<rect x="22.25" y="27.99" width="8.2" height="8.8"/>
<rect x="33.15" y="27.99" width="8.2" height="8.8"/>
<rect x="0.45" y="39.06" width="8.2" height="8.8"/>
<rect x="11.35" y="39.06" width="8.2" height="8.8"/>
<rect x="22.25" y="39.06" width="8.2" height="8.8"/>
<rect x="33.15" y="39.06" width="8.2" height="8.8"/>
<rect x="0.45" y="50.13" width="8.2" height="8.8"/>
<rect x="11.35" y="50.13" width="8.2" height="8.8"/>
<rect x="22.25" y="50.13" width="8.2" height="8.8"/>
<rect x="33.15" y="50.13" width="8.2" height="8.8"/>
<rect x="0.45" y="61.2" width="8.2" height="8.8"/>
<rect x="11.35" y="61.2" width="8.2" height="8.8"/>
<rect x="22.25" y="61.2" width="8.2" height="8.8"/>
<rect x="33.15" y="61.2" width="8.2" height="8.8"/>
<rect x="0.45" y="72.27" width="8.2" height="8.8"/>
<rect x="11.35" y="72.27" width="8.2" height="8.8"/>
<rect x="22.25" y="72.27" width="8.2" height="8.8"/>
<rect x="33.15" y="72.27" width="8.2" height="8.8"/>
<rect x="0.45" y="83.34" width="8.2" height="8.8"/>
<rect x="11.35" y="83.34" width="8.2" height="8.8"/>
<rect x="22.25" y="83.34" width="8.2" height="8.8"/>
<rect x="33.15" y="83.34" width="8.2" height="8.8"/>
</g>
<rect x="0.5" y="96" width="40.8" height="7.1" fill="#74b2de" stroke="#000" stroke-width="1"/>
<rect x="0.5" y="105.6" width="40.8" height="5.8" fill="#f5963f" stroke="#000" stroke-width="1"/>
<rect x="0.5" y="115" width="18.7" height="3.6" fill="#a5500f" stroke="#000" stroke-width="1"/>
<rect x="22.6" y="115" width="18.7" height="3.6" fill="#a5500f" stroke="#000" stroke-width="1"/>
<rect x="0.5" y="120.9" width="40.8" height="7.6" fill="#235a68" stroke="#000" stroke-width="1"/>
</g>
<rect x="239.55" y="963.4" width="50" height="133.3" fill="#404040" stroke="#8a8a8a" stroke-width="1"/>
<rect x="293.35" y="963.4" width="50.7" height="133.3" fill="#404040" stroke="#8a8a8a" stroke-width="1"/>
<g transform="translate(243.15,962.9)">
<g fill="#33c733" stroke="#000" stroke-width="0.9">
<rect x="0.45" y="5.85" width="8.2" height="8.8"/>
<rect x="11.35" y="5.85" width="8.2" height="8.8"/>
<rect x="22.25" y="5.85" width="8.2" height="8.8"/>
<rect x="33.15" y="5.85" width="8.2" height="8.8"/>
<rect x="0.45" y="16.92" width="8.2" height="8.8"/>
<rect x="11.35" y="16.92" width="8.2" height="8.8"/>
<rect x="22.25" y="16.92" width="8.2" height="8.8"/>
<rect x="33.15" y="16.92" width="8.2" height="8.8"/>
<rect x="0.45" y="27.99" width="8.2" height="8.8"/>
<rect x="11.35" y="27.99" width="8.2" height="8.8"/>
<rect x="22.25" y="27.99" width="8.2" height="8.8"/>
<rect x="33.15" y="27.99" width="8.2" height="8.8"/>
<rect x="0.45" y="39.06" width="8.2" height="8.8"/>
<rect x="11.35" y="39.06" width="8.2" height="8.8"/>
<rect x="22.25" y="39.06" width="8.2" height="8.8"/>
<rect x="33.15" y="39.06" width="8.2" height="8.8"/>
<rect x="0.45" y="50.13" width="8.2" height="8.8"/>
<rect x="11.35" y="50.13" width="8.2" height="8.8"/>
<rect x="22.25" y="50.13" width="8.2" height="8.8"/>
<rect x="33.15" y="50.13" width="8.2" height="8.8"/>
<rect x="0.45" y="61.2" width="8.2" height="8.8"/>
<rect x="11.35" y="61.2" width="8.2" height="8.8"/>
<rect x="22.25" y="61.2" width="8.2" height="8.8"/>
<rect x="33.15" y="61.2" width="8.2" height="8.8"/>
<rect x="0.45" y="72.27" width="8.2" height="8.8"/>
<rect x="11.35" y="72.27" width="8.2" height="8.8"/>
<rect x="22.25" y="72.27" width="8.2" height="8.8"/>
<rect x="33.15" y="72.27" width="8.2" height="8.8"/>
<rect x="0.45" y="83.34" width="8.2" height="8.8"/>
<rect x="11.35" y="83.34" width="8.2" height="8.8"/>
<rect x="22.25" y="83.34" width="8.2" height="8.8"/>
<rect x="33.15" y="83.34" width="8.2" height="8.8"/>
</g>
<rect x="0.5" y="96" width="40.8" height="7.1" fill="#74b2de" stroke="#000" stroke-width="1"/>
<rect x="0.5" y="105.6" width="40.8" height="5.8" fill="#f5963f" stroke="#000" stroke-width="1"/>
<rect x="0.5" y="115" width="18.7" height="3.6" fill="#a5500f" stroke="#000" stroke-width="1"/>
<rect x="22.6" y="115" width="18.7" height="3.6" fill="#a5500f" stroke="#000" stroke-width="1"/>
<rect x="0.5" y="120.9" width="40.8" height="7.6" fill="#235a68" stroke="#000" stroke-width="1"/>
</g>
<g transform="translate(297.55,962.9)">
<g fill="#33c733" stroke="#000" stroke-width="0.9">
<rect x="0.45" y="5.85" width="8.2" height="8.8"/>
<rect x="11.35" y="5.85" width="8.2" height="8.8"/>
<rect x="22.25" y="5.85" width="8.2" height="8.8"/>
<rect x="33.15" y="5.85" width="8.2" height="8.8"/>
<rect x="0.45" y="16.92" width="8.2" height="8.8"/>
<rect x="11.35" y="16.92" width="8.2" height="8.8"/>
<rect x="22.25" y="16.92" width="8.2" height="8.8"/>
<rect x="33.15" y="16.92" width="8.2" height="8.8"/>
<rect x="0.45" y="27.99" width="8.2" height="8.8"/>
<rect x="11.35" y="27.99" width="8.2" height="8.8"/>
<rect x="22.25" y="27.99" width="8.2" height="8.8"/>
<rect x="33.15" y="27.99" width="8.2" height="8.8"/>
<rect x="0.45" y="39.06" width="8.2" height="8.8"/>
<rect x="11.35" y="39.06" width="8.2" height="8.8"/>
<rect x="22.25" y="39.06" width="8.2" height="8.8"/>
<rect x="33.15" y="39.06" width="8.2" height="8.8"/>
<rect x="0.45" y="50.13" width="8.2" height="8.8"/>
<rect x="11.35" y="50.13" width="8.2" height="8.8"/>
<rect x="22.25" y="50.13" width="8.2" height="8.8"/>
<rect x="33.15" y="50.13" width="8.2" height="8.8"/>
<rect x="0.45" y="61.2" width="8.2" height="8.8"/>
<rect x="11.35" y="61.2" width="8.2" height="8.8"/>
<rect x="22.25" y="61.2" width="8.2" height="8.8"/>
<rect x="33.15" y="61.2" width="8.2" height="8.8"/>
<rect x="0.45" y="72.27" width="8.2" height="8.8"/>
<rect x="11.35" y="72.27" width="8.2" height="8.8"/>
<rect x="22.25" y="72.27" width="8.2" height="8.8"/>
<rect x="33.15" y="72.27" width="8.2" height="8.8"/>
<rect x="0.45" y="83.34" width="8.2" height="8.8"/>
<rect x="11.35" y="83.34" width="8.2" height="8.8"/>
<rect x="22.25" y="83.34" width="8.2" height="8.8"/>
<rect x="33.15" y="83.34" width="8.2" height="8.8"/>
</g>
<rect x="0.5" y="96" width="40.8" height="7.1" fill="#74b2de" stroke="#000" stroke-width="1"/>
<rect x="0.5" y="105.6" width="40.8" height="5.8" fill="#f5963f" stroke="#000" stroke-width="1"/>
<rect x="0.5" y="115" width="18.7" height="3.6" fill="#a5500f" stroke="#000" stroke-width="1"/>
<rect x="22.6" y="115" width="18.7" height="3.6" fill="#a5500f" stroke="#000" stroke-width="1"/>
<rect x="0.5" y="120.9" width="40.8" height="7.6" fill="#235a68" stroke="#000" stroke-width="1"/>
</g>
<rect x="238.85" y="937.8" width="24.5" height="9.5" fill="#2955a6" stroke="#000" stroke-width="1"/>
<rect x="265.55" y="937.8" width="24.5" height="9.5" fill="#2955a6" stroke="#000" stroke-width="1"/>
<rect x="292.25" y="937.8" width="24.5" height="9.5" fill="#2955a6" stroke="#000" stroke-width="1"/>
<rect x="318.95" y="937.8" width="24.5" height="9.5" fill="#2955a6" stroke="#000" stroke-width="1"/>
<rect x="238.85" y="951" width="104.6" height="8.2" fill="#74b2de" stroke="#000" stroke-width="1"/>
<rect x="239.45" y="1100.6" width="105" height="8.8" fill="#74b2de" stroke="#000" stroke-width="1"/>
<text x="237.75" y="1123.4" font-size="11.5" fill="#fff" stroke="#fff" stroke-width="0.25">SM</text>
<rect x="233" y="1132.75" width="119.1" height="14.4" fill="#f1f96b" stroke="#000" stroke-width="1.1"/>
<text x="292.25" y="1142.9" font-size="10.6" fill="#111" text-anchor="middle" stroke="#111" stroke-width="0.25">PolyMorph Engine</text>
<text x="234.45" y="1160" font-size="11.7" fill="#fff" font-weight="normal" stroke="#fff" stroke-width="0.45">TPC</text>
<polygon fill="#dcdcdc" points="285.95,1164.3 295.84,1169.7 289.35,1169.7 289.35,1175.8 282.55,1175.8 282.55,1169.7 276.06,1169.7"/>
<polygon fill="#dcdcdc" points="298.93,1164.5 305.73,1164.5 305.73,1170.39 312.01,1170.39 302.33,1176.2 292.75,1170.39 298.93,1170.39"/>
<rect x="362.7" y="754.6" width="126" height="410" fill="#404040" stroke="#8a8a8a" stroke-width="1"/>
<rect x="365.7" y="758.6" width="120" height="368.8" fill="#404040" stroke="#8a8a8a" stroke-width="1"/>
<rect x="372.4" y="764.5" width="105" height="8.8" fill="#74b2de" stroke="#000" stroke-width="1"/>
<rect x="372.4" y="776.6" width="24.5" height="8.9" fill="#2955a6" stroke="#000" stroke-width="1"/>
<rect x="399.23" y="776.6" width="24.5" height="8.9" fill="#2955a6" stroke="#000" stroke-width="1"/>
<rect x="426.07" y="776.6" width="24.5" height="8.9" fill="#2955a6" stroke="#000" stroke-width="1"/>
<rect x="452.9" y="776.6" width="24.5" height="8.9" fill="#2955a6" stroke="#000" stroke-width="1"/>
<rect x="372.4" y="788.8" width="105" height="8.7" fill="#74b2de" stroke="#000" stroke-width="1"/>
<rect x="372.5" y="800.3" width="50" height="133.3" fill="#404040" stroke="#8a8a8a" stroke-width="1"/>
<rect x="426.3" y="800.3" width="50.7" height="133.3" fill="#404040" stroke="#8a8a8a" stroke-width="1"/>
<g transform="translate(376.1,799.8)">
<g fill="#33c733" stroke="#000" stroke-width="0.9">
<rect x="0.45" y="5.85" width="8.2" height="8.8"/>
<rect x="11.35" y="5.85" width="8.2" height="8.8"/>
<rect x="22.25" y="5.85" width="8.2" height="8.8"/>
<rect x="33.15" y="5.85" width="8.2" height="8.8"/>
<rect x="0.45" y="16.92" width="8.2" height="8.8"/>
<rect x="11.35" y="16.92" width="8.2" height="8.8"/>
<rect x="22.25" y="16.92" width="8.2" height="8.8"/>
<rect x="33.15" y="16.92" width="8.2" height="8.8"/>
<rect x="0.45" y="27.99" width="8.2" height="8.8"/>
<rect x="11.35" y="27.99" width="8.2" height="8.8"/>
<rect x="22.25" y="27.99" width="8.2" height="8.8"/>
<rect x="33.15" y="27.99" width="8.2" height="8.8"/>
<rect x="0.45" y="39.06" width="8.2" height="8.8"/>
<rect x="11.35" y="39.06" width="8.2" height="8.8"/>
<rect x="22.25" y="39.06" width="8.2" height="8.8"/>
<rect x="33.15" y="39.06" width="8.2" height="8.8"/>
<rect x="0.45" y="50.13" width="8.2" height="8.8"/>
<rect x="11.35" y="50.13" width="8.2" height="8.8"/>
<rect x="22.25" y="50.13" width="8.2" height="8.8"/>
<rect x="33.15" y="50.13" width="8.2" height="8.8"/>
<rect x="0.45" y="61.2" width="8.2" height="8.8"/>
<rect x="11.35" y="61.2" width="8.2" height="8.8"/>
<rect x="22.25" y="61.2" width="8.2" height="8.8"/>
<rect x="33.15" y="61.2" width="8.2" height="8.8"/>
<rect x="0.45" y="72.27" width="8.2" height="8.8"/>
<rect x="11.35" y="72.27" width="8.2" height="8.8"/>
<rect x="22.25" y="72.27" width="8.2" height="8.8"/>
<rect x="33.15" y="72.27" width="8.2" height="8.8"/>
<rect x="0.45" y="83.34" width="8.2" height="8.8"/>
<rect x="11.35" y="83.34" width="8.2" height="8.8"/>
<rect x="22.25" y="83.34" width="8.2" height="8.8"/>
<rect x="33.15" y="83.34" width="8.2" height="8.8"/>
</g>
<rect x="0.5" y="96" width="40.8" height="7.1" fill="#74b2de" stroke="#000" stroke-width="1"/>
<rect x="0.5" y="105.6" width="40.8" height="5.8" fill="#f5963f" stroke="#000" stroke-width="1"/>
<rect x="0.5" y="115" width="18.7" height="3.6" fill="#a5500f" stroke="#000" stroke-width="1"/>
<rect x="22.6" y="115" width="18.7" height="3.6" fill="#a5500f" stroke="#000" stroke-width="1"/>
<rect x="0.5" y="120.9" width="40.8" height="7.6" fill="#235a68" stroke="#000" stroke-width="1"/>
</g>
<g transform="translate(430.5,799.8)">
<g fill="#33c733" stroke="#000" stroke-width="0.9">
<rect x="0.45" y="5.85" width="8.2" height="8.8"/>
<rect x="11.35" y="5.85" width="8.2" height="8.8"/>
<rect x="22.25" y="5.85" width="8.2" height="8.8"/>
<rect x="33.15" y="5.85" width="8.2" height="8.8"/>
<rect x="0.45" y="16.92" width="8.2" height="8.8"/>
<rect x="11.35" y="16.92" width="8.2" height="8.8"/>
<rect x="22.25" y="16.92" width="8.2" height="8.8"/>
<rect x="33.15" y="16.92" width="8.2" height="8.8"/>
<rect x="0.45" y="27.99" width="8.2" height="8.8"/>
<rect x="11.35" y="27.99" width="8.2" height="8.8"/>
<rect x="22.25" y="27.99" width="8.2" height="8.8"/>
<rect x="33.15" y="27.99" width="8.2" height="8.8"/>
<rect x="0.45" y="39.06" width="8.2" height="8.8"/>
<rect x="11.35" y="39.06" width="8.2" height="8.8"/>
<rect x="22.25" y="39.06" width="8.2" height="8.8"/>
<rect x="33.15" y="39.06" width="8.2" height="8.8"/>
<rect x="0.45" y="50.13" width="8.2" height="8.8"/>
<rect x="11.35" y="50.13" width="8.2" height="8.8"/>
<rect x="22.25" y="50.13" width="8.2" height="8.8"/>
<rect x="33.15" y="50.13" width="8.2" height="8.8"/>
<rect x="0.45" y="61.2" width="8.2" height="8.8"/>
<rect x="11.35" y="61.2" width="8.2" height="8.8"/>
<rect x="22.25" y="61.2" width="8.2" height="8.8"/>
<rect x="33.15" y="61.2" width="8.2" height="8.8"/>
<rect x="0.45" y="72.27" width="8.2" height="8.8"/>
<rect x="11.35" y="72.27" width="8.2" height="8.8"/>
<rect x="22.25" y="72.27" width="8.2" height="8.8"/>
<rect x="33.15" y="72.27" width="8.2" height="8.8"/>
<rect x="0.45" y="83.34" width="8.2" height="8.8"/>
<rect x="11.35" y="83.34" width="8.2" height="8.8"/>
<rect x="22.25" y="83.34" width="8.2" height="8.8"/>
<rect x="33.15" y="83.34" width="8.2" height="8.8"/>
</g>
<rect x="0.5" y="96" width="40.8" height="7.1" fill="#74b2de" stroke="#000" stroke-width="1"/>
<rect x="0.5" y="105.6" width="40.8" height="5.8" fill="#f5963f" stroke="#000" stroke-width="1"/>
<rect x="0.5" y="115" width="18.7" height="3.6" fill="#a5500f" stroke="#000" stroke-width="1"/>
<rect x="22.6" y="115" width="18.7" height="3.6" fill="#a5500f" stroke="#000" stroke-width="1"/>
<rect x="0.5" y="120.9" width="40.8" height="7.6" fill="#235a68" stroke="#000" stroke-width="1"/>
</g>
<rect x="372.5" y="963.4" width="50" height="133.3" fill="#404040" stroke="#8a8a8a" stroke-width="1"/>
<rect x="426.3" y="963.4" width="50.7" height="133.3" fill="#404040" stroke="#8a8a8a" stroke-width="1"/>
<g transform="translate(376.1,962.9)">
<g fill="#33c733" stroke="#000" stroke-width="0.9">
<rect x="0.45" y="5.85" width="8.2" height="8.8"/>
<rect x="11.35" y="5.85" width="8.2" height="8.8"/>
<rect x="22.25" y="5.85" width="8.2" height="8.8"/>
<rect x="33.15" y="5.85" width="8.2" height="8.8"/>
<rect x="0.45" y="16.92" width="8.2" height="8.8"/>
<rect x="11.35" y="16.92" width="8.2" height="8.8"/>
<rect x="22.25" y="16.92" width="8.2" height="8.8"/>
<rect x="33.15" y="16.92" width="8.2" height="8.8"/>
<rect x="0.45" y="27.99" width="8.2" height="8.8"/>
<rect x="11.35" y="27.99" width="8.2" height="8.8"/>
<rect x="22.25" y="27.99" width="8.2" height="8.8"/>
<rect x="33.15" y="27.99" width="8.2" height="8.8"/>
<rect x="0.45" y="39.06" width="8.2" height="8.8"/>
<rect x="11.35" y="39.06" width="8.2" height="8.8"/>
<rect x="22.25" y="39.06" width="8.2" height="8.8"/>
<rect x="33.15" y="39.06" width="8.2" height="8.8"/>
<rect x="0.45" y="50.13" width="8.2" height="8.8"/>
<rect x="11.35" y="50.13" width="8.2" height="8.8"/>
<rect x="22.25" y="50.13" width="8.2" height="8.8"/>
<rect x="33.15" y="50.13" width="8.2" height="8.8"/>
<rect x="0.45" y="61.2" width="8.2" height="8.8"/>
<rect x="11.35" y="61.2" width="8.2" height="8.8"/>
<rect x="22.25" y="61.2" width="8.2" height="8.8"/>
<rect x="33.15" y="61.2" width="8.2" height="8.8"/>
<rect x="0.45" y="72.27" width="8.2" height="8.8"/>
<rect x="11.35" y="72.27" width="8.2" height="8.8"/>
<rect x="22.25" y="72.27" width="8.2" height="8.8"/>
<rect x="33.15" y="72.27" width="8.2" height="8.8"/>
<rect x="0.45" y="83.34" width="8.2" height="8.8"/>
<rect x="11.35" y="83.34" width="8.2" height="8.8"/>
<rect x="22.25" y="83.34" width="8.2" height="8.8"/>
<rect x="33.15" y="83.34" width="8.2" height="8.8"/>
</g>
<rect x="0.5" y="96" width="40.8" height="7.1" fill="#74b2de" stroke="#000" stroke-width="1"/>
<rect x="0.5" y="105.6" width="40.8" height="5.8" fill="#f5963f" stroke="#000" stroke-width="1"/>
<rect x="0.5" y="115" width="18.7" height="3.6" fill="#a5500f" stroke="#000" stroke-width="1"/>
<rect x="22.6" y="115" width="18.7" height="3.6" fill="#a5500f" stroke="#000" stroke-width="1"/>
<rect x="0.5" y="120.9" width="40.8" height="7.6" fill="#235a68" stroke="#000" stroke-width="1"/>
</g>
<g transform="translate(430.5,962.9)">
<g fill="#33c733" stroke="#000" stroke-width="0.9">
<rect x="0.45" y="5.85" width="8.2" height="8.8"/>
<rect x="11.35" y="5.85" width="8.2" height="8.8"/>
<rect x="22.25" y="5.85" width="8.2" height="8.8"/>
<rect x="33.15" y="5.85" width="8.2" height="8.8"/>
<rect x="0.45" y="16.92" width="8.2" height="8.8"/>
<rect x="11.35" y="16.92" width="8.2" height="8.8"/>
<rect x="22.25" y="16.92" width="8.2" height="8.8"/>
<rect x="33.15" y="16.92" width="8.2" height="8.8"/>
<rect x="0.45" y="27.99" width="8.2" height="8.8"/>
<rect x="11.35" y="27.99" width="8.2" height="8.8"/>
<rect x="22.25" y="27.99" width="8.2" height="8.8"/>
<rect x="33.15" y="27.99" width="8.2" height="8.8"/>
<rect x="0.45" y="39.06" width="8.2" height="8.8"/>
<rect x="11.35" y="39.06" width="8.2" height="8.8"/>
<rect x="22.25" y="39.06" width="8.2" height="8.8"/>
<rect x="33.15" y="39.06" width="8.2" height="8.8"/>
<rect x="0.45" y="50.13" width="8.2" height="8.8"/>
<rect x="11.35" y="50.13" width="8.2" height="8.8"/>
<rect x="22.25" y="50.13" width="8.2" height="8.8"/>
<rect x="33.15" y="50.13" width="8.2" height="8.8"/>
<rect x="0.45" y="61.2" width="8.2" height="8.8"/>
<rect x="11.35" y="61.2" width="8.2" height="8.8"/>
<rect x="22.25" y="61.2" width="8.2" height="8.8"/>
<rect x="33.15" y="61.2" width="8.2" height="8.8"/>
<rect x="0.45" y="72.27" width="8.2" height="8.8"/>
<rect x="11.35" y="72.27" width="8.2" height="8.8"/>
<rect x="22.25" y="72.27" width="8.2" height="8.8"/>
<rect x="33.15" y="72.27" width="8.2" height="8.8"/>
<rect x="0.45" y="83.34" width="8.2" height="8.8"/>
<rect x="11.35" y="83.34" width="8.2" height="8.8"/>
<rect x="22.25" y="83.34" width="8.2" height="8.8"/>
<rect x="33.15" y="83.34" width="8.2" height="8.8"/>
</g>
<rect x="0.5" y="96" width="40.8" height="7.1" fill="#74b2de" stroke="#000" stroke-width="1"/>
<rect x="0.5" y="105.6" width="40.8" height="5.8" fill="#f5963f" stroke="#000" stroke-width="1"/>
<rect x="0.5" y="115" width="18.7" height="3.6" fill="#a5500f" stroke="#000" stroke-width="1"/>
<rect x="22.6" y="115" width="18.7" height="3.6" fill="#a5500f" stroke="#000" stroke-width="1"/>
<rect x="0.5" y="120.9" width="40.8" height="7.6" fill="#235a68" stroke="#000" stroke-width="1"/>
</g>
<rect x="371.8" y="937.8" width="24.5" height="9.5" fill="#2955a6" stroke="#000" stroke-width="1"/>
<rect x="398.5" y="937.8" width="24.5" height="9.5" fill="#2955a6" stroke="#000" stroke-width="1"/>
<rect x="425.2" y="937.8" width="24.5" height="9.5" fill="#2955a6" stroke="#000" stroke-width="1"/>
<rect x="451.9" y="937.8" width="24.5" height="9.5" fill="#2955a6" stroke="#000" stroke-width="1"/>
<rect x="371.8" y="951" width="104.6" height="8.2" fill="#74b2de" stroke="#000" stroke-width="1"/>
<rect x="372.4" y="1100.6" width="105" height="8.8" fill="#74b2de" stroke="#000" stroke-width="1"/>
<text x="370.7" y="1123.4" font-size="11.5" fill="#fff" stroke="#fff" stroke-width="0.25">SM</text>
<rect x="365.95" y="1132.75" width="119.1" height="14.4" fill="#f1f96b" stroke="#000" stroke-width="1.1"/>
<text x="425.2" y="1142.9" font-size="10.6" fill="#111" text-anchor="middle" stroke="#111" stroke-width="0.25">PolyMorph Engine</text>
<text x="367.4" y="1160" font-size="11.7" fill="#fff" font-weight="normal" stroke="#fff" stroke-width="0.45">TPC</text>
<polygon fill="#dcdcdc" points="418.9,1164.3 428.79,1169.7 422.3,1169.7 422.3,1175.8 415.5,1175.8 415.5,1169.7 409.01,1169.7"/>
<polygon fill="#dcdcdc" points="431.88,1164.5 438.68,1164.5 438.68,1170.39 444.96,1170.39 435.28,1176.2 425.7,1170.39 431.88,1170.39"/>
<rect x="495.5" y="754.6" width="126" height="410" fill="#404040" stroke="#8a8a8a" stroke-width="1"/>
<rect x="498.5" y="758.6" width="120" height="368.8" fill="#404040" stroke="#8a8a8a" stroke-width="1"/>
<rect x="505.2" y="764.5" width="105" height="8.8" fill="#74b2de" stroke="#000" stroke-width="1"/>
<rect x="505.2" y="776.6" width="24.5" height="8.9" fill="#2955a6" stroke="#000" stroke-width="1"/>
<rect x="532.03" y="776.6" width="24.5" height="8.9" fill="#2955a6" stroke="#000" stroke-width="1"/>
<rect x="558.87" y="776.6" width="24.5" height="8.9" fill="#2955a6" stroke="#000" stroke-width="1"/>
<rect x="585.7" y="776.6" width="24.5" height="8.9" fill="#2955a6" stroke="#000" stroke-width="1"/>
<rect x="505.2" y="788.8" width="105" height="8.7" fill="#74b2de" stroke="#000" stroke-width="1"/>
<rect x="505.3" y="800.3" width="50" height="133.3" fill="#404040" stroke="#8a8a8a" stroke-width="1"/>
<rect x="559.1" y="800.3" width="50.7" height="133.3" fill="#404040" stroke="#8a8a8a" stroke-width="1"/>
<g transform="translate(508.9,799.8)">
<g fill="#33c733" stroke="#000" stroke-width="0.9">
<rect x="0.45" y="5.85" width="8.2" height="8.8"/>
<rect x="11.35" y="5.85" width="8.2" height="8.8"/>
<rect x="22.25" y="5.85" width="8.2" height="8.8"/>
<rect x="33.15" y="5.85" width="8.2" height="8.8"/>
<rect x="0.45" y="16.92" width="8.2" height="8.8"/>
<rect x="11.35" y="16.92" width="8.2" height="8.8"/>
<rect x="22.25" y="16.92" width="8.2" height="8.8"/>
<rect x="33.15" y="16.92" width="8.2" height="8.8"/>
<rect x="0.45" y="27.99" width="8.2" height="8.8"/>
<rect x="11.35" y="27.99" width="8.2" height="8.8"/>
<rect x="22.25" y="27.99" width="8.2" height="8.8"/>
<rect x="33.15" y="27.99" width="8.2" height="8.8"/>
<rect x="0.45" y="39.06" width="8.2" height="8.8"/>
<rect x="11.35" y="39.06" width="8.2" height="8.8"/>
<rect x="22.25" y="39.06" width="8.2" height="8.8"/>
<rect x="33.15" y="39.06" width="8.2" height="8.8"/>
<rect x="0.45" y="50.13" width="8.2" height="8.8"/>
<rect x="11.35" y="50.13" width="8.2" height="8.8"/>
<rect x="22.25" y="50.13" width="8.2" height="8.8"/>
<rect x="33.15" y="50.13" width="8.2" height="8.8"/>
<rect x="0.45" y="61.2" width="8.2" height="8.8"/>
<rect x="11.35" y="61.2" width="8.2" height="8.8"/>
<rect x="22.25" y="61.2" width="8.2" height="8.8"/>
<rect x="33.15" y="61.2" width="8.2" height="8.8"/>
<rect x="0.45" y="72.27" width="8.2" height="8.8"/>
<rect x="11.35" y="72.27" width="8.2" height="8.8"/>
<rect x="22.25" y="72.27" width="8.2" height="8.8"/>
<rect x="33.15" y="72.27" width="8.2" height="8.8"/>
<rect x="0.45" y="83.34" width="8.2" height="8.8"/>
<rect x="11.35" y="83.34" width="8.2" height="8.8"/>
<rect x="22.25" y="83.34" width="8.2" height="8.8"/>
<rect x="33.15" y="83.34" width="8.2" height="8.8"/>
</g>
<rect x="0.5" y="96" width="40.8" height="7.1" fill="#74b2de" stroke="#000" stroke-width="1"/>
<rect x="0.5" y="105.6" width="40.8" height="5.8" fill="#f5963f" stroke="#000" stroke-width="1"/>
<rect x="0.5" y="115" width="18.7" height="3.6" fill="#a5500f" stroke="#000" stroke-width="1"/>
<rect x="22.6" y="115" width="18.7" height="3.6" fill="#a5500f" stroke="#000" stroke-width="1"/>
<rect x="0.5" y="120.9" width="40.8" height="7.6" fill="#235a68" stroke="#000" stroke-width="1"/>
</g>
<g transform="translate(563.3,799.8)">
<g fill="#33c733" stroke="#000" stroke-width="0.9">
<rect x="0.45" y="5.85" width="8.2" height="8.8"/>
<rect x="11.35" y="5.85" width="8.2" height="8.8"/>
<rect x="22.25" y="5.85" width="8.2" height="8.8"/>
<rect x="33.15" y="5.85" width="8.2" height="8.8"/>
<rect x="0.45" y="16.92" width="8.2" height="8.8"/>
<rect x="11.35" y="16.92" width="8.2" height="8.8"/>
<rect x="22.25" y="16.92" width="8.2" height="8.8"/>
<rect x="33.15" y="16.92" width="8.2" height="8.8"/>
<rect x="0.45" y="27.99" width="8.2" height="8.8"/>
<rect x="11.35" y="27.99" width="8.2" height="8.8"/>
<rect x="22.25" y="27.99" width="8.2" height="8.8"/>
<rect x="33.15" y="27.99" width="8.2" height="8.8"/>
<rect x="0.45" y="39.06" width="8.2" height="8.8"/>
<rect x="11.35" y="39.06" width="8.2" height="8.8"/>
<rect x="22.25" y="39.06" width="8.2" height="8.8"/>
<rect x="33.15" y="39.06" width="8.2" height="8.8"/>
<rect x="0.45" y="50.13" width="8.2" height="8.8"/>
<rect x="11.35" y="50.13" width="8.2" height="8.8"/>
<rect x="22.25" y="50.13" width="8.2" height="8.8"/>
<rect x="33.15" y="50.13" width="8.2" height="8.8"/>
<rect x="0.45" y="61.2" width="8.2" height="8.8"/>
<rect x="11.35" y="61.2" width="8.2" height="8.8"/>
<rect x="22.25" y="61.2" width="8.2" height="8.8"/>
<rect x="33.15" y="61.2" width="8.2" height="8.8"/>
<rect x="0.45" y="72.27" width="8.2" height="8.8"/>
<rect x="11.35" y="72.27" width="8.2" height="8.8"/>
<rect x="22.25" y="72.27" width="8.2" height="8.8"/>
<rect x="33.15" y="72.27" width="8.2" height="8.8"/>
<rect x="0.45" y="83.34" width="8.2" height="8.8"/>
<rect x="11.35" y="83.34" width="8.2" height="8.8"/>
<rect x="22.25" y="83.34" width="8.2" height="8.8"/>
<rect x="33.15" y="83.34" width="8.2" height="8.8"/>
</g>
<rect x="0.5" y="96" width="40.8" height="7.1" fill="#74b2de" stroke="#000" stroke-width="1"/>
<rect x="0.5" y="105.6" width="40.8" height="5.8" fill="#f5963f" stroke="#000" stroke-width="1"/>
<rect x="0.5" y="115" width="18.7" height="3.6" fill="#a5500f" stroke="#000" stroke-width="1"/>
<rect x="22.6" y="115" width="18.7" height="3.6" fill="#a5500f" stroke="#000" stroke-width="1"/>
<rect x="0.5" y="120.9" width="40.8" height="7.6" fill="#235a68" stroke="#000" stroke-width="1"/>
</g>
<rect x="505.3" y="963.4" width="50" height="133.3" fill="#404040" stroke="#8a8a8a" stroke-width="1"/>
<rect x="559.1" y="963.4" width="50.7" height="133.3" fill="#404040" stroke="#8a8a8a" stroke-width="1"/>
<g transform="translate(508.9,962.9)">
<g fill="#33c733" stroke="#000" stroke-width="0.9">
<rect x="0.45" y="5.85" width="8.2" height="8.8"/>
<rect x="11.35" y="5.85" width="8.2" height="8.8"/>
<rect x="22.25" y="5.85" width="8.2" height="8.8"/>
<rect x="33.15" y="5.85" width="8.2" height="8.8"/>
<rect x="0.45" y="16.92" width="8.2" height="8.8"/>
<rect x="11.35" y="16.92" width="8.2" height="8.8"/>
<rect x="22.25" y="16.92" width="8.2" height="8.8"/>
<rect x="33.15" y="16.92" width="8.2" height="8.8"/>
<rect x="0.45" y="27.99" width="8.2" height="8.8"/>
<rect x="11.35" y="27.99" width="8.2" height="8.8"/>
<rect x="22.25" y="27.99" width="8.2" height="8.8"/>
<rect x="33.15" y="27.99" width="8.2" height="8.8"/>
<rect x="0.45" y="39.06" width="8.2" height="8.8"/>
<rect x="11.35" y="39.06" width="8.2" height="8.8"/>
<rect x="22.25" y="39.06" width="8.2" height="8.8"/>
<rect x="33.15" y="39.06" width="8.2" height="8.8"/>
<rect x="0.45" y="50.13" width="8.2" height="8.8"/>
<rect x="11.35" y="50.13" width="8.2" height="8.8"/>
<rect x="22.25" y="50.13" width="8.2" height="8.8"/>
<rect x="33.15" y="50.13" width="8.2" height="8.8"/>
<rect x="0.45" y="61.2" width="8.2" height="8.8"/>
<rect x="11.35" y="61.2" width="8.2" height="8.8"/>
<rect x="22.25" y="61.2" width="8.2" height="8.8"/>
<rect x="33.15" y="61.2" width="8.2" height="8.8"/>
<rect x="0.45" y="72.27" width="8.2" height="8.8"/>
<rect x="11.35" y="72.27" width="8.2" height="8.8"/>
<rect x="22.25" y="72.27" width="8.2" height="8.8"/>
<rect x="33.15" y="72.27" width="8.2" height="8.8"/>
<rect x="0.45" y="83.34" width="8.2" height="8.8"/>
<rect x="11.35" y="83.34" width="8.2" height="8.8"/>
<rect x="22.25" y="83.34" width="8.2" height="8.8"/>
<rect x="33.15" y="83.34" width="8.2" height="8.8"/>
</g>
<rect x="0.5" y="96" width="40.8" height="7.1" fill="#74b2de" stroke="#000" stroke-width="1"/>
<rect x="0.5" y="105.6" width="40.8" height="5.8" fill="#f5963f" stroke="#000" stroke-width="1"/>
<rect x="0.5" y="115" width="18.7" height="3.6" fill="#a5500f" stroke="#000" stroke-width="1"/>
<rect x="22.6" y="115" width="18.7" height="3.6" fill="#a5500f" stroke="#000" stroke-width="1"/>
<rect x="0.5" y="120.9" width="40.8" height="7.6" fill="#235a68" stroke="#000" stroke-width="1"/>
</g>
<g transform="translate(563.3,962.9)">
<g fill="#33c733" stroke="#000" stroke-width="0.9">
<rect x="0.45" y="5.85" width="8.2" height="8.8"/>
<rect x="11.35" y="5.85" width="8.2" height="8.8"/>
<rect x="22.25" y="5.85" width="8.2" height="8.8"/>
<rect x="33.15" y="5.85" width="8.2" height="8.8"/>
<rect x="0.45" y="16.92" width="8.2" height="8.8"/>
<rect x="11.35" y="16.92" width="8.2" height="8.8"/>
<rect x="22.25" y="16.92" width="8.2" height="8.8"/>
<rect x="33.15" y="16.92" width="8.2" height="8.8"/>
<rect x="0.45" y="27.99" width="8.2" height="8.8"/>
<rect x="11.35" y="27.99" width="8.2" height="8.8"/>
<rect x="22.25" y="27.99" width="8.2" height="8.8"/>
<rect x="33.15" y="27.99" width="8.2" height="8.8"/>
<rect x="0.45" y="39.06" width="8.2" height="8.8"/>
<rect x="11.35" y="39.06" width="8.2" height="8.8"/>
<rect x="22.25" y="39.06" width="8.2" height="8.8"/>
<rect x="33.15" y="39.06" width="8.2" height="8.8"/>
<rect x="0.45" y="50.13" width="8.2" height="8.8"/>
<rect x="11.35" y="50.13" width="8.2" height="8.8"/>
<rect x="22.25" y="50.13" width="8.2" height="8.8"/>
<rect x="33.15" y="50.13" width="8.2" height="8.8"/>
<rect x="0.45" y="61.2" width="8.2" height="8.8"/>
<rect x="11.35" y="61.2" width="8.2" height="8.8"/>
<rect x="22.25" y="61.2" width="8.2" height="8.8"/>
<rect x="33.15" y="61.2" width="8.2" height="8.8"/>
<rect x="0.45" y="72.27" width="8.2" height="8.8"/>
<rect x="11.35" y="72.27" width="8.2" height="8.8"/>
<rect x="22.25" y="72.27" width="8.2" height="8.8"/>
<rect x="33.15" y="72.27" width="8.2" height="8.8"/>
<rect x="0.45" y="83.34" width="8.2" height="8.8"/>
<rect x="11.35" y="83.34" width="8.2" height="8.8"/>
<rect x="22.25" y="83.34" width="8.2" height="8.8"/>
<rect x="33.15" y="83.34" width="8.2" height="8.8"/>
</g>
<rect x="0.5" y="96" width="40.8" height="7.1" fill="#74b2de" stroke="#000" stroke-width="1"/>
<rect x="0.5" y="105.6" width="40.8" height="5.8" fill="#f5963f" stroke="#000" stroke-width="1"/>
<rect x="0.5" y="115" width="18.7" height="3.6" fill="#a5500f" stroke="#000" stroke-width="1"/>
<rect x="22.6" y="115" width="18.7" height="3.6" fill="#a5500f" stroke="#000" stroke-width="1"/>
<rect x="0.5" y="120.9" width="40.8" height="7.6" fill="#235a68" stroke="#000" stroke-width="1"/>
</g>
<rect x="504.6" y="937.8" width="24.5" height="9.5" fill="#2955a6" stroke="#000" stroke-width="1"/>
<rect x="531.3" y="937.8" width="24.5" height="9.5" fill="#2955a6" stroke="#000" stroke-width="1"/>
<rect x="558" y="937.8" width="24.5" height="9.5" fill="#2955a6" stroke="#000" stroke-width="1"/>
<rect x="584.7" y="937.8" width="24.5" height="9.5" fill="#2955a6" stroke="#000" stroke-width="1"/>
<rect x="504.6" y="951" width="104.6" height="8.2" fill="#74b2de" stroke="#000" stroke-width="1"/>
<rect x="505.2" y="1100.6" width="105" height="8.8" fill="#74b2de" stroke="#000" stroke-width="1"/>
<text x="503.5" y="1123.4" font-size="11.5" fill="#fff" stroke="#fff" stroke-width="0.25">SM</text>
<rect x="498.75" y="1132.75" width="119.1" height="14.4" fill="#f1f96b" stroke="#000" stroke-width="1.1"/>
<text x="558" y="1142.9" font-size="10.6" fill="#111" text-anchor="middle" stroke="#111" stroke-width="0.25">PolyMorph Engine</text>
<text x="500.2" y="1160" font-size="11.7" fill="#fff" font-weight="normal" stroke="#fff" stroke-width="0.45">TPC</text>
<polygon fill="#dcdcdc" points="551.7,1164.3 561.59,1169.7 555.1,1169.7 555.1,1175.8 548.3,1175.8 548.3,1169.7 541.81,1169.7"/>
<polygon fill="#dcdcdc" points="564.68,1164.5 571.48,1164.5 571.48,1170.39 577.76,1170.39 568.08,1176.2 558.5,1170.39 564.68,1170.39"/>
<rect x="627.7" y="754.6" width="126" height="410" fill="#404040" stroke="#8a8a8a" stroke-width="1"/>
<rect x="630.7" y="758.6" width="120" height="368.8" fill="#404040" stroke="#8a8a8a" stroke-width="1"/>
<rect x="637.4" y="764.5" width="105" height="8.8" fill="#74b2de" stroke="#000" stroke-width="1"/>
<rect x="637.4" y="776.6" width="24.5" height="8.9" fill="#2955a6" stroke="#000" stroke-width="1"/>
<rect x="664.23" y="776.6" width="24.5" height="8.9" fill="#2955a6" stroke="#000" stroke-width="1"/>
<rect x="691.07" y="776.6" width="24.5" height="8.9" fill="#2955a6" stroke="#000" stroke-width="1"/>
<rect x="717.9" y="776.6" width="24.5" height="8.9" fill="#2955a6" stroke="#000" stroke-width="1"/>
<rect x="637.4" y="788.8" width="105" height="8.7" fill="#74b2de" stroke="#000" stroke-width="1"/>
<rect x="637.5" y="800.3" width="50" height="133.3" fill="#404040" stroke="#8a8a8a" stroke-width="1"/>
<rect x="691.3" y="800.3" width="50.7" height="133.3" fill="#404040" stroke="#8a8a8a" stroke-width="1"/>
<g transform="translate(641.1,799.8)">
<g fill="#33c733" stroke="#000" stroke-width="0.9">
<rect x="0.45" y="5.85" width="8.2" height="8.8"/>
<rect x="11.35" y="5.85" width="8.2" height="8.8"/>
<rect x="22.25" y="5.85" width="8.2" height="8.8"/>
<rect x="33.15" y="5.85" width="8.2" height="8.8"/>
<rect x="0.45" y="16.92" width="8.2" height="8.8"/>
<rect x="11.35" y="16.92" width="8.2" height="8.8"/>
<rect x="22.25" y="16.92" width="8.2" height="8.8"/>
<rect x="33.15" y="16.92" width="8.2" height="8.8"/>
<rect x="0.45" y="27.99" width="8.2" height="8.8"/>
<rect x="11.35" y="27.99" width="8.2" height="8.8"/>
<rect x="22.25" y="27.99" width="8.2" height="8.8"/>
<rect x="33.15" y="27.99" width="8.2" height="8.8"/>
<rect x="0.45" y="39.06" width="8.2" height="8.8"/>
<rect x="11.35" y="39.06" width="8.2" height="8.8"/>
<rect x="22.25" y="39.06" width="8.2" height="8.8"/>
<rect x="33.15" y="39.06" width="8.2" height="8.8"/>
<rect x="0.45" y="50.13" width="8.2" height="8.8"/>
<rect x="11.35" y="50.13" width="8.2" height="8.8"/>
<rect x="22.25" y="50.13" width="8.2" height="8.8"/>
<rect x="33.15" y="50.13" width="8.2" height="8.8"/>
<rect x="0.45" y="61.2" width="8.2" height="8.8"/>
<rect x="11.35" y="61.2" width="8.2" height="8.8"/>
<rect x="22.25" y="61.2" width="8.2" height="8.8"/>
<rect x="33.15" y="61.2" width="8.2" height="8.8"/>
<rect x="0.45" y="72.27" width="8.2" height="8.8"/>
<rect x="11.35" y="72.27" width="8.2" height="8.8"/>
<rect x="22.25" y="72.27" width="8.2" height="8.8"/>
<rect x="33.15" y="72.27" width="8.2" height="8.8"/>
<rect x="0.45" y="83.34" width="8.2" height="8.8"/>
<rect x="11.35" y="83.34" width="8.2" height="8.8"/>
<rect x="22.25" y="83.34" width="8.2" height="8.8"/>
<rect x="33.15" y="83.34" width="8.2" height="8.8"/>
</g>
<rect x="0.5" y="96" width="40.8" height="7.1" fill="#74b2de" stroke="#000" stroke-width="1"/>
<rect x="0.5" y="105.6" width="40.8" height="5.8" fill="#f5963f" stroke="#000" stroke-width="1"/>
<rect x="0.5" y="115" width="18.7" height="3.6" fill="#a5500f" stroke="#000" stroke-width="1"/>
<rect x="22.6" y="115" width="18.7" height="3.6" fill="#a5500f" stroke="#000" stroke-width="1"/>
<rect x="0.5" y="120.9" width="40.8" height="7.6" fill="#235a68" stroke="#000" stroke-width="1"/>
</g>
<g transform="translate(695.5,799.8)">
<g fill="#33c733" stroke="#000" stroke-width="0.9">
<rect x="0.45" y="5.85" width="8.2" height="8.8"/>
<rect x="11.35" y="5.85" width="8.2" height="8.8"/>
<rect x="22.25" y="5.85" width="8.2" height="8.8"/>
<rect x="33.15" y="5.85" width="8.2" height="8.8"/>
<rect x="0.45" y="16.92" width="8.2" height="8.8"/>
<rect x="11.35" y="16.92" width="8.2" height="8.8"/>
<rect x="22.25" y="16.92" width="8.2" height="8.8"/>
<rect x="33.15" y="16.92" width="8.2" height="8.8"/>
<rect x="0.45" y="27.99" width="8.2" height="8.8"/>
<rect x="11.35" y="27.99" width="8.2" height="8.8"/>
<rect x="22.25" y="27.99" width="8.2" height="8.8"/>
<rect x="33.15" y="27.99" width="8.2" height="8.8"/>
<rect x="0.45" y="39.06" width="8.2" height="8.8"/>
<rect x="11.35" y="39.06" width="8.2" height="8.8"/>
<rect x="22.25" y="39.06" width="8.2" height="8.8"/>
<rect x="33.15" y="39.06" width="8.2" height="8.8"/>
<rect x="0.45" y="50.13" width="8.2" height="8.8"/>
<rect x="11.35" y="50.13" width="8.2" height="8.8"/>
<rect x="22.25" y="50.13" width="8.2" height="8.8"/>
<rect x="33.15" y="50.13" width="8.2" height="8.8"/>
<rect x="0.45" y="61.2" width="8.2" height="8.8"/>
<rect x="11.35" y="61.2" width="8.2" height="8.8"/>
<rect x="22.25" y="61.2" width="8.2" height="8.8"/>
<rect x="33.15" y="61.2" width="8.2" height="8.8"/>
<rect x="0.45" y="72.27" width="8.2" height="8.8"/>
<rect x="11.35" y="72.27" width="8.2" height="8.8"/>
<rect x="22.25" y="72.27" width="8.2" height="8.8"/>
<rect x="33.15" y="72.27" width="8.2" height="8.8"/>
<rect x="0.45" y="83.34" width="8.2" height="8.8"/>
<rect x="11.35" y="83.34" width="8.2" height="8.8"/>
<rect x="22.25" y="83.34" width="8.2" height="8.8"/>
<rect x="33.15" y="83.34" width="8.2" height="8.8"/>
</g>
<rect x="0.5" y="96" width="40.8" height="7.1" fill="#74b2de" stroke="#000" stroke-width="1"/>
<rect x="0.5" y="105.6" width="40.8" height="5.8" fill="#f5963f" stroke="#000" stroke-width="1"/>
<rect x="0.5" y="115" width="18.7" height="3.6" fill="#a5500f" stroke="#000" stroke-width="1"/>
<rect x="22.6" y="115" width="18.7" height="3.6" fill="#a5500f" stroke="#000" stroke-width="1"/>
<rect x="0.5" y="120.9" width="40.8" height="7.6" fill="#235a68" stroke="#000" stroke-width="1"/>
</g>
<rect x="637.5" y="963.4" width="50" height="133.3" fill="#404040" stroke="#8a8a8a" stroke-width="1"/>
<rect x="691.3" y="963.4" width="50.7" height="133.3" fill="#404040" stroke="#8a8a8a" stroke-width="1"/>
<g transform="translate(641.1,962.9)">
<g fill="#33c733" stroke="#000" stroke-width="0.9">
<rect x="0.45" y="5.85" width="8.2" height="8.8"/>
<rect x="11.35" y="5.85" width="8.2" height="8.8"/>
<rect x="22.25" y="5.85" width="8.2" height="8.8"/>
<rect x="33.15" y="5.85" width="8.2" height="8.8"/>
<rect x="0.45" y="16.92" width="8.2" height="8.8"/>
<rect x="11.35" y="16.92" width="8.2" height="8.8"/>
<rect x="22.25" y="16.92" width="8.2" height="8.8"/>
<rect x="33.15" y="16.92" width="8.2" height="8.8"/>
<rect x="0.45" y="27.99" width="8.2" height="8.8"/>
<rect x="11.35" y="27.99" width="8.2" height="8.8"/>
<rect x="22.25" y="27.99" width="8.2" height="8.8"/>
<rect x="33.15" y="27.99" width="8.2" height="8.8"/>
<rect x="0.45" y="39.06" width="8.2" height="8.8"/>
<rect x="11.35" y="39.06" width="8.2" height="8.8"/>
<rect x="22.25" y="39.06" width="8.2" height="8.8"/>
<rect x="33.15" y="39.06" width="8.2" height="8.8"/>
<rect x="0.45" y="50.13" width="8.2" height="8.8"/>
<rect x="11.35" y="50.13" width="8.2" height="8.8"/>
<rect x="22.25" y="50.13" width="8.2" height="8.8"/>
<rect x="33.15" y="50.13" width="8.2" height="8.8"/>
<rect x="0.45" y="61.2" width="8.2" height="8.8"/>
<rect x="11.35" y="61.2" width="8.2" height="8.8"/>
<rect x="22.25" y="61.2" width="8.2" height="8.8"/>
<rect x="33.15" y="61.2" width="8.2" height="8.8"/>
<rect x="0.45" y="72.27" width="8.2" height="8.8"/>
<rect x="11.35" y="72.27" width="8.2" height="8.8"/>
<rect x="22.25" y="72.27" width="8.2" height="8.8"/>
<rect x="33.15" y="72.27" width="8.2" height="8.8"/>
<rect x="0.45" y="83.34" width="8.2" height="8.8"/>
<rect x="11.35" y="83.34" width="8.2" height="8.8"/>
<rect x="22.25" y="83.34" width="8.2" height="8.8"/>
<rect x="33.15" y="83.34" width="8.2" height="8.8"/>
</g>
<rect x="0.5" y="96" width="40.8" height="7.1" fill="#74b2de" stroke="#000" stroke-width="1"/>
<rect x="0.5" y="105.6" width="40.8" height="5.8" fill="#f5963f" stroke="#000" stroke-width="1"/>
<rect x="0.5" y="115" width="18.7" height="3.6" fill="#a5500f" stroke="#000" stroke-width="1"/>
<rect x="22.6" y="115" width="18.7" height="3.6" fill="#a5500f" stroke="#000" stroke-width="1"/>
<rect x="0.5" y="120.9" width="40.8" height="7.6" fill="#235a68" stroke="#000" stroke-width="1"/>
</g>
<g transform="translate(695.5,962.9)">
<g fill="#33c733" stroke="#000" stroke-width="0.9">
<rect x="0.45" y="5.85" width="8.2" height="8.8"/>
<rect x="11.35" y="5.85" width="8.2" height="8.8"/>
<rect x="22.25" y="5.85" width="8.2" height="8.8"/>
<rect x="33.15" y="5.85" width="8.2" height="8.8"/>
<rect x="0.45" y="16.92" width="8.2" height="8.8"/>
<rect x="11.35" y="16.92" width="8.2" height="8.8"/>
<rect x="22.25" y="16.92" width="8.2" height="8.8"/>
<rect x="33.15" y="16.92" width="8.2" height="8.8"/>
<rect x="0.45" y="27.99" width="8.2" height="8.8"/>
<rect x="11.35" y="27.99" width="8.2" height="8.8"/>
<rect x="22.25" y="27.99" width="8.2" height="8.8"/>
<rect x="33.15" y="27.99" width="8.2" height="8.8"/>
<rect x="0.45" y="39.06" width="8.2" height="8.8"/>
<rect x="11.35" y="39.06" width="8.2" height="8.8"/>
<rect x="22.25" y="39.06" width="8.2" height="8.8"/>
<rect x="33.15" y="39.06" width="8.2" height="8.8"/>
<rect x="0.45" y="50.13" width="8.2" height="8.8"/>
<rect x="11.35" y="50.13" width="8.2" height="8.8"/>
<rect x="22.25" y="50.13" width="8.2" height="8.8"/>
<rect x="33.15" y="50.13" width="8.2" height="8.8"/>
<rect x="0.45" y="61.2" width="8.2" height="8.8"/>
<rect x="11.35" y="61.2" width="8.2" height="8.8"/>
<rect x="22.25" y="61.2" width="8.2" height="8.8"/>
<rect x="33.15" y="61.2" width="8.2" height="8.8"/>
<rect x="0.45" y="72.27" width="8.2" height="8.8"/>
<rect x="11.35" y="72.27" width="8.2" height="8.8"/>
<rect x="22.25" y="72.27" width="8.2" height="8.8"/>
<rect x="33.15" y="72.27" width="8.2" height="8.8"/>
<rect x="0.45" y="83.34" width="8.2" height="8.8"/>
<rect x="11.35" y="83.34" width="8.2" height="8.8"/>
<rect x="22.25" y="83.34" width="8.2" height="8.8"/>
<rect x="33.15" y="83.34" width="8.2" height="8.8"/>
</g>
<rect x="0.5" y="96" width="40.8" height="7.1" fill="#74b2de" stroke="#000" stroke-width="1"/>
<rect x="0.5" y="105.6" width="40.8" height="5.8" fill="#f5963f" stroke="#000" stroke-width="1"/>
<rect x="0.5" y="115" width="18.7" height="3.6" fill="#a5500f" stroke="#000" stroke-width="1"/>
<rect x="22.6" y="115" width="18.7" height="3.6" fill="#a5500f" stroke="#000" stroke-width="1"/>
<rect x="0.5" y="120.9" width="40.8" height="7.6" fill="#235a68" stroke="#000" stroke-width="1"/>
</g>
<rect x="636.8" y="937.8" width="24.5" height="9.5" fill="#2955a6" stroke="#000" stroke-width="1"/>
<rect x="663.5" y="937.8" width="24.5" height="9.5" fill="#2955a6" stroke="#000" stroke-width="1"/>
<rect x="690.2" y="937.8" width="24.5" height="9.5" fill="#2955a6" stroke="#000" stroke-width="1"/>
<rect x="716.9" y="937.8" width="24.5" height="9.5" fill="#2955a6" stroke="#000" stroke-width="1"/>
<rect x="636.8" y="951" width="104.6" height="8.2" fill="#74b2de" stroke="#000" stroke-width="1"/>
<rect x="637.4" y="1100.6" width="105" height="8.8" fill="#74b2de" stroke="#000" stroke-width="1"/>
<text x="635.7" y="1123.4" font-size="11.5" fill="#fff" stroke="#fff" stroke-width="0.25">SM</text>
<rect x="630.95" y="1132.75" width="119.1" height="14.4" fill="#f1f96b" stroke="#000" stroke-width="1.1"/>
<text x="690.2" y="1142.9" font-size="10.6" fill="#111" text-anchor="middle" stroke="#111" stroke-width="0.25">PolyMorph Engine</text>
<text x="632.4" y="1160" font-size="11.7" fill="#fff" font-weight="normal" stroke="#fff" stroke-width="0.45">TPC</text>
<polygon fill="#dcdcdc" points="683.9,1164.3 693.79,1169.7 687.3,1169.7 687.3,1175.8 680.5,1175.8 680.5,1169.7 674.01,1169.7"/>
<polygon fill="#dcdcdc" points="696.88,1164.5 703.68,1164.5 703.68,1170.39 709.96,1170.39 700.28,1176.2 690.7,1170.39 696.88,1170.39"/>
<rect x="769.55" y="741.85" width="671" height="481.1" fill="#404040" stroke="#dfdfdf" stroke-width="3.1"/>
<text x="777.5" y="1217.5" font-size="15.3" fill="#fff" font-weight="normal" stroke="#fff" stroke-width="0.6">GPC</text>
<rect x="777.3" y="1176.6" width="656.1" height="21.9" fill="#f1f96b"/>
<text x="1105.05" y="1193.8" font-size="15.9" fill="#111" text-anchor="middle" stroke="#111" stroke-width="0.4">Raster Engine</text>
<rect x="776.8" y="754.6" width="126" height="410" fill="#404040" stroke="#8a8a8a" stroke-width="1"/>
<rect x="779.8" y="758.6" width="120" height="368.8" fill="#404040" stroke="#8a8a8a" stroke-width="1"/>
<rect x="786.5" y="764.5" width="105" height="8.8" fill="#74b2de" stroke="#000" stroke-width="1"/>
<rect x="786.5" y="776.6" width="24.5" height="8.9" fill="#2955a6" stroke="#000" stroke-width="1"/>
<rect x="813.33" y="776.6" width="24.5" height="8.9" fill="#2955a6" stroke="#000" stroke-width="1"/>
<rect x="840.17" y="776.6" width="24.5" height="8.9" fill="#2955a6" stroke="#000" stroke-width="1"/>
<rect x="867" y="776.6" width="24.5" height="8.9" fill="#2955a6" stroke="#000" stroke-width="1"/>
<rect x="786.5" y="788.8" width="105" height="8.7" fill="#74b2de" stroke="#000" stroke-width="1"/>
<rect x="786.6" y="800.3" width="50" height="133.3" fill="#404040" stroke="#8a8a8a" stroke-width="1"/>
<rect x="840.4" y="800.3" width="50.7" height="133.3" fill="#404040" stroke="#8a8a8a" stroke-width="1"/>
<g transform="translate(790.2,799.8)">
<g fill="#33c733" stroke="#000" stroke-width="0.9">
<rect x="0.45" y="5.85" width="8.2" height="8.8"/>
<rect x="11.35" y="5.85" width="8.2" height="8.8"/>
<rect x="22.25" y="5.85" width="8.2" height="8.8"/>
<rect x="33.15" y="5.85" width="8.2" height="8.8"/>
<rect x="0.45" y="16.92" width="8.2" height="8.8"/>
<rect x="11.35" y="16.92" width="8.2" height="8.8"/>
<rect x="22.25" y="16.92" width="8.2" height="8.8"/>
<rect x="33.15" y="16.92" width="8.2" height="8.8"/>
<rect x="0.45" y="27.99" width="8.2" height="8.8"/>
<rect x="11.35" y="27.99" width="8.2" height="8.8"/>
<rect x="22.25" y="27.99" width="8.2" height="8.8"/>
<rect x="33.15" y="27.99" width="8.2" height="8.8"/>
<rect x="0.45" y="39.06" width="8.2" height="8.8"/>
<rect x="11.35" y="39.06" width="8.2" height="8.8"/>
<rect x="22.25" y="39.06" width="8.2" height="8.8"/>
<rect x="33.15" y="39.06" width="8.2" height="8.8"/>
<rect x="0.45" y="50.13" width="8.2" height="8.8"/>
<rect x="11.35" y="50.13" width="8.2" height="8.8"/>
<rect x="22.25" y="50.13" width="8.2" height="8.8"/>
<rect x="33.15" y="50.13" width="8.2" height="8.8"/>
<rect x="0.45" y="61.2" width="8.2" height="8.8"/>
<rect x="11.35" y="61.2" width="8.2" height="8.8"/>
<rect x="22.25" y="61.2" width="8.2" height="8.8"/>
<rect x="33.15" y="61.2" width="8.2" height="8.8"/>
<rect x="0.45" y="72.27" width="8.2" height="8.8"/>
<rect x="11.35" y="72.27" width="8.2" height="8.8"/>
<rect x="22.25" y="72.27" width="8.2" height="8.8"/>
<rect x="33.15" y="72.27" width="8.2" height="8.8"/>
<rect x="0.45" y="83.34" width="8.2" height="8.8"/>
<rect x="11.35" y="83.34" width="8.2" height="8.8"/>
<rect x="22.25" y="83.34" width="8.2" height="8.8"/>
<rect x="33.15" y="83.34" width="8.2" height="8.8"/>
</g>
<rect x="0.5" y="96" width="40.8" height="7.1" fill="#74b2de" stroke="#000" stroke-width="1"/>
<rect x="0.5" y="105.6" width="40.8" height="5.8" fill="#f5963f" stroke="#000" stroke-width="1"/>
<rect x="0.5" y="115" width="18.7" height="3.6" fill="#a5500f" stroke="#000" stroke-width="1"/>
<rect x="22.6" y="115" width="18.7" height="3.6" fill="#a5500f" stroke="#000" stroke-width="1"/>
<rect x="0.5" y="120.9" width="40.8" height="7.6" fill="#235a68" stroke="#000" stroke-width="1"/>
</g>
<g transform="translate(844.6,799.8)">
<g fill="#33c733" stroke="#000" stroke-width="0.9">
<rect x="0.45" y="5.85" width="8.2" height="8.8"/>
<rect x="11.35" y="5.85" width="8.2" height="8.8"/>
<rect x="22.25" y="5.85" width="8.2" height="8.8"/>
<rect x="33.15" y="5.85" width="8.2" height="8.8"/>
<rect x="0.45" y="16.92" width="8.2" height="8.8"/>
<rect x="11.35" y="16.92" width="8.2" height="8.8"/>
<rect x="22.25" y="16.92" width="8.2" height="8.8"/>
<rect x="33.15" y="16.92" width="8.2" height="8.8"/>
<rect x="0.45" y="27.99" width="8.2" height="8.8"/>
<rect x="11.35" y="27.99" width="8.2" height="8.8"/>
<rect x="22.25" y="27.99" width="8.2" height="8.8"/>
<rect x="33.15" y="27.99" width="8.2" height="8.8"/>
<rect x="0.45" y="39.06" width="8.2" height="8.8"/>
<rect x="11.35" y="39.06" width="8.2" height="8.8"/>
<rect x="22.25" y="39.06" width="8.2" height="8.8"/>
<rect x="33.15" y="39.06" width="8.2" height="8.8"/>
<rect x="0.45" y="50.13" width="8.2" height="8.8"/>
<rect x="11.35" y="50.13" width="8.2" height="8.8"/>
<rect x="22.25" y="50.13" width="8.2" height="8.8"/>
<rect x="33.15" y="50.13" width="8.2" height="8.8"/>
<rect x="0.45" y="61.2" width="8.2" height="8.8"/>
<rect x="11.35" y="61.2" width="8.2" height="8.8"/>
<rect x="22.25" y="61.2" width="8.2" height="8.8"/>
<rect x="33.15" y="61.2" width="8.2" height="8.8"/>
<rect x="0.45" y="72.27" width="8.2" height="8.8"/>
<rect x="11.35" y="72.27" width="8.2" height="8.8"/>
<rect x="22.25" y="72.27" width="8.2" height="8.8"/>
<rect x="33.15" y="72.27" width="8.2" height="8.8"/>
<rect x="0.45" y="83.34" width="8.2" height="8.8"/>
<rect x="11.35" y="83.34" width="8.2" height="8.8"/>
<rect x="22.25" y="83.34" width="8.2" height="8.8"/>
<rect x="33.15" y="83.34" width="8.2" height="8.8"/>
</g>
<rect x="0.5" y="96" width="40.8" height="7.1" fill="#74b2de" stroke="#000" stroke-width="1"/>
<rect x="0.5" y="105.6" width="40.8" height="5.8" fill="#f5963f" stroke="#000" stroke-width="1"/>
<rect x="0.5" y="115" width="18.7" height="3.6" fill="#a5500f" stroke="#000" stroke-width="1"/>
<rect x="22.6" y="115" width="18.7" height="3.6" fill="#a5500f" stroke="#000" stroke-width="1"/>
<rect x="0.5" y="120.9" width="40.8" height="7.6" fill="#235a68" stroke="#000" stroke-width="1"/>
</g>
<rect x="786.6" y="963.4" width="50" height="133.3" fill="#404040" stroke="#8a8a8a" stroke-width="1"/>
<rect x="840.4" y="963.4" width="50.7" height="133.3" fill="#404040" stroke="#8a8a8a" stroke-width="1"/>
<g transform="translate(790.2,962.9)">
<g fill="#33c733" stroke="#000" stroke-width="0.9">
<rect x="0.45" y="5.85" width="8.2" height="8.8"/>
<rect x="11.35" y="5.85" width="8.2" height="8.8"/>
<rect x="22.25" y="5.85" width="8.2" height="8.8"/>
<rect x="33.15" y="5.85" width="8.2" height="8.8"/>
<rect x="0.45" y="16.92" width="8.2" height="8.8"/>
<rect x="11.35" y="16.92" width="8.2" height="8.8"/>
<rect x="22.25" y="16.92" width="8.2" height="8.8"/>
<rect x="33.15" y="16.92" width="8.2" height="8.8"/>
<rect x="0.45" y="27.99" width="8.2" height="8.8"/>
<rect x="11.35" y="27.99" width="8.2" height="8.8"/>
<rect x="22.25" y="27.99" width="8.2" height="8.8"/>
<rect x="33.15" y="27.99" width="8.2" height="8.8"/>
<rect x="0.45" y="39.06" width="8.2" height="8.8"/>
<rect x="11.35" y="39.06" width="8.2" height="8.8"/>
<rect x="22.25" y="39.06" width="8.2" height="8.8"/>
<rect x="33.15" y="39.06" width="8.2" height="8.8"/>
<rect x="0.45" y="50.13" width="8.2" height="8.8"/>
<rect x="11.35" y="50.13" width="8.2" height="8.8"/>
<rect x="22.25" y="50.13" width="8.2" height="8.8"/>
<rect x="33.15" y="50.13" width="8.2" height="8.8"/>
<rect x="0.45" y="61.2" width="8.2" height="8.8"/>
<rect x="11.35" y="61.2" width="8.2" height="8.8"/>
<rect x="22.25" y="61.2" width="8.2" height="8.8"/>
<rect x="33.15" y="61.2" width="8.2" height="8.8"/>
<rect x="0.45" y="72.27" width="8.2" height="8.8"/>
<rect x="11.35" y="72.27" width="8.2" height="8.8"/>
<rect x="22.25" y="72.27" width="8.2" height="8.8"/>
<rect x="33.15" y="72.27" width="8.2" height="8.8"/>
<rect x="0.45" y="83.34" width="8.2" height="8.8"/>
<rect x="11.35" y="83.34" width="8.2" height="8.8"/>
<rect x="22.25" y="83.34" width="8.2" height="8.8"/>
<rect x="33.15" y="83.34" width="8.2" height="8.8"/>
</g>
<rect x="0.5" y="96" width="40.8" height="7.1" fill="#74b2de" stroke="#000" stroke-width="1"/>
<rect x="0.5" y="105.6" width="40.8" height="5.8" fill="#f5963f" stroke="#000" stroke-width="1"/>
<rect x="0.5" y="115" width="18.7" height="3.6" fill="#a5500f" stroke="#000" stroke-width="1"/>
<rect x="22.6" y="115" width="18.7" height="3.6" fill="#a5500f" stroke="#000" stroke-width="1"/>
<rect x="0.5" y="120.9" width="40.8" height="7.6" fill="#235a68" stroke="#000" stroke-width="1"/>
</g>
<g transform="translate(844.6,962.9)">
<g fill="#33c733" stroke="#000" stroke-width="0.9">
<rect x="0.45" y="5.85" width="8.2" height="8.8"/>
<rect x="11.35" y="5.85" width="8.2" height="8.8"/>
<rect x="22.25" y="5.85" width="8.2" height="8.8"/>
<rect x="33.15" y="5.85" width="8.2" height="8.8"/>
<rect x="0.45" y="16.92" width="8.2" height="8.8"/>
<rect x="11.35" y="16.92" width="8.2" height="8.8"/>
<rect x="22.25" y="16.92" width="8.2" height="8.8"/>
<rect x="33.15" y="16.92" width="8.2" height="8.8"/>
<rect x="0.45" y="27.99" width="8.2" height="8.8"/>
<rect x="11.35" y="27.99" width="8.2" height="8.8"/>
<rect x="22.25" y="27.99" width="8.2" height="8.8"/>
<rect x="33.15" y="27.99" width="8.2" height="8.8"/>
<rect x="0.45" y="39.06" width="8.2" height="8.8"/>
<rect x="11.35" y="39.06" width="8.2" height="8.8"/>
<rect x="22.25" y="39.06" width="8.2" height="8.8"/>
<rect x="33.15" y="39.06" width="8.2" height="8.8"/>
<rect x="0.45" y="50.13" width="8.2" height="8.8"/>
<rect x="11.35" y="50.13" width="8.2" height="8.8"/>
<rect x="22.25" y="50.13" width="8.2" height="8.8"/>
<rect x="33.15" y="50.13" width="8.2" height="8.8"/>
<rect x="0.45" y="61.2" width="8.2" height="8.8"/>
<rect x="11.35" y="61.2" width="8.2" height="8.8"/>
<rect x="22.25" y="61.2" width="8.2" height="8.8"/>
<rect x="33.15" y="61.2" width="8.2" height="8.8"/>
<rect x="0.45" y="72.27" width="8.2" height="8.8"/>
<rect x="11.35" y="72.27" width="8.2" height="8.8"/>
<rect x="22.25" y="72.27" width="8.2" height="8.8"/>
<rect x="33.15" y="72.27" width="8.2" height="8.8"/>
<rect x="0.45" y="83.34" width="8.2" height="8.8"/>
<rect x="11.35" y="83.34" width="8.2" height="8.8"/>
<rect x="22.25" y="83.34" width="8.2" height="8.8"/>
<rect x="33.15" y="83.34" width="8.2" height="8.8"/>
</g>
<rect x="0.5" y="96" width="40.8" height="7.1" fill="#74b2de" stroke="#000" stroke-width="1"/>
<rect x="0.5" y="105.6" width="40.8" height="5.8" fill="#f5963f" stroke="#000" stroke-width="1"/>
<rect x="0.5" y="115" width="18.7" height="3.6" fill="#a5500f" stroke="#000" stroke-width="1"/>
<rect x="22.6" y="115" width="18.7" height="3.6" fill="#a5500f" stroke="#000" stroke-width="1"/>
<rect x="0.5" y="120.9" width="40.8" height="7.6" fill="#235a68" stroke="#000" stroke-width="1"/>
</g>
<rect x="785.9" y="937.8" width="24.5" height="9.5" fill="#2955a6" stroke="#000" stroke-width="1"/>
<rect x="812.6" y="937.8" width="24.5" height="9.5" fill="#2955a6" stroke="#000" stroke-width="1"/>
<rect x="839.3" y="937.8" width="24.5" height="9.5" fill="#2955a6" stroke="#000" stroke-width="1"/>
<rect x="866" y="937.8" width="24.5" height="9.5" fill="#2955a6" stroke="#000" stroke-width="1"/>
<rect x="785.9" y="951" width="104.6" height="8.2" fill="#74b2de" stroke="#000" stroke-width="1"/>
<rect x="786.5" y="1100.6" width="105" height="8.8" fill="#74b2de" stroke="#000" stroke-width="1"/>
<text x="784.8" y="1123.4" font-size="11.5" fill="#fff" stroke="#fff" stroke-width="0.25">SM</text>
<rect x="780.05" y="1132.75" width="119.1" height="14.4" fill="#f1f96b" stroke="#000" stroke-width="1.1"/>
<text x="839.3" y="1142.9" font-size="10.6" fill="#111" text-anchor="middle" stroke="#111" stroke-width="0.25">PolyMorph Engine</text>
<text x="781.5" y="1160" font-size="11.7" fill="#fff" font-weight="normal" stroke="#fff" stroke-width="0.45">TPC</text>
<polygon fill="#dcdcdc" points="833,1164.3 842.89,1169.7 836.4,1169.7 836.4,1175.8 829.6,1175.8 829.6,1169.7 823.11,1169.7"/>
<polygon fill="#dcdcdc" points="845.98,1164.5 852.78,1164.5 852.78,1170.39 859.06,1170.39 849.38,1176.2 839.8,1170.39 845.98,1170.39"/>
<rect x="909.8" y="754.6" width="126" height="410" fill="#404040" stroke="#8a8a8a" stroke-width="1"/>
<rect x="912.8" y="758.6" width="120" height="368.8" fill="#404040" stroke="#8a8a8a" stroke-width="1"/>
<rect x="919.5" y="764.5" width="105" height="8.8" fill="#74b2de" stroke="#000" stroke-width="1"/>
<rect x="919.5" y="776.6" width="24.5" height="8.9" fill="#2955a6" stroke="#000" stroke-width="1"/>
<rect x="946.33" y="776.6" width="24.5" height="8.9" fill="#2955a6" stroke="#000" stroke-width="1"/>
<rect x="973.17" y="776.6" width="24.5" height="8.9" fill="#2955a6" stroke="#000" stroke-width="1"/>
<rect x="1000" y="776.6" width="24.5" height="8.9" fill="#2955a6" stroke="#000" stroke-width="1"/>
<rect x="919.5" y="788.8" width="105" height="8.7" fill="#74b2de" stroke="#000" stroke-width="1"/>
<rect x="919.6" y="800.3" width="50" height="133.3" fill="#404040" stroke="#8a8a8a" stroke-width="1"/>
<rect x="973.4" y="800.3" width="50.7" height="133.3" fill="#404040" stroke="#8a8a8a" stroke-width="1"/>
<g transform="translate(923.2,799.8)">
<g fill="#33c733" stroke="#000" stroke-width="0.9">
<rect x="0.45" y="5.85" width="8.2" height="8.8"/>
<rect x="11.35" y="5.85" width="8.2" height="8.8"/>
<rect x="22.25" y="5.85" width="8.2" height="8.8"/>
<rect x="33.15" y="5.85" width="8.2" height="8.8"/>
<rect x="0.45" y="16.92" width="8.2" height="8.8"/>
<rect x="11.35" y="16.92" width="8.2" height="8.8"/>
<rect x="22.25" y="16.92" width="8.2" height="8.8"/>
<rect x="33.15" y="16.92" width="8.2" height="8.8"/>
<rect x="0.45" y="27.99" width="8.2" height="8.8"/>
<rect x="11.35" y="27.99" width="8.2" height="8.8"/>
<rect x="22.25" y="27.99" width="8.2" height="8.8"/>
<rect x="33.15" y="27.99" width="8.2" height="8.8"/>
<rect x="0.45" y="39.06" width="8.2" height="8.8"/>
<rect x="11.35" y="39.06" width="8.2" height="8.8"/>
<rect x="22.25" y="39.06" width="8.2" height="8.8"/>
<rect x="33.15" y="39.06" width="8.2" height="8.8"/>
<rect x="0.45" y="50.13" width="8.2" height="8.8"/>
<rect x="11.35" y="50.13" width="8.2" height="8.8"/>
<rect x="22.25" y="50.13" width="8.2" height="8.8"/>
<rect x="33.15" y="50.13" width="8.2" height="8.8"/>
<rect x="0.45" y="61.2" width="8.2" height="8.8"/>
<rect x="11.35" y="61.2" width="8.2" height="8.8"/>
<rect x="22.25" y="61.2" width="8.2" height="8.8"/>
<rect x="33.15" y="61.2" width="8.2" height="8.8"/>
<rect x="0.45" y="72.27" width="8.2" height="8.8"/>
<rect x="11.35" y="72.27" width="8.2" height="8.8"/>
<rect x="22.25" y="72.27" width="8.2" height="8.8"/>
<rect x="33.15" y="72.27" width="8.2" height="8.8"/>
<rect x="0.45" y="83.34" width="8.2" height="8.8"/>
<rect x="11.35" y="83.34" width="8.2" height="8.8"/>
<rect x="22.25" y="83.34" width="8.2" height="8.8"/>
<rect x="33.15" y="83.34" width="8.2" height="8.8"/>
</g>
<rect x="0.5" y="96" width="40.8" height="7.1" fill="#74b2de" stroke="#000" stroke-width="1"/>
<rect x="0.5" y="105.6" width="40.8" height="5.8" fill="#f5963f" stroke="#000" stroke-width="1"/>
<rect x="0.5" y="115" width="18.7" height="3.6" fill="#a5500f" stroke="#000" stroke-width="1"/>
<rect x="22.6" y="115" width="18.7" height="3.6" fill="#a5500f" stroke="#000" stroke-width="1"/>
<rect x="0.5" y="120.9" width="40.8" height="7.6" fill="#235a68" stroke="#000" stroke-width="1"/>
</g>
<g transform="translate(977.6,799.8)">
<g fill="#33c733" stroke="#000" stroke-width="0.9">
<rect x="0.45" y="5.85" width="8.2" height="8.8"/>
<rect x="11.35" y="5.85" width="8.2" height="8.8"/>
<rect x="22.25" y="5.85" width="8.2" height="8.8"/>
<rect x="33.15" y="5.85" width="8.2" height="8.8"/>
<rect x="0.45" y="16.92" width="8.2" height="8.8"/>
<rect x="11.35" y="16.92" width="8.2" height="8.8"/>
<rect x="22.25" y="16.92" width="8.2" height="8.8"/>
<rect x="33.15" y="16.92" width="8.2" height="8.8"/>
<rect x="0.45" y="27.99" width="8.2" height="8.8"/>
<rect x="11.35" y="27.99" width="8.2" height="8.8"/>
<rect x="22.25" y="27.99" width="8.2" height="8.8"/>
<rect x="33.15" y="27.99" width="8.2" height="8.8"/>
<rect x="0.45" y="39.06" width="8.2" height="8.8"/>
<rect x="11.35" y="39.06" width="8.2" height="8.8"/>
<rect x="22.25" y="39.06" width="8.2" height="8.8"/>
<rect x="33.15" y="39.06" width="8.2" height="8.8"/>
<rect x="0.45" y="50.13" width="8.2" height="8.8"/>
<rect x="11.35" y="50.13" width="8.2" height="8.8"/>
<rect x="22.25" y="50.13" width="8.2" height="8.8"/>
<rect x="33.15" y="50.13" width="8.2" height="8.8"/>
<rect x="0.45" y="61.2" width="8.2" height="8.8"/>
<rect x="11.35" y="61.2" width="8.2" height="8.8"/>
<rect x="22.25" y="61.2" width="8.2" height="8.8"/>
<rect x="33.15" y="61.2" width="8.2" height="8.8"/>
<rect x="0.45" y="72.27" width="8.2" height="8.8"/>
<rect x="11.35" y="72.27" width="8.2" height="8.8"/>
<rect x="22.25" y="72.27" width="8.2" height="8.8"/>
<rect x="33.15" y="72.27" width="8.2" height="8.8"/>
<rect x="0.45" y="83.34" width="8.2" height="8.8"/>
<rect x="11.35" y="83.34" width="8.2" height="8.8"/>
<rect x="22.25" y="83.34" width="8.2" height="8.8"/>
<rect x="33.15" y="83.34" width="8.2" height="8.8"/>
</g>
<rect x="0.5" y="96" width="40.8" height="7.1" fill="#74b2de" stroke="#000" stroke-width="1"/>
<rect x="0.5" y="105.6" width="40.8" height="5.8" fill="#f5963f" stroke="#000" stroke-width="1"/>
<rect x="0.5" y="115" width="18.7" height="3.6" fill="#a5500f" stroke="#000" stroke-width="1"/>
<rect x="22.6" y="115" width="18.7" height="3.6" fill="#a5500f" stroke="#000" stroke-width="1"/>
<rect x="0.5" y="120.9" width="40.8" height="7.6" fill="#235a68" stroke="#000" stroke-width="1"/>
</g>
<rect x="919.6" y="963.4" width="50" height="133.3" fill="#404040" stroke="#8a8a8a" stroke-width="1"/>
<rect x="973.4" y="963.4" width="50.7" height="133.3" fill="#404040" stroke="#8a8a8a" stroke-width="1"/>
<g transform="translate(923.2,962.9)">
<g fill="#33c733" stroke="#000" stroke-width="0.9">
<rect x="0.45" y="5.85" width="8.2" height="8.8"/>
<rect x="11.35" y="5.85" width="8.2" height="8.8"/>
<rect x="22.25" y="5.85" width="8.2" height="8.8"/>
<rect x="33.15" y="5.85" width="8.2" height="8.8"/>
<rect x="0.45" y="16.92" width="8.2" height="8.8"/>
<rect x="11.35" y="16.92" width="8.2" height="8.8"/>
<rect x="22.25" y="16.92" width="8.2" height="8.8"/>
<rect x="33.15" y="16.92" width="8.2" height="8.8"/>
<rect x="0.45" y="27.99" width="8.2" height="8.8"/>
<rect x="11.35" y="27.99" width="8.2" height="8.8"/>
<rect x="22.25" y="27.99" width="8.2" height="8.8"/>
<rect x="33.15" y="27.99" width="8.2" height="8.8"/>
<rect x="0.45" y="39.06" width="8.2" height="8.8"/>
<rect x="11.35" y="39.06" width="8.2" height="8.8"/>
<rect x="22.25" y="39.06" width="8.2" height="8.8"/>
<rect x="33.15" y="39.06" width="8.2" height="8.8"/>
<rect x="0.45" y="50.13" width="8.2" height="8.8"/>
<rect x="11.35" y="50.13" width="8.2" height="8.8"/>
<rect x="22.25" y="50.13" width="8.2" height="8.8"/>
<rect x="33.15" y="50.13" width="8.2" height="8.8"/>
<rect x="0.45" y="61.2" width="8.2" height="8.8"/>
<rect x="11.35" y="61.2" width="8.2" height="8.8"/>
<rect x="22.25" y="61.2" width="8.2" height="8.8"/>
<rect x="33.15" y="61.2" width="8.2" height="8.8"/>
<rect x="0.45" y="72.27" width="8.2" height="8.8"/>
<rect x="11.35" y="72.27" width="8.2" height="8.8"/>
<rect x="22.25" y="72.27" width="8.2" height="8.8"/>
<rect x="33.15" y="72.27" width="8.2" height="8.8"/>
<rect x="0.45" y="83.34" width="8.2" height="8.8"/>
<rect x="11.35" y="83.34" width="8.2" height="8.8"/>
<rect x="22.25" y="83.34" width="8.2" height="8.8"/>
<rect x="33.15" y="83.34" width="8.2" height="8.8"/>
</g>
<rect x="0.5" y="96" width="40.8" height="7.1" fill="#74b2de" stroke="#000" stroke-width="1"/>
<rect x="0.5" y="105.6" width="40.8" height="5.8" fill="#f5963f" stroke="#000" stroke-width="1"/>
<rect x="0.5" y="115" width="18.7" height="3.6" fill="#a5500f" stroke="#000" stroke-width="1"/>
<rect x="22.6" y="115" width="18.7" height="3.6" fill="#a5500f" stroke="#000" stroke-width="1"/>
<rect x="0.5" y="120.9" width="40.8" height="7.6" fill="#235a68" stroke="#000" stroke-width="1"/>
</g>
<g transform="translate(977.6,962.9)">
<g fill="#33c733" stroke="#000" stroke-width="0.9">
<rect x="0.45" y="5.85" width="8.2" height="8.8"/>
<rect x="11.35" y="5.85" width="8.2" height="8.8"/>
<rect x="22.25" y="5.85" width="8.2" height="8.8"/>
<rect x="33.15" y="5.85" width="8.2" height="8.8"/>
<rect x="0.45" y="16.92" width="8.2" height="8.8"/>
<rect x="11.35" y="16.92" width="8.2" height="8.8"/>
<rect x="22.25" y="16.92" width="8.2" height="8.8"/>
<rect x="33.15" y="16.92" width="8.2" height="8.8"/>
<rect x="0.45" y="27.99" width="8.2" height="8.8"/>
<rect x="11.35" y="27.99" width="8.2" height="8.8"/>
<rect x="22.25" y="27.99" width="8.2" height="8.8"/>
<rect x="33.15" y="27.99" width="8.2" height="8.8"/>
<rect x="0.45" y="39.06" width="8.2" height="8.8"/>
<rect x="11.35" y="39.06" width="8.2" height="8.8"/>
<rect x="22.25" y="39.06" width="8.2" height="8.8"/>
<rect x="33.15" y="39.06" width="8.2" height="8.8"/>
<rect x="0.45" y="50.13" width="8.2" height="8.8"/>
<rect x="11.35" y="50.13" width="8.2" height="8.8"/>
<rect x="22.25" y="50.13" width="8.2" height="8.8"/>
<rect x="33.15" y="50.13" width="8.2" height="8.8"/>
<rect x="0.45" y="61.2" width="8.2" height="8.8"/>
<rect x="11.35" y="61.2" width="8.2" height="8.8"/>
<rect x="22.25" y="61.2" width="8.2" height="8.8"/>
<rect x="33.15" y="61.2" width="8.2" height="8.8"/>
<rect x="0.45" y="72.27" width="8.2" height="8.8"/>
<rect x="11.35" y="72.27" width="8.2" height="8.8"/>
<rect x="22.25" y="72.27" width="8.2" height="8.8"/>
<rect x="33.15" y="72.27" width="8.2" height="8.8"/>
<rect x="0.45" y="83.34" width="8.2" height="8.8"/>
<rect x="11.35" y="83.34" width="8.2" height="8.8"/>
<rect x="22.25" y="83.34" width="8.2" height="8.8"/>
<rect x="33.15" y="83.34" width="8.2" height="8.8"/>
</g>
<rect x="0.5" y="96" width="40.8" height="7.1" fill="#74b2de" stroke="#000" stroke-width="1"/>
<rect x="0.5" y="105.6" width="40.8" height="5.8" fill="#f5963f" stroke="#000" stroke-width="1"/>
<rect x="0.5" y="115" width="18.7" height="3.6" fill="#a5500f" stroke="#000" stroke-width="1"/>
<rect x="22.6" y="115" width="18.7" height="3.6" fill="#a5500f" stroke="#000" stroke-width="1"/>
<rect x="0.5" y="120.9" width="40.8" height="7.6" fill="#235a68" stroke="#000" stroke-width="1"/>
</g>
<rect x="918.9" y="937.8" width="24.5" height="9.5" fill="#2955a6" stroke="#000" stroke-width="1"/>
<rect x="945.6" y="937.8" width="24.5" height="9.5" fill="#2955a6" stroke="#000" stroke-width="1"/>
<rect x="972.3" y="937.8" width="24.5" height="9.5" fill="#2955a6" stroke="#000" stroke-width="1"/>
<rect x="999" y="937.8" width="24.5" height="9.5" fill="#2955a6" stroke="#000" stroke-width="1"/>
<rect x="918.9" y="951" width="104.6" height="8.2" fill="#74b2de" stroke="#000" stroke-width="1"/>
<rect x="919.5" y="1100.6" width="105" height="8.8" fill="#74b2de" stroke="#000" stroke-width="1"/>
<text x="917.8" y="1123.4" font-size="11.5" fill="#fff" stroke="#fff" stroke-width="0.25">SM</text>
<rect x="913.05" y="1132.75" width="119.1" height="14.4" fill="#f1f96b" stroke="#000" stroke-width="1.1"/>
<text x="972.3" y="1142.9" font-size="10.6" fill="#111" text-anchor="middle" stroke="#111" stroke-width="0.25">PolyMorph Engine</text>
<text x="914.5" y="1160" font-size="11.7" fill="#fff" font-weight="normal" stroke="#fff" stroke-width="0.45">TPC</text>
<polygon fill="#dcdcdc" points="966,1164.3 975.89,1169.7 969.4,1169.7 969.4,1175.8 962.6,1175.8 962.6,1169.7 956.11,1169.7"/>
<polygon fill="#dcdcdc" points="978.98,1164.5 985.78,1164.5 985.78,1170.39 992.06,1170.39 982.38,1176.2 972.8,1170.39 978.98,1170.39"/>
<rect x="1042.7" y="754.6" width="126" height="410" fill="#404040" stroke="#8a8a8a" stroke-width="1"/>
<rect x="1045.7" y="758.6" width="120" height="368.8" fill="#404040" stroke="#8a8a8a" stroke-width="1"/>
<rect x="1052.4" y="764.5" width="105" height="8.8" fill="#74b2de" stroke="#000" stroke-width="1"/>
<rect x="1052.4" y="776.6" width="24.5" height="8.9" fill="#2955a6" stroke="#000" stroke-width="1"/>
<rect x="1079.23" y="776.6" width="24.5" height="8.9" fill="#2955a6" stroke="#000" stroke-width="1"/>
<rect x="1106.07" y="776.6" width="24.5" height="8.9" fill="#2955a6" stroke="#000" stroke-width="1"/>
<rect x="1132.9" y="776.6" width="24.5" height="8.9" fill="#2955a6" stroke="#000" stroke-width="1"/>
<rect x="1052.4" y="788.8" width="105" height="8.7" fill="#74b2de" stroke="#000" stroke-width="1"/>
<rect x="1052.5" y="800.3" width="50" height="133.3" fill="#404040" stroke="#8a8a8a" stroke-width="1"/>
<rect x="1106.3" y="800.3" width="50.7" height="133.3" fill="#404040" stroke="#8a8a8a" stroke-width="1"/>
<g transform="translate(1056.1,799.8)">
<g fill="#33c733" stroke="#000" stroke-width="0.9">
<rect x="0.45" y="5.85" width="8.2" height="8.8"/>
<rect x="11.35" y="5.85" width="8.2" height="8.8"/>
<rect x="22.25" y="5.85" width="8.2" height="8.8"/>
<rect x="33.15" y="5.85" width="8.2" height="8.8"/>
<rect x="0.45" y="16.92" width="8.2" height="8.8"/>
<rect x="11.35" y="16.92" width="8.2" height="8.8"/>
<rect x="22.25" y="16.92" width="8.2" height="8.8"/>
<rect x="33.15" y="16.92" width="8.2" height="8.8"/>
<rect x="0.45" y="27.99" width="8.2" height="8.8"/>
<rect x="11.35" y="27.99" width="8.2" height="8.8"/>
<rect x="22.25" y="27.99" width="8.2" height="8.8"/>
<rect x="33.15" y="27.99" width="8.2" height="8.8"/>
<rect x="0.45" y="39.06" width="8.2" height="8.8"/>
<rect x="11.35" y="39.06" width="8.2" height="8.8"/>
<rect x="22.25" y="39.06" width="8.2" height="8.8"/>
<rect x="33.15" y="39.06" width="8.2" height="8.8"/>
<rect x="0.45" y="50.13" width="8.2" height="8.8"/>
<rect x="11.35" y="50.13" width="8.2" height="8.8"/>
<rect x="22.25" y="50.13" width="8.2" height="8.8"/>
<rect x="33.15" y="50.13" width="8.2" height="8.8"/>
<rect x="0.45" y="61.2" width="8.2" height="8.8"/>
<rect x="11.35" y="61.2" width="8.2" height="8.8"/>
<rect x="22.25" y="61.2" width="8.2" height="8.8"/>
<rect x="33.15" y="61.2" width="8.2" height="8.8"/>
<rect x="0.45" y="72.27" width="8.2" height="8.8"/>
<rect x="11.35" y="72.27" width="8.2" height="8.8"/>
<rect x="22.25" y="72.27" width="8.2" height="8.8"/>
<rect x="33.15" y="72.27" width="8.2" height="8.8"/>
<rect x="0.45" y="83.34" width="8.2" height="8.8"/>
<rect x="11.35" y="83.34" width="8.2" height="8.8"/>
<rect x="22.25" y="83.34" width="8.2" height="8.8"/>
<rect x="33.15" y="83.34" width="8.2" height="8.8"/>
</g>
<rect x="0.5" y="96" width="40.8" height="7.1" fill="#74b2de" stroke="#000" stroke-width="1"/>
<rect x="0.5" y="105.6" width="40.8" height="5.8" fill="#f5963f" stroke="#000" stroke-width="1"/>
<rect x="0.5" y="115" width="18.7" height="3.6" fill="#a5500f" stroke="#000" stroke-width="1"/>
<rect x="22.6" y="115" width="18.7" height="3.6" fill="#a5500f" stroke="#000" stroke-width="1"/>
<rect x="0.5" y="120.9" width="40.8" height="7.6" fill="#235a68" stroke="#000" stroke-width="1"/>
</g>
<g transform="translate(1110.5,799.8)">
<g fill="#33c733" stroke="#000" stroke-width="0.9">
<rect x="0.45" y="5.85" width="8.2" height="8.8"/>
<rect x="11.35" y="5.85" width="8.2" height="8.8"/>
<rect x="22.25" y="5.85" width="8.2" height="8.8"/>
<rect x="33.15" y="5.85" width="8.2" height="8.8"/>
<rect x="0.45" y="16.92" width="8.2" height="8.8"/>
<rect x="11.35" y="16.92" width="8.2" height="8.8"/>
<rect x="22.25" y="16.92" width="8.2" height="8.8"/>
<rect x="33.15" y="16.92" width="8.2" height="8.8"/>
<rect x="0.45" y="27.99" width="8.2" height="8.8"/>
<rect x="11.35" y="27.99" width="8.2" height="8.8"/>
<rect x="22.25" y="27.99" width="8.2" height="8.8"/>
<rect x="33.15" y="27.99" width="8.2" height="8.8"/>
<rect x="0.45" y="39.06" width="8.2" height="8.8"/>
<rect x="11.35" y="39.06" width="8.2" height="8.8"/>
<rect x="22.25" y="39.06" width="8.2" height="8.8"/>
<rect x="33.15" y="39.06" width="8.2" height="8.8"/>
<rect x="0.45" y="50.13" width="8.2" height="8.8"/>
<rect x="11.35" y="50.13" width="8.2" height="8.8"/>
<rect x="22.25" y="50.13" width="8.2" height="8.8"/>
<rect x="33.15" y="50.13" width="8.2" height="8.8"/>
<rect x="0.45" y="61.2" width="8.2" height="8.8"/>
<rect x="11.35" y="61.2" width="8.2" height="8.8"/>
<rect x="22.25" y="61.2" width="8.2" height="8.8"/>
<rect x="33.15" y="61.2" width="8.2" height="8.8"/>
<rect x="0.45" y="72.27" width="8.2" height="8.8"/>
<rect x="11.35" y="72.27" width="8.2" height="8.8"/>
<rect x="22.25" y="72.27" width="8.2" height="8.8"/>
<rect x="33.15" y="72.27" width="8.2" height="8.8"/>
<rect x="0.45" y="83.34" width="8.2" height="8.8"/>
<rect x="11.35" y="83.34" width="8.2" height="8.8"/>
<rect x="22.25" y="83.34" width="8.2" height="8.8"/>
<rect x="33.15" y="83.34" width="8.2" height="8.8"/>
</g>
<rect x="0.5" y="96" width="40.8" height="7.1" fill="#74b2de" stroke="#000" stroke-width="1"/>
<rect x="0.5" y="105.6" width="40.8" height="5.8" fill="#f5963f" stroke="#000" stroke-width="1"/>
<rect x="0.5" y="115" width="18.7" height="3.6" fill="#a5500f" stroke="#000" stroke-width="1"/>
<rect x="22.6" y="115" width="18.7" height="3.6" fill="#a5500f" stroke="#000" stroke-width="1"/>
<rect x="0.5" y="120.9" width="40.8" height="7.6" fill="#235a68" stroke="#000" stroke-width="1"/>
</g>
<rect x="1052.5" y="963.4" width="50" height="133.3" fill="#404040" stroke="#8a8a8a" stroke-width="1"/>
<rect x="1106.3" y="963.4" width="50.7" height="133.3" fill="#404040" stroke="#8a8a8a" stroke-width="1"/>
<g transform="translate(1056.1,962.9)">
<g fill="#33c733" stroke="#000" stroke-width="0.9">
<rect x="0.45" y="5.85" width="8.2" height="8.8"/>
<rect x="11.35" y="5.85" width="8.2" height="8.8"/>
<rect x="22.25" y="5.85" width="8.2" height="8.8"/>
<rect x="33.15" y="5.85" width="8.2" height="8.8"/>
<rect x="0.45" y="16.92" width="8.2" height="8.8"/>
<rect x="11.35" y="16.92" width="8.2" height="8.8"/>
<rect x="22.25" y="16.92" width="8.2" height="8.8"/>
<rect x="33.15" y="16.92" width="8.2" height="8.8"/>
<rect x="0.45" y="27.99" width="8.2" height="8.8"/>
<rect x="11.35" y="27.99" width="8.2" height="8.8"/>
<rect x="22.25" y="27.99" width="8.2" height="8.8"/>
<rect x="33.15" y="27.99" width="8.2" height="8.8"/>
<rect x="0.45" y="39.06" width="8.2" height="8.8"/>
<rect x="11.35" y="39.06" width="8.2" height="8.8"/>
<rect x="22.25" y="39.06" width="8.2" height="8.8"/>
<rect x="33.15" y="39.06" width="8.2" height="8.8"/>
<rect x="0.45" y="50.13" width="8.2" height="8.8"/>
<rect x="11.35" y="50.13" width="8.2" height="8.8"/>
<rect x="22.25" y="50.13" width="8.2" height="8.8"/>
<rect x="33.15" y="50.13" width="8.2" height="8.8"/>
<rect x="0.45" y="61.2" width="8.2" height="8.8"/>
<rect x="11.35" y="61.2" width="8.2" height="8.8"/>
<rect x="22.25" y="61.2" width="8.2" height="8.8"/>
<rect x="33.15" y="61.2" width="8.2" height="8.8"/>
<rect x="0.45" y="72.27" width="8.2" height="8.8"/>
<rect x="11.35" y="72.27" width="8.2" height="8.8"/>
<rect x="22.25" y="72.27" width="8.2" height="8.8"/>
<rect x="33.15" y="72.27" width="8.2" height="8.8"/>
<rect x="0.45" y="83.34" width="8.2" height="8.8"/>
<rect x="11.35" y="83.34" width="8.2" height="8.8"/>
<rect x="22.25" y="83.34" width="8.2" height="8.8"/>
<rect x="33.15" y="83.34" width="8.2" height="8.8"/>
</g>
<rect x="0.5" y="96" width="40.8" height="7.1" fill="#74b2de" stroke="#000" stroke-width="1"/>
<rect x="0.5" y="105.6" width="40.8" height="5.8" fill="#f5963f" stroke="#000" stroke-width="1"/>
<rect x="0.5" y="115" width="18.7" height="3.6" fill="#a5500f" stroke="#000" stroke-width="1"/>
<rect x="22.6" y="115" width="18.7" height="3.6" fill="#a5500f" stroke="#000" stroke-width="1"/>
<rect x="0.5" y="120.9" width="40.8" height="7.6" fill="#235a68" stroke="#000" stroke-width="1"/>
</g>
<g transform="translate(1110.5,962.9)">
<g fill="#33c733" stroke="#000" stroke-width="0.9">
<rect x="0.45" y="5.85" width="8.2" height="8.8"/>
<rect x="11.35" y="5.85" width="8.2" height="8.8"/>
<rect x="22.25" y="5.85" width="8.2" height="8.8"/>
<rect x="33.15" y="5.85" width="8.2" height="8.8"/>
<rect x="0.45" y="16.92" width="8.2" height="8.8"/>
<rect x="11.35" y="16.92" width="8.2" height="8.8"/>
<rect x="22.25" y="16.92" width="8.2" height="8.8"/>
<rect x="33.15" y="16.92" width="8.2" height="8.8"/>
<rect x="0.45" y="27.99" width="8.2" height="8.8"/>
<rect x="11.35" y="27.99" width="8.2" height="8.8"/>
<rect x="22.25" y="27.99" width="8.2" height="8.8"/>
<rect x="33.15" y="27.99" width="8.2" height="8.8"/>
<rect x="0.45" y="39.06" width="8.2" height="8.8"/>
<rect x="11.35" y="39.06" width="8.2" height="8.8"/>
<rect x="22.25" y="39.06" width="8.2" height="8.8"/>
<rect x="33.15" y="39.06" width="8.2" height="8.8"/>
<rect x="0.45" y="50.13" width="8.2" height="8.8"/>
<rect x="11.35" y="50.13" width="8.2" height="8.8"/>
<rect x="22.25" y="50.13" width="8.2" height="8.8"/>
<rect x="33.15" y="50.13" width="8.2" height="8.8"/>
<rect x="0.45" y="61.2" width="8.2" height="8.8"/>
<rect x="11.35" y="61.2" width="8.2" height="8.8"/>
<rect x="22.25" y="61.2" width="8.2" height="8.8"/>
<rect x="33.15" y="61.2" width="8.2" height="8.8"/>
<rect x="0.45" y="72.27" width="8.2" height="8.8"/>
<rect x="11.35" y="72.27" width="8.2" height="8.8"/>
<rect x="22.25" y="72.27" width="8.2" height="8.8"/>
<rect x="33.15" y="72.27" width="8.2" height="8.8"/>
<rect x="0.45" y="83.34" width="8.2" height="8.8"/>
<rect x="11.35" y="83.34" width="8.2" height="8.8"/>
<rect x="22.25" y="83.34" width="8.2" height="8.8"/>
<rect x="33.15" y="83.34" width="8.2" height="8.8"/>
</g>
<rect x="0.5" y="96" width="40.8" height="7.1" fill="#74b2de" stroke="#000" stroke-width="1"/>
<rect x="0.5" y="105.6" width="40.8" height="5.8" fill="#f5963f" stroke="#000" stroke-width="1"/>
<rect x="0.5" y="115" width="18.7" height="3.6" fill="#a5500f" stroke="#000" stroke-width="1"/>
<rect x="22.6" y="115" width="18.7" height="3.6" fill="#a5500f" stroke="#000" stroke-width="1"/>
<rect x="0.5" y="120.9" width="40.8" height="7.6" fill="#235a68" stroke="#000" stroke-width="1"/>
</g>
<rect x="1051.8" y="937.8" width="24.5" height="9.5" fill="#2955a6" stroke="#000" stroke-width="1"/>
<rect x="1078.5" y="937.8" width="24.5" height="9.5" fill="#2955a6" stroke="#000" stroke-width="1"/>
<rect x="1105.2" y="937.8" width="24.5" height="9.5" fill="#2955a6" stroke="#000" stroke-width="1"/>
<rect x="1131.9" y="937.8" width="24.5" height="9.5" fill="#2955a6" stroke="#000" stroke-width="1"/>
<rect x="1051.8" y="951" width="104.6" height="8.2" fill="#74b2de" stroke="#000" stroke-width="1"/>
<rect x="1052.4" y="1100.6" width="105" height="8.8" fill="#74b2de" stroke="#000" stroke-width="1"/>
<text x="1050.7" y="1123.4" font-size="11.5" fill="#fff" stroke="#fff" stroke-width="0.25">SM</text>
<rect x="1045.95" y="1132.75" width="119.1" height="14.4" fill="#f1f96b" stroke="#000" stroke-width="1.1"/>
<text x="1105.2" y="1142.9" font-size="10.6" fill="#111" text-anchor="middle" stroke="#111" stroke-width="0.25">PolyMorph Engine</text>
<text x="1047.4" y="1160" font-size="11.7" fill="#fff" font-weight="normal" stroke="#fff" stroke-width="0.45">TPC</text>
<polygon fill="#dcdcdc" points="1098.9,1164.3 1108.79,1169.7 1102.3,1169.7 1102.3,1175.8 1095.5,1175.8 1095.5,1169.7 1089.01,1169.7"/>
<polygon fill="#dcdcdc" points="1111.88,1164.5 1118.68,1164.5 1118.68,1170.39 1124.96,1170.39 1115.28,1176.2 1105.7,1170.39 1111.88,1170.39"/>
<rect x="1174.6" y="754.6" width="126" height="410" fill="#404040" stroke="#8a8a8a" stroke-width="1"/>
<rect x="1177.6" y="758.6" width="120" height="368.8" fill="#404040" stroke="#8a8a8a" stroke-width="1"/>
<rect x="1184.3" y="764.5" width="105" height="8.8" fill="#74b2de" stroke="#000" stroke-width="1"/>
<rect x="1184.3" y="776.6" width="24.5" height="8.9" fill="#2955a6" stroke="#000" stroke-width="1"/>
<rect x="1211.13" y="776.6" width="24.5" height="8.9" fill="#2955a6" stroke="#000" stroke-width="1"/>
<rect x="1237.97" y="776.6" width="24.5" height="8.9" fill="#2955a6" stroke="#000" stroke-width="1"/>
<rect x="1264.8" y="776.6" width="24.5" height="8.9" fill="#2955a6" stroke="#000" stroke-width="1"/>
<rect x="1184.3" y="788.8" width="105" height="8.7" fill="#74b2de" stroke="#000" stroke-width="1"/>
<rect x="1184.4" y="800.3" width="50" height="133.3" fill="#404040" stroke="#8a8a8a" stroke-width="1"/>
<rect x="1238.2" y="800.3" width="50.7" height="133.3" fill="#404040" stroke="#8a8a8a" stroke-width="1"/>
<g transform="translate(1188,799.8)">
<g fill="#33c733" stroke="#000" stroke-width="0.9">
<rect x="0.45" y="5.85" width="8.2" height="8.8"/>
<rect x="11.35" y="5.85" width="8.2" height="8.8"/>
<rect x="22.25" y="5.85" width="8.2" height="8.8"/>
<rect x="33.15" y="5.85" width="8.2" height="8.8"/>
<rect x="0.45" y="16.92" width="8.2" height="8.8"/>
<rect x="11.35" y="16.92" width="8.2" height="8.8"/>
<rect x="22.25" y="16.92" width="8.2" height="8.8"/>
<rect x="33.15" y="16.92" width="8.2" height="8.8"/>
<rect x="0.45" y="27.99" width="8.2" height="8.8"/>
<rect x="11.35" y="27.99" width="8.2" height="8.8"/>
<rect x="22.25" y="27.99" width="8.2" height="8.8"/>
<rect x="33.15" y="27.99" width="8.2" height="8.8"/>
<rect x="0.45" y="39.06" width="8.2" height="8.8"/>
<rect x="11.35" y="39.06" width="8.2" height="8.8"/>
<rect x="22.25" y="39.06" width="8.2" height="8.8"/>
<rect x="33.15" y="39.06" width="8.2" height="8.8"/>
<rect x="0.45" y="50.13" width="8.2" height="8.8"/>
<rect x="11.35" y="50.13" width="8.2" height="8.8"/>
<rect x="22.25" y="50.13" width="8.2" height="8.8"/>
<rect x="33.15" y="50.13" width="8.2" height="8.8"/>
<rect x="0.45" y="61.2" width="8.2" height="8.8"/>
<rect x="11.35" y="61.2" width="8.2" height="8.8"/>
<rect x="22.25" y="61.2" width="8.2" height="8.8"/>
<rect x="33.15" y="61.2" width="8.2" height="8.8"/>
<rect x="0.45" y="72.27" width="8.2" height="8.8"/>
<rect x="11.35" y="72.27" width="8.2" height="8.8"/>
<rect x="22.25" y="72.27" width="8.2" height="8.8"/>
<rect x="33.15" y="72.27" width="8.2" height="8.8"/>
<rect x="0.45" y="83.34" width="8.2" height="8.8"/>
<rect x="11.35" y="83.34" width="8.2" height="8.8"/>
<rect x="22.25" y="83.34" width="8.2" height="8.8"/>
<rect x="33.15" y="83.34" width="8.2" height="8.8"/>
</g>
<rect x="0.5" y="96" width="40.8" height="7.1" fill="#74b2de" stroke="#000" stroke-width="1"/>
<rect x="0.5" y="105.6" width="40.8" height="5.8" fill="#f5963f" stroke="#000" stroke-width="1"/>
<rect x="0.5" y="115" width="18.7" height="3.6" fill="#a5500f" stroke="#000" stroke-width="1"/>
<rect x="22.6" y="115" width="18.7" height="3.6" fill="#a5500f" stroke="#000" stroke-width="1"/>
<rect x="0.5" y="120.9" width="40.8" height="7.6" fill="#235a68" stroke="#000" stroke-width="1"/>
</g>
<g transform="translate(1242.4,799.8)">
<g fill="#33c733" stroke="#000" stroke-width="0.9">
<rect x="0.45" y="5.85" width="8.2" height="8.8"/>
<rect x="11.35" y="5.85" width="8.2" height="8.8"/>
<rect x="22.25" y="5.85" width="8.2" height="8.8"/>
<rect x="33.15" y="5.85" width="8.2" height="8.8"/>
<rect x="0.45" y="16.92" width="8.2" height="8.8"/>
<rect x="11.35" y="16.92" width="8.2" height="8.8"/>
<rect x="22.25" y="16.92" width="8.2" height="8.8"/>
<rect x="33.15" y="16.92" width="8.2" height="8.8"/>
<rect x="0.45" y="27.99" width="8.2" height="8.8"/>
<rect x="11.35" y="27.99" width="8.2" height="8.8"/>
<rect x="22.25" y="27.99" width="8.2" height="8.8"/>
<rect x="33.15" y="27.99" width="8.2" height="8.8"/>
<rect x="0.45" y="39.06" width="8.2" height="8.8"/>
<rect x="11.35" y="39.06" width="8.2" height="8.8"/>
<rect x="22.25" y="39.06" width="8.2" height="8.8"/>
<rect x="33.15" y="39.06" width="8.2" height="8.8"/>
<rect x="0.45" y="50.13" width="8.2" height="8.8"/>
<rect x="11.35" y="50.13" width="8.2" height="8.8"/>
<rect x="22.25" y="50.13" width="8.2" height="8.8"/>
<rect x="33.15" y="50.13" width="8.2" height="8.8"/>
<rect x="0.45" y="61.2" width="8.2" height="8.8"/>
<rect x="11.35" y="61.2" width="8.2" height="8.8"/>
<rect x="22.25" y="61.2" width="8.2" height="8.8"/>
<rect x="33.15" y="61.2" width="8.2" height="8.8"/>
<rect x="0.45" y="72.27" width="8.2" height="8.8"/>
<rect x="11.35" y="72.27" width="8.2" height="8.8"/>
<rect x="22.25" y="72.27" width="8.2" height="8.8"/>
<rect x="33.15" y="72.27" width="8.2" height="8.8"/>
<rect x="0.45" y="83.34" width="8.2" height="8.8"/>
<rect x="11.35" y="83.34" width="8.2" height="8.8"/>
<rect x="22.25" y="83.34" width="8.2" height="8.8"/>
<rect x="33.15" y="83.34" width="8.2" height="8.8"/>
</g>
<rect x="0.5" y="96" width="40.8" height="7.1" fill="#74b2de" stroke="#000" stroke-width="1"/>
<rect x="0.5" y="105.6" width="40.8" height="5.8" fill="#f5963f" stroke="#000" stroke-width="1"/>
<rect x="0.5" y="115" width="18.7" height="3.6" fill="#a5500f" stroke="#000" stroke-width="1"/>
<rect x="22.6" y="115" width="18.7" height="3.6" fill="#a5500f" stroke="#000" stroke-width="1"/>
<rect x="0.5" y="120.9" width="40.8" height="7.6" fill="#235a68" stroke="#000" stroke-width="1"/>
</g>
<rect x="1184.4" y="963.4" width="50" height="133.3" fill="#404040" stroke="#8a8a8a" stroke-width="1"/>
<rect x="1238.2" y="963.4" width="50.7" height="133.3" fill="#404040" stroke="#8a8a8a" stroke-width="1"/>
<g transform="translate(1188,962.9)">
<g fill="#33c733" stroke="#000" stroke-width="0.9">
<rect x="0.45" y="5.85" width="8.2" height="8.8"/>
<rect x="11.35" y="5.85" width="8.2" height="8.8"/>
<rect x="22.25" y="5.85" width="8.2" height="8.8"/>
<rect x="33.15" y="5.85" width="8.2" height="8.8"/>
<rect x="0.45" y="16.92" width="8.2" height="8.8"/>
<rect x="11.35" y="16.92" width="8.2" height="8.8"/>
<rect x="22.25" y="16.92" width="8.2" height="8.8"/>
<rect x="33.15" y="16.92" width="8.2" height="8.8"/>
<rect x="0.45" y="27.99" width="8.2" height="8.8"/>
<rect x="11.35" y="27.99" width="8.2" height="8.8"/>
<rect x="22.25" y="27.99" width="8.2" height="8.8"/>
<rect x="33.15" y="27.99" width="8.2" height="8.8"/>
<rect x="0.45" y="39.06" width="8.2" height="8.8"/>
<rect x="11.35" y="39.06" width="8.2" height="8.8"/>
<rect x="22.25" y="39.06" width="8.2" height="8.8"/>
<rect x="33.15" y="39.06" width="8.2" height="8.8"/>
<rect x="0.45" y="50.13" width="8.2" height="8.8"/>
<rect x="11.35" y="50.13" width="8.2" height="8.8"/>
<rect x="22.25" y="50.13" width="8.2" height="8.8"/>
<rect x="33.15" y="50.13" width="8.2" height="8.8"/>
<rect x="0.45" y="61.2" width="8.2" height="8.8"/>
<rect x="11.35" y="61.2" width="8.2" height="8.8"/>
<rect x="22.25" y="61.2" width="8.2" height="8.8"/>
<rect x="33.15" y="61.2" width="8.2" height="8.8"/>
<rect x="0.45" y="72.27" width="8.2" height="8.8"/>
<rect x="11.35" y="72.27" width="8.2" height="8.8"/>
<rect x="22.25" y="72.27" width="8.2" height="8.8"/>
<rect x="33.15" y="72.27" width="8.2" height="8.8"/>
<rect x="0.45" y="83.34" width="8.2" height="8.8"/>
<rect x="11.35" y="83.34" width="8.2" height="8.8"/>
<rect x="22.25" y="83.34" width="8.2" height="8.8"/>
<rect x="33.15" y="83.34" width="8.2" height="8.8"/>
</g>
<rect x="0.5" y="96" width="40.8" height="7.1" fill="#74b2de" stroke="#000" stroke-width="1"/>
<rect x="0.5" y="105.6" width="40.8" height="5.8" fill="#f5963f" stroke="#000" stroke-width="1"/>
<rect x="0.5" y="115" width="18.7" height="3.6" fill="#a5500f" stroke="#000" stroke-width="1"/>
<rect x="22.6" y="115" width="18.7" height="3.6" fill="#a5500f" stroke="#000" stroke-width="1"/>
<rect x="0.5" y="120.9" width="40.8" height="7.6" fill="#235a68" stroke="#000" stroke-width="1"/>
</g>
<g transform="translate(1242.4,962.9)">
<g fill="#33c733" stroke="#000" stroke-width="0.9">
<rect x="0.45" y="5.85" width="8.2" height="8.8"/>
<rect x="11.35" y="5.85" width="8.2" height="8.8"/>
<rect x="22.25" y="5.85" width="8.2" height="8.8"/>
<rect x="33.15" y="5.85" width="8.2" height="8.8"/>
<rect x="0.45" y="16.92" width="8.2" height="8.8"/>
<rect x="11.35" y="16.92" width="8.2" height="8.8"/>
<rect x="22.25" y="16.92" width="8.2" height="8.8"/>
<rect x="33.15" y="16.92" width="8.2" height="8.8"/>
<rect x="0.45" y="27.99" width="8.2" height="8.8"/>
<rect x="11.35" y="27.99" width="8.2" height="8.8"/>
<rect x="22.25" y="27.99" width="8.2" height="8.8"/>
<rect x="33.15" y="27.99" width="8.2" height="8.8"/>
<rect x="0.45" y="39.06" width="8.2" height="8.8"/>
<rect x="11.35" y="39.06" width="8.2" height="8.8"/>
<rect x="22.25" y="39.06" width="8.2" height="8.8"/>
<rect x="33.15" y="39.06" width="8.2" height="8.8"/>
<rect x="0.45" y="50.13" width="8.2" height="8.8"/>
<rect x="11.35" y="50.13" width="8.2" height="8.8"/>
<rect x="22.25" y="50.13" width="8.2" height="8.8"/>
<rect x="33.15" y="50.13" width="8.2" height="8.8"/>
<rect x="0.45" y="61.2" width="8.2" height="8.8"/>
<rect x="11.35" y="61.2" width="8.2" height="8.8"/>
<rect x="22.25" y="61.2" width="8.2" height="8.8"/>
<rect x="33.15" y="61.2" width="8.2" height="8.8"/>
<rect x="0.45" y="72.27" width="8.2" height="8.8"/>
<rect x="11.35" y="72.27" width="8.2" height="8.8"/>
<rect x="22.25" y="72.27" width="8.2" height="8.8"/>
<rect x="33.15" y="72.27" width="8.2" height="8.8"/>
<rect x="0.45" y="83.34" width="8.2" height="8.8"/>
<rect x="11.35" y="83.34" width="8.2" height="8.8"/>
<rect x="22.25" y="83.34" width="8.2" height="8.8"/>
<rect x="33.15" y="83.34" width="8.2" height="8.8"/>
</g>
<rect x="0.5" y="96" width="40.8" height="7.1" fill="#74b2de" stroke="#000" stroke-width="1"/>
<rect x="0.5" y="105.6" width="40.8" height="5.8" fill="#f5963f" stroke="#000" stroke-width="1"/>
<rect x="0.5" y="115" width="18.7" height="3.6" fill="#a5500f" stroke="#000" stroke-width="1"/>
<rect x="22.6" y="115" width="18.7" height="3.6" fill="#a5500f" stroke="#000" stroke-width="1"/>
<rect x="0.5" y="120.9" width="40.8" height="7.6" fill="#235a68" stroke="#000" stroke-width="1"/>
</g>
<rect x="1183.7" y="937.8" width="24.5" height="9.5" fill="#2955a6" stroke="#000" stroke-width="1"/>
<rect x="1210.4" y="937.8" width="24.5" height="9.5" fill="#2955a6" stroke="#000" stroke-width="1"/>
<rect x="1237.1" y="937.8" width="24.5" height="9.5" fill="#2955a6" stroke="#000" stroke-width="1"/>
<rect x="1263.8" y="937.8" width="24.5" height="9.5" fill="#2955a6" stroke="#000" stroke-width="1"/>
<rect x="1183.7" y="951" width="104.6" height="8.2" fill="#74b2de" stroke="#000" stroke-width="1"/>
<rect x="1184.3" y="1100.6" width="105" height="8.8" fill="#74b2de" stroke="#000" stroke-width="1"/>
<text x="1182.6" y="1123.4" font-size="11.5" fill="#fff" stroke="#fff" stroke-width="0.25">SM</text>
<rect x="1177.85" y="1132.75" width="119.1" height="14.4" fill="#f1f96b" stroke="#000" stroke-width="1.1"/>
<text x="1237.1" y="1142.9" font-size="10.6" fill="#111" text-anchor="middle" stroke="#111" stroke-width="0.25">PolyMorph Engine</text>
<text x="1179.3" y="1160" font-size="11.7" fill="#fff" font-weight="normal" stroke="#fff" stroke-width="0.45">TPC</text>
<polygon fill="#dcdcdc" points="1230.8,1164.3 1240.69,1169.7 1234.2,1169.7 1234.2,1175.8 1227.4,1175.8 1227.4,1169.7 1220.91,1169.7"/>
<polygon fill="#dcdcdc" points="1243.78,1164.5 1250.58,1164.5 1250.58,1170.39 1256.86,1170.39 1247.18,1176.2 1237.6,1170.39 1243.78,1170.39"/>
<rect x="1307.7" y="754.6" width="126" height="410" fill="#3d3d3d" stroke="#4b4b4b" stroke-width="1"/>
<rect x="1310.7" y="758.6" width="120" height="368.8" fill="#3d3d3d" stroke="#4b4b4b" stroke-width="1"/>
<rect x="1317.4" y="764.5" width="105" height="8.8" fill="#4b4f51" stroke="#0c0c0c" stroke-width="1"/>
<rect x="1317.4" y="776.6" width="24.5" height="8.9" fill="#3e4147" stroke="#0c0c0c" stroke-width="1"/>
<rect x="1344.23" y="776.6" width="24.5" height="8.9" fill="#3e4147" stroke="#0c0c0c" stroke-width="1"/>
<rect x="1371.07" y="776.6" width="24.5" height="8.9" fill="#3e4147" stroke="#0c0c0c" stroke-width="1"/>
<rect x="1397.9" y="776.6" width="24.5" height="8.9" fill="#3e4147" stroke="#0c0c0c" stroke-width="1"/>
<rect x="1317.4" y="788.8" width="105" height="8.7" fill="#4b4f51" stroke="#0c0c0c" stroke-width="1"/>
<rect x="1317.5" y="800.3" width="50" height="133.3" fill="#3d3d3d" stroke="#4b4b4b" stroke-width="1"/>
<rect x="1371.3" y="800.3" width="50.7" height="133.3" fill="#3d3d3d" stroke="#4b4b4b" stroke-width="1"/>
<g transform="translate(1321.1,799.8)">
<g fill="#454c45" stroke="#0c0c0c" stroke-width="0.9">
<rect x="0.45" y="5.85" width="8.2" height="8.8"/>
<rect x="11.35" y="5.85" width="8.2" height="8.8"/>
<rect x="22.25" y="5.85" width="8.2" height="8.8"/>
<rect x="33.15" y="5.85" width="8.2" height="8.8"/>
<rect x="0.45" y="16.92" width="8.2" height="8.8"/>
<rect x="11.35" y="16.92" width="8.2" height="8.8"/>
<rect x="22.25" y="16.92" width="8.2" height="8.8"/>
<rect x="33.15" y="16.92" width="8.2" height="8.8"/>
<rect x="0.45" y="27.99" width="8.2" height="8.8"/>
<rect x="11.35" y="27.99" width="8.2" height="8.8"/>
<rect x="22.25" y="27.99" width="8.2" height="8.8"/>
<rect x="33.15" y="27.99" width="8.2" height="8.8"/>
<rect x="0.45" y="39.06" width="8.2" height="8.8"/>
<rect x="11.35" y="39.06" width="8.2" height="8.8"/>
<rect x="22.25" y="39.06" width="8.2" height="8.8"/>
<rect x="33.15" y="39.06" width="8.2" height="8.8"/>
<rect x="0.45" y="50.13" width="8.2" height="8.8"/>
<rect x="11.35" y="50.13" width="8.2" height="8.8"/>
<rect x="22.25" y="50.13" width="8.2" height="8.8"/>
<rect x="33.15" y="50.13" width="8.2" height="8.8"/>
<rect x="0.45" y="61.2" width="8.2" height="8.8"/>
<rect x="11.35" y="61.2" width="8.2" height="8.8"/>
<rect x="22.25" y="61.2" width="8.2" height="8.8"/>
<rect x="33.15" y="61.2" width="8.2" height="8.8"/>
<rect x="0.45" y="72.27" width="8.2" height="8.8"/>
<rect x="11.35" y="72.27" width="8.2" height="8.8"/>
<rect x="22.25" y="72.27" width="8.2" height="8.8"/>
<rect x="33.15" y="72.27" width="8.2" height="8.8"/>
<rect x="0.45" y="83.34" width="8.2" height="8.8"/>
<rect x="11.35" y="83.34" width="8.2" height="8.8"/>
<rect x="22.25" y="83.34" width="8.2" height="8.8"/>
<rect x="33.15" y="83.34" width="8.2" height="8.8"/>
</g>
<rect x="0.5" y="96" width="40.8" height="7.1" fill="#4b4f51" stroke="#0c0c0c" stroke-width="1"/>
<rect x="0.5" y="105.6" width="40.8" height="5.8" fill="#55514c" stroke="#0c0c0c" stroke-width="1"/>
<rect x="0.5" y="115" width="18.7" height="3.6" fill="#4a453c" stroke="#0c0c0c" stroke-width="1"/>
<rect x="22.6" y="115" width="18.7" height="3.6" fill="#4a453c" stroke="#0c0c0c" stroke-width="1"/>
<rect x="0.5" y="120.9" width="40.8" height="7.6" fill="#3f4345" stroke="#0c0c0c" stroke-width="1"/>
</g>
<g transform="translate(1375.5,799.8)">
<g fill="#454c45" stroke="#0c0c0c" stroke-width="0.9">
<rect x="0.45" y="5.85" width="8.2" height="8.8"/>
<rect x="11.35" y="5.85" width="8.2" height="8.8"/>
<rect x="22.25" y="5.85" width="8.2" height="8.8"/>
<rect x="33.15" y="5.85" width="8.2" height="8.8"/>
<rect x="0.45" y="16.92" width="8.2" height="8.8"/>
<rect x="11.35" y="16.92" width="8.2" height="8.8"/>
<rect x="22.25" y="16.92" width="8.2" height="8.8"/>
<rect x="33.15" y="16.92" width="8.2" height="8.8"/>
<rect x="0.45" y="27.99" width="8.2" height="8.8"/>
<rect x="11.35" y="27.99" width="8.2" height="8.8"/>
<rect x="22.25" y="27.99" width="8.2" height="8.8"/>
<rect x="33.15" y="27.99" width="8.2" height="8.8"/>
<rect x="0.45" y="39.06" width="8.2" height="8.8"/>
<rect x="11.35" y="39.06" width="8.2" height="8.8"/>
<rect x="22.25" y="39.06" width="8.2" height="8.8"/>
<rect x="33.15" y="39.06" width="8.2" height="8.8"/>
<rect x="0.45" y="50.13" width="8.2" height="8.8"/>
<rect x="11.35" y="50.13" width="8.2" height="8.8"/>
<rect x="22.25" y="50.13" width="8.2" height="8.8"/>
<rect x="33.15" y="50.13" width="8.2" height="8.8"/>
<rect x="0.45" y="61.2" width="8.2" height="8.8"/>
<rect x="11.35" y="61.2" width="8.2" height="8.8"/>
<rect x="22.25" y="61.2" width="8.2" height="8.8"/>
<rect x="33.15" y="61.2" width="8.2" height="8.8"/>
<rect x="0.45" y="72.27" width="8.2" height="8.8"/>
<rect x="11.35" y="72.27" width="8.2" height="8.8"/>
<rect x="22.25" y="72.27" width="8.2" height="8.8"/>
<rect x="33.15" y="72.27" width="8.2" height="8.8"/>
<rect x="0.45" y="83.34" width="8.2" height="8.8"/>
<rect x="11.35" y="83.34" width="8.2" height="8.8"/>
<rect x="22.25" y="83.34" width="8.2" height="8.8"/>
<rect x="33.15" y="83.34" width="8.2" height="8.8"/>
</g>
<rect x="0.5" y="96" width="40.8" height="7.1" fill="#4b4f51" stroke="#0c0c0c" stroke-width="1"/>
<rect x="0.5" y="105.6" width="40.8" height="5.8" fill="#55514c" stroke="#0c0c0c" stroke-width="1"/>
<rect x="0.5" y="115" width="18.7" height="3.6" fill="#4a453c" stroke="#0c0c0c" stroke-width="1"/>
<rect x="22.6" y="115" width="18.7" height="3.6" fill="#4a453c" stroke="#0c0c0c" stroke-width="1"/>
<rect x="0.5" y="120.9" width="40.8" height="7.6" fill="#3f4345" stroke="#0c0c0c" stroke-width="1"/>
</g>
<rect x="1317.5" y="963.4" width="50" height="133.3" fill="#3d3d3d" stroke="#4b4b4b" stroke-width="1"/>
<rect x="1371.3" y="963.4" width="50.7" height="133.3" fill="#3d3d3d" stroke="#4b4b4b" stroke-width="1"/>
<g transform="translate(1321.1,962.9)">
<g fill="#454c45" stroke="#0c0c0c" stroke-width="0.9">
<rect x="0.45" y="5.85" width="8.2" height="8.8"/>
<rect x="11.35" y="5.85" width="8.2" height="8.8"/>
<rect x="22.25" y="5.85" width="8.2" height="8.8"/>
<rect x="33.15" y="5.85" width="8.2" height="8.8"/>
<rect x="0.45" y="16.92" width="8.2" height="8.8"/>
<rect x="11.35" y="16.92" width="8.2" height="8.8"/>
<rect x="22.25" y="16.92" width="8.2" height="8.8"/>
<rect x="33.15" y="16.92" width="8.2" height="8.8"/>
<rect x="0.45" y="27.99" width="8.2" height="8.8"/>
<rect x="11.35" y="27.99" width="8.2" height="8.8"/>
<rect x="22.25" y="27.99" width="8.2" height="8.8"/>
<rect x="33.15" y="27.99" width="8.2" height="8.8"/>
<rect x="0.45" y="39.06" width="8.2" height="8.8"/>
<rect x="11.35" y="39.06" width="8.2" height="8.8"/>
<rect x="22.25" y="39.06" width="8.2" height="8.8"/>
<rect x="33.15" y="39.06" width="8.2" height="8.8"/>
<rect x="0.45" y="50.13" width="8.2" height="8.8"/>
<rect x="11.35" y="50.13" width="8.2" height="8.8"/>
<rect x="22.25" y="50.13" width="8.2" height="8.8"/>
<rect x="33.15" y="50.13" width="8.2" height="8.8"/>
<rect x="0.45" y="61.2" width="8.2" height="8.8"/>
<rect x="11.35" y="61.2" width="8.2" height="8.8"/>
<rect x="22.25" y="61.2" width="8.2" height="8.8"/>
<rect x="33.15" y="61.2" width="8.2" height="8.8"/>
<rect x="0.45" y="72.27" width="8.2" height="8.8"/>
<rect x="11.35" y="72.27" width="8.2" height="8.8"/>
<rect x="22.25" y="72.27" width="8.2" height="8.8"/>
<rect x="33.15" y="72.27" width="8.2" height="8.8"/>
<rect x="0.45" y="83.34" width="8.2" height="8.8"/>
<rect x="11.35" y="83.34" width="8.2" height="8.8"/>
<rect x="22.25" y="83.34" width="8.2" height="8.8"/>
<rect x="33.15" y="83.34" width="8.2" height="8.8"/>
</g>
<rect x="0.5" y="96" width="40.8" height="7.1" fill="#4b4f51" stroke="#0c0c0c" stroke-width="1"/>
<rect x="0.5" y="105.6" width="40.8" height="5.8" fill="#55514c" stroke="#0c0c0c" stroke-width="1"/>
<rect x="0.5" y="115" width="18.7" height="3.6" fill="#4a453c" stroke="#0c0c0c" stroke-width="1"/>
<rect x="22.6" y="115" width="18.7" height="3.6" fill="#4a453c" stroke="#0c0c0c" stroke-width="1"/>
<rect x="0.5" y="120.9" width="40.8" height="7.6" fill="#3f4345" stroke="#0c0c0c" stroke-width="1"/>
</g>
<g transform="translate(1375.5,962.9)">
<g fill="#454c45" stroke="#0c0c0c" stroke-width="0.9">
<rect x="0.45" y="5.85" width="8.2" height="8.8"/>
<rect x="11.35" y="5.85" width="8.2" height="8.8"/>
<rect x="22.25" y="5.85" width="8.2" height="8.8"/>
<rect x="33.15" y="5.85" width="8.2" height="8.8"/>
<rect x="0.45" y="16.92" width="8.2" height="8.8"/>
<rect x="11.35" y="16.92" width="8.2" height="8.8"/>
<rect x="22.25" y="16.92" width="8.2" height="8.8"/>
<rect x="33.15" y="16.92" width="8.2" height="8.8"/>
<rect x="0.45" y="27.99" width="8.2" height="8.8"/>
<rect x="11.35" y="27.99" width="8.2" height="8.8"/>
<rect x="22.25" y="27.99" width="8.2" height="8.8"/>
<rect x="33.15" y="27.99" width="8.2" height="8.8"/>
<rect x="0.45" y="39.06" width="8.2" height="8.8"/>
<rect x="11.35" y="39.06" width="8.2" height="8.8"/>
<rect x="22.25" y="39.06" width="8.2" height="8.8"/>
<rect x="33.15" y="39.06" width="8.2" height="8.8"/>
<rect x="0.45" y="50.13" width="8.2" height="8.8"/>
<rect x="11.35" y="50.13" width="8.2" height="8.8"/>
<rect x="22.25" y="50.13" width="8.2" height="8.8"/>
<rect x="33.15" y="50.13" width="8.2" height="8.8"/>
<rect x="0.45" y="61.2" width="8.2" height="8.8"/>
<rect x="11.35" y="61.2" width="8.2" height="8.8"/>
<rect x="22.25" y="61.2" width="8.2" height="8.8"/>
<rect x="33.15" y="61.2" width="8.2" height="8.8"/>
<rect x="0.45" y="72.27" width="8.2" height="8.8"/>
<rect x="11.35" y="72.27" width="8.2" height="8.8"/>
<rect x="22.25" y="72.27" width="8.2" height="8.8"/>
<rect x="33.15" y="72.27" width="8.2" height="8.8"/>
<rect x="0.45" y="83.34" width="8.2" height="8.8"/>
<rect x="11.35" y="83.34" width="8.2" height="8.8"/>
<rect x="22.25" y="83.34" width="8.2" height="8.8"/>
<rect x="33.15" y="83.34" width="8.2" height="8.8"/>
</g>
<rect x="0.5" y="96" width="40.8" height="7.1" fill="#4b4f51" stroke="#0c0c0c" stroke-width="1"/>
<rect x="0.5" y="105.6" width="40.8" height="5.8" fill="#55514c" stroke="#0c0c0c" stroke-width="1"/>
<rect x="0.5" y="115" width="18.7" height="3.6" fill="#4a453c" stroke="#0c0c0c" stroke-width="1"/>
<rect x="22.6" y="115" width="18.7" height="3.6" fill="#4a453c" stroke="#0c0c0c" stroke-width="1"/>
<rect x="0.5" y="120.9" width="40.8" height="7.6" fill="#3f4345" stroke="#0c0c0c" stroke-width="1"/>
</g>
<rect x="1316.8" y="937.8" width="24.5" height="9.5" fill="#3e4147" stroke="#0c0c0c" stroke-width="1"/>
<rect x="1343.5" y="937.8" width="24.5" height="9.5" fill="#3e4147" stroke="#0c0c0c" stroke-width="1"/>
<rect x="1370.2" y="937.8" width="24.5" height="9.5" fill="#3e4147" stroke="#0c0c0c" stroke-width="1"/>
<rect x="1396.9" y="937.8" width="24.5" height="9.5" fill="#3e4147" stroke="#0c0c0c" stroke-width="1"/>
<rect x="1316.8" y="951" width="104.6" height="8.2" fill="#4b4f51" stroke="#0c0c0c" stroke-width="1"/>
<rect x="1317.4" y="1100.6" width="105" height="8.8" fill="#4b4f51" stroke="#0c0c0c" stroke-width="1"/>
<text x="1315.7" y="1123.4" font-size="11.5" fill="#5c5c5c" stroke="#5c5c5c" stroke-width="0.25">SM</text>
<rect x="1310.95" y="1132.75" width="119.1" height="14.4" fill="#565650" stroke="#0c0c0c" stroke-width="1.1"/>
<text x="1370.2" y="1142.9" font-size="10.6" fill="#2c2c2c" text-anchor="middle" stroke="none" stroke-width="0.25">PolyMorph Engine</text>
<text x="1312.4" y="1160" font-size="11.7" fill="#4e4e4e" font-weight="normal" stroke="#4e4e4e" stroke-width="0.45">TPC</text>
<polygon fill="#dcdcdc" points="1363.9,1164.3 1373.79,1169.7 1367.3,1169.7 1367.3,1175.8 1360.5,1175.8 1360.5,1169.7 1354.01,1169.7"/>
<polygon fill="#dcdcdc" points="1376.88,1164.5 1383.68,1164.5 1383.68,1170.39 1389.96,1170.39 1380.28,1176.2 1370.7,1170.39 1376.88,1170.39"/>
<rect x="89" y="585.6" width="333" height="21.9" fill="#404040" stroke="#a8a8a8" stroke-width="1.2"/>
<rect x="95.9" y="590.5" width="36.2" height="12.2" fill="#2955a6" stroke="#000" stroke-width="1"/>
<rect x="136.52" y="590.5" width="36.2" height="12.2" fill="#2955a6" stroke="#000" stroke-width="1"/>
<rect x="177.14" y="590.5" width="36.2" height="12.2" fill="#2955a6" stroke="#000" stroke-width="1"/>
<rect x="217.76" y="590.5" width="36.2" height="12.2" fill="#2955a6" stroke="#000" stroke-width="1"/>
<rect x="258.38" y="590.5" width="36.2" height="12.2" fill="#2955a6" stroke="#000" stroke-width="1"/>
<rect x="299" y="590.5" width="36.2" height="12.2" fill="#2955a6" stroke="#000" stroke-width="1"/>
<rect x="339.62" y="590.5" width="36.2" height="12.2" fill="#2955a6" stroke="#000" stroke-width="1"/>
<rect x="380.24" y="590.5" width="36.2" height="12.2" fill="#2955a6" stroke="#000" stroke-width="1"/>
<rect x="428.5" y="585.6" width="333" height="21.9" fill="#404040" stroke="#a8a8a8" stroke-width="1.2"/>
<rect x="435.4" y="590.5" width="36.2" height="12.2" fill="#2955a6" stroke="#000" stroke-width="1"/>
<rect x="476.02" y="590.5" width="36.2" height="12.2" fill="#2955a6" stroke="#000" stroke-width="1"/>
<rect x="516.64" y="590.5" width="36.2" height="12.2" fill="#2955a6" stroke="#000" stroke-width="1"/>
<rect x="557.26" y="590.5" width="36.2" height="12.2" fill="#2955a6" stroke="#000" stroke-width="1"/>
<rect x="597.88" y="590.5" width="36.2" height="12.2" fill="#2955a6" stroke="#000" stroke-width="1"/>
<rect x="638.5" y="590.5" width="36.2" height="12.2" fill="#2955a6" stroke="#000" stroke-width="1"/>
<rect x="679.12" y="590.5" width="36.2" height="12.2" fill="#2955a6" stroke="#000" stroke-width="1"/>
<rect x="719.74" y="590.5" width="36.2" height="12.2" fill="#2955a6" stroke="#000" stroke-width="1"/>
<rect x="768.4" y="585.6" width="333" height="21.9" fill="#404040" stroke="#a8a8a8" stroke-width="1.2"/>
<rect x="775.3" y="590.5" width="36.2" height="12.2" fill="#2955a6" stroke="#000" stroke-width="1"/>
<rect x="815.92" y="590.5" width="36.2" height="12.2" fill="#2955a6" stroke="#000" stroke-width="1"/>
<rect x="856.54" y="590.5" width="36.2" height="12.2" fill="#2955a6" stroke="#000" stroke-width="1"/>
<rect x="897.16" y="590.5" width="36.2" height="12.2" fill="#2955a6" stroke="#000" stroke-width="1"/>
<rect x="937.78" y="590.5" width="36.2" height="12.2" fill="#2955a6" stroke="#000" stroke-width="1"/>
<rect x="978.4" y="590.5" width="36.2" height="12.2" fill="#2955a6" stroke="#000" stroke-width="1"/>
<rect x="1019.02" y="590.5" width="36.2" height="12.2" fill="#2955a6" stroke="#000" stroke-width="1"/>
<rect x="1059.64" y="590.5" width="36.2" height="12.2" fill="#2955a6" stroke="#000" stroke-width="1"/>
<rect x="1108.2" y="585.6" width="333" height="21.9" fill="#404040" stroke="#a8a8a8" stroke-width="1.2"/>
<rect x="1115.1" y="590.5" width="36.2" height="12.2" fill="#2955a6" stroke="#000" stroke-width="1"/>
<rect x="1155.72" y="590.5" width="36.2" height="12.2" fill="#2955a6" stroke="#000" stroke-width="1"/>
<rect x="1196.34" y="590.5" width="36.2" height="12.2" fill="#2955a6" stroke="#000" stroke-width="1"/>
<rect x="1236.96" y="590.5" width="36.2" height="12.2" fill="#2955a6" stroke="#000" stroke-width="1"/>
<rect x="1277.58" y="590.5" width="36.2" height="12.2" fill="#2955a6" stroke="#000" stroke-width="1"/>
<rect x="1318.2" y="590.5" width="36.2" height="12.2" fill="#2955a6" stroke="#000" stroke-width="1"/>
<rect x="1358.82" y="590.5" width="36.2" height="12.2" fill="#2955a6" stroke="#000" stroke-width="1"/>
<rect x="1399.44" y="590.5" width="36.2" height="12.2" fill="#2955a6" stroke="#000" stroke-width="1"/>
<rect x="89.5" y="711.6" width="333" height="22.1" fill="#404040" stroke="#a8a8a8" stroke-width="1.2"/>
<rect x="96.4" y="716.7" width="36.2" height="11.6" fill="#2955a6" stroke="#000" stroke-width="1"/>
<rect x="137.02" y="716.7" width="36.2" height="11.6" fill="#2955a6" stroke="#000" stroke-width="1"/>
<rect x="177.64" y="716.7" width="36.2" height="11.6" fill="#2955a6" stroke="#000" stroke-width="1"/>
<rect x="218.26" y="716.7" width="36.2" height="11.6" fill="#2955a6" stroke="#000" stroke-width="1"/>
<rect x="258.88" y="716.7" width="36.2" height="11.6" fill="#2955a6" stroke="#000" stroke-width="1"/>
<rect x="299.5" y="716.7" width="36.2" height="11.6" fill="#2955a6" stroke="#000" stroke-width="1"/>
<rect x="340.12" y="716.7" width="36.2" height="11.6" fill="#2955a6" stroke="#000" stroke-width="1"/>
<rect x="380.74" y="716.7" width="36.2" height="11.6" fill="#2955a6" stroke="#000" stroke-width="1"/>
<rect x="429" y="711.6" width="333" height="22.1" fill="#404040" stroke="#a8a8a8" stroke-width="1.2"/>
<rect x="435.9" y="716.7" width="36.2" height="11.6" fill="#2955a6" stroke="#000" stroke-width="1"/>
<rect x="476.52" y="716.7" width="36.2" height="11.6" fill="#2955a6" stroke="#000" stroke-width="1"/>
<rect x="517.14" y="716.7" width="36.2" height="11.6" fill="#2955a6" stroke="#000" stroke-width="1"/>
<rect x="557.76" y="716.7" width="36.2" height="11.6" fill="#2955a6" stroke="#000" stroke-width="1"/>
<rect x="598.38" y="716.7" width="36.2" height="11.6" fill="#2955a6" stroke="#000" stroke-width="1"/>
<rect x="639" y="716.7" width="36.2" height="11.6" fill="#2955a6" stroke="#000" stroke-width="1"/>
<rect x="679.62" y="716.7" width="36.2" height="11.6" fill="#2955a6" stroke="#000" stroke-width="1"/>
<rect x="720.24" y="716.7" width="36.2" height="11.6" fill="#2955a6" stroke="#000" stroke-width="1"/>
<rect x="768.9" y="711.6" width="333" height="22.1" fill="#404040" stroke="#a8a8a8" stroke-width="1.2"/>
<rect x="775.8" y="716.7" width="36.2" height="11.6" fill="#2955a6" stroke="#000" stroke-width="1"/>
<rect x="816.42" y="716.7" width="36.2" height="11.6" fill="#2955a6" stroke="#000" stroke-width="1"/>
<rect x="857.04" y="716.7" width="36.2" height="11.6" fill="#2955a6" stroke="#000" stroke-width="1"/>
<rect x="897.66" y="716.7" width="36.2" height="11.6" fill="#2955a6" stroke="#000" stroke-width="1"/>
<rect x="938.28" y="716.7" width="36.2" height="11.6" fill="#2955a6" stroke="#000" stroke-width="1"/>
<rect x="978.9" y="716.7" width="36.2" height="11.6" fill="#2955a6" stroke="#000" stroke-width="1"/>
<rect x="1019.52" y="716.7" width="36.2" height="11.6" fill="#2955a6" stroke="#000" stroke-width="1"/>
<rect x="1060.14" y="716.7" width="36.2" height="11.6" fill="#2955a6" stroke="#000" stroke-width="1"/>
<rect x="1108.7" y="711.6" width="333" height="22.1" fill="#404040" stroke="#a8a8a8" stroke-width="1.2"/>
<rect x="1115.6" y="716.7" width="36.2" height="11.6" fill="#2955a6" stroke="#000" stroke-width="1"/>
<rect x="1156.22" y="716.7" width="36.2" height="11.6" fill="#2955a6" stroke="#000" stroke-width="1"/>
<rect x="1196.84" y="716.7" width="36.2" height="11.6" fill="#2955a6" stroke="#000" stroke-width="1"/>
<rect x="1237.46" y="716.7" width="36.2" height="11.6" fill="#2955a6" stroke="#000" stroke-width="1"/>
<rect x="1278.08" y="716.7" width="36.2" height="11.6" fill="#2955a6" stroke="#000" stroke-width="1"/>
<rect x="1318.7" y="716.7" width="36.2" height="11.6" fill="#2955a6" stroke="#000" stroke-width="1"/>
<rect x="1359.32" y="716.7" width="36.2" height="11.6" fill="#2955a6" stroke="#000" stroke-width="1"/>
<rect x="1399.94" y="716.7" width="36.2" height="11.6" fill="#2955a6" stroke="#000" stroke-width="1"/>
<rect x="88.5" y="617.4" width="1353.2" height="84.3" fill="#74b2de" stroke="#b9cfdf" stroke-width="1"/>
<text x="764.9" y="664" font-size="18.5" fill="#fff" text-anchor="middle">L2 Cache</text>
</svg>
</body></html>
